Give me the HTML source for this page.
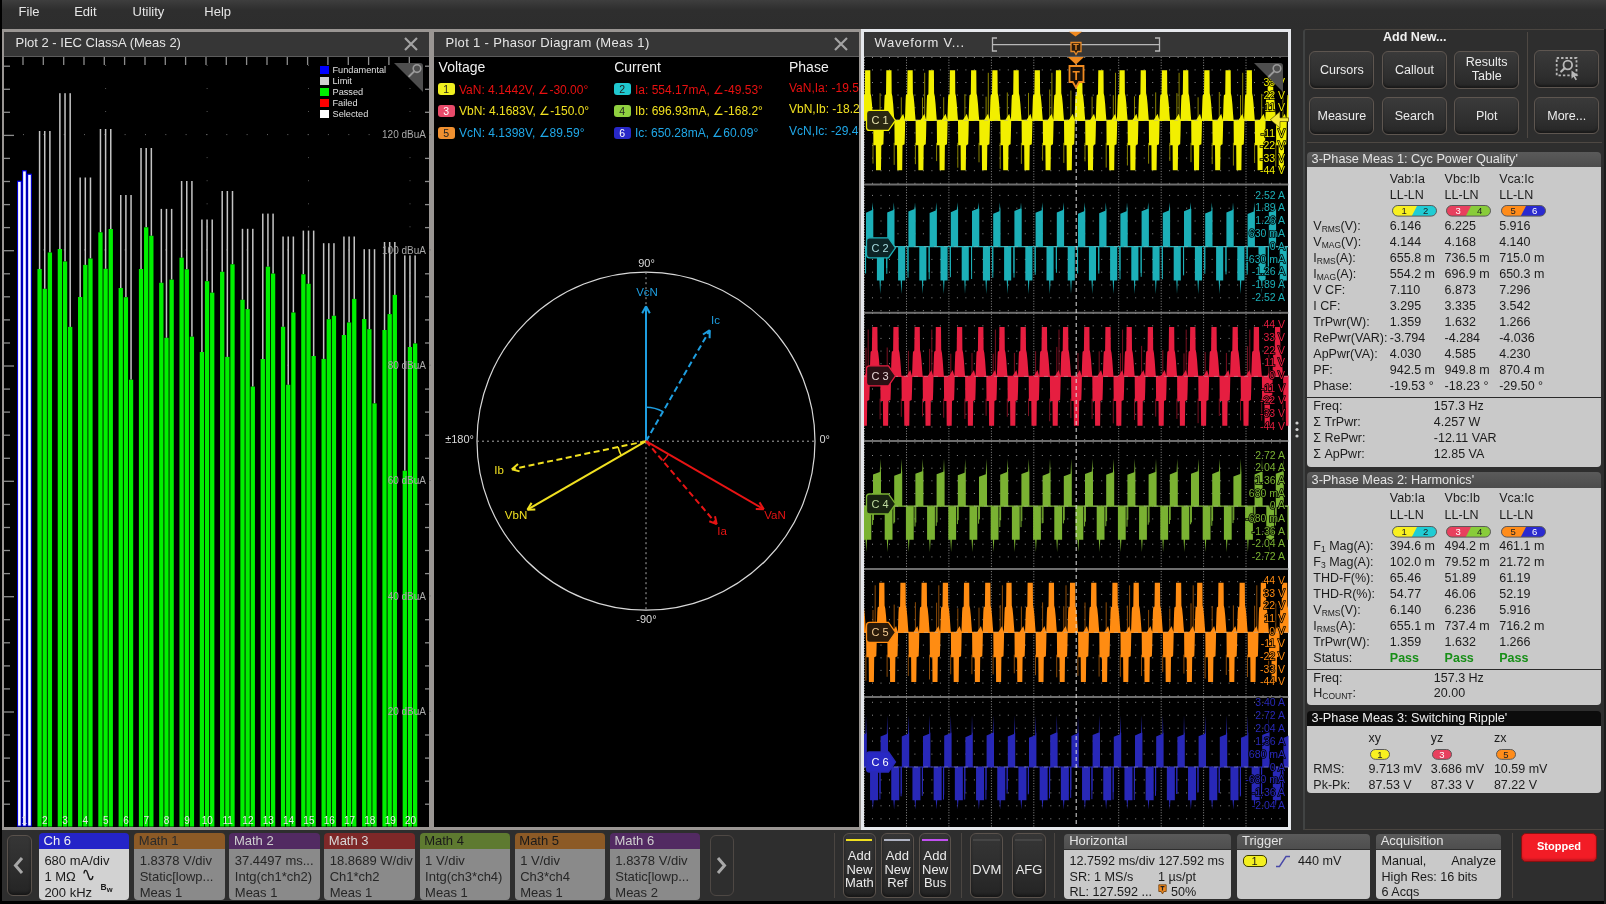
<!DOCTYPE html><html><head><meta charset="utf-8"><style>
html,body{margin:0;padding:0;}
body{width:1606px;height:904px;overflow:hidden;position:relative;background:#2e2e2e;font-family:"Liberation Sans", sans-serif;}
.t{position:absolute;white-space:nowrap;line-height:1.15;}
#w{position:absolute;left:0;top:0;width:1606px;height:904px;will-change:transform;}
.b{position:absolute;box-sizing:border-box;}
svg{position:absolute;overflow:visible;}
</style></head><body><div id="w">
<div class="b" style="left:0px;top:0px;width:1606px;height:29px;background:linear-gradient(#3e3e3e 0px,#2e2e2e 10px,#2d2d2d 29px);"></div><div class="b" style="left:0px;top:0px;width:2px;height:904px;background:#000;"></div><div class="b" style="left:0px;top:901px;width:1606px;height:3px;background:#000;"></div><div class="t" style="left:18.6px;top:4.5px;font-size:13px;color:#e6e6e6;font-weight:normal;">File</div><div class="t" style="left:74.2px;top:4.5px;font-size:13px;color:#e6e6e6;font-weight:normal;">Edit</div><div class="t" style="left:132.5px;top:4.5px;font-size:13px;color:#e6e6e6;font-weight:normal;">Utility</div><div class="t" style="left:204.3px;top:4.5px;font-size:13px;color:#e6e6e6;font-weight:normal;">Help</div><div class="b" style="left:2px;top:29px;width:430px;height:801px;background:#000;border:2px solid #9a9693;border-top-width:3px;border-bottom-width:3px;border-right-width:3px;"></div><div class="b" style="left:4px;top:32px;width:425px;height:24px;background:#363636;"></div><div class="b" style="left:4px;top:56px;width:425px;height:1px;background:#5c5c5c;"></div><div class="t" style="left:15.5px;top:35.7px;font-size:13px;color:#e6e6e6;font-weight:normal;">Plot 2 - IEC ClassA (Meas 2)</div><div class="b" style="left:431px;top:29px;width:430px;height:801px;background:#000;border:2px solid #9a9693;border-top-width:3px;border-bottom-width:3px;border-left-width:3px;"></div><div class="b" style="left:434px;top:32px;width:425px;height:24px;background:#363636;"></div><div class="b" style="left:434px;top:56px;width:425px;height:1px;background:#5c5c5c;"></div><div class="t" style="left:445.4px;top:35.8px;font-size:13px;color:#e6e6e6;font-weight:normal;letter-spacing:0.33px;">Plot 1 - Phasor Diagram (Meas 1)</div><div class="b" style="left:861px;top:29px;width:430px;height:801px;background:#000;border:3px solid #e6e8ec;"></div><div class="b" style="left:864px;top:32px;width:424px;height:24px;background:#363636;"></div><div class="b" style="left:864px;top:56px;width:424px;height:1px;background:#5c5c5c;"></div><div class="t" style="left:874.4px;top:35.8px;font-size:13px;color:#e6e6e6;font-weight:normal;letter-spacing:0.75px;">Waveform V...</div><svg style="left:403.7px;top:37.4px" width="14" height="14"><path d="M1 1L13 13M13 1L1 13" stroke="#a3a3a3" stroke-width="2.2"/></svg><svg style="left:833.5px;top:37.4px" width="14" height="14"><path d="M1 1L13 13M13 1L1 13" stroke="#a3a3a3" stroke-width="2.2"/></svg><svg style="left:0;top:0" width="1606" height="904"><line x1="4" y1="804.2" x2="10" y2="804.2" stroke="#8c8c8c" stroke-width="1.3"/><line x1="425" y1="804.2" x2="429" y2="804.2" stroke="#8c8c8c" stroke-width="1.3"/><line x1="4" y1="781.2" x2="10" y2="781.2" stroke="#8c8c8c" stroke-width="1.3"/><line x1="425" y1="781.2" x2="429" y2="781.2" stroke="#8c8c8c" stroke-width="1.3"/><line x1="4" y1="758.1" x2="10" y2="758.1" stroke="#8c8c8c" stroke-width="1.3"/><line x1="425" y1="758.1" x2="429" y2="758.1" stroke="#8c8c8c" stroke-width="1.3"/><line x1="4" y1="735.0" x2="10" y2="735.0" stroke="#8c8c8c" stroke-width="1.3"/><line x1="425" y1="735.0" x2="429" y2="735.0" stroke="#8c8c8c" stroke-width="1.3"/><line x1="4" y1="712.0" x2="14" y2="712.0" stroke="#8c8c8c" stroke-width="1.3"/><line x1="4" y1="688.9" x2="10" y2="688.9" stroke="#8c8c8c" stroke-width="1.3"/><line x1="425" y1="688.9" x2="429" y2="688.9" stroke="#8c8c8c" stroke-width="1.3"/><line x1="4" y1="665.9" x2="10" y2="665.9" stroke="#8c8c8c" stroke-width="1.3"/><line x1="425" y1="665.9" x2="429" y2="665.9" stroke="#8c8c8c" stroke-width="1.3"/><line x1="4" y1="642.8" x2="10" y2="642.8" stroke="#8c8c8c" stroke-width="1.3"/><line x1="425" y1="642.8" x2="429" y2="642.8" stroke="#8c8c8c" stroke-width="1.3"/><line x1="4" y1="619.7" x2="10" y2="619.7" stroke="#8c8c8c" stroke-width="1.3"/><line x1="425" y1="619.7" x2="429" y2="619.7" stroke="#8c8c8c" stroke-width="1.3"/><line x1="4" y1="596.7" x2="14" y2="596.7" stroke="#8c8c8c" stroke-width="1.3"/><line x1="4" y1="573.6" x2="10" y2="573.6" stroke="#8c8c8c" stroke-width="1.3"/><line x1="425" y1="573.6" x2="429" y2="573.6" stroke="#8c8c8c" stroke-width="1.3"/><line x1="4" y1="550.5" x2="10" y2="550.5" stroke="#8c8c8c" stroke-width="1.3"/><line x1="425" y1="550.5" x2="429" y2="550.5" stroke="#8c8c8c" stroke-width="1.3"/><line x1="4" y1="527.5" x2="10" y2="527.5" stroke="#8c8c8c" stroke-width="1.3"/><line x1="425" y1="527.5" x2="429" y2="527.5" stroke="#8c8c8c" stroke-width="1.3"/><line x1="4" y1="504.4" x2="10" y2="504.4" stroke="#8c8c8c" stroke-width="1.3"/><line x1="425" y1="504.4" x2="429" y2="504.4" stroke="#8c8c8c" stroke-width="1.3"/><line x1="4" y1="481.3" x2="14" y2="481.3" stroke="#8c8c8c" stroke-width="1.3"/><line x1="4" y1="458.3" x2="10" y2="458.3" stroke="#8c8c8c" stroke-width="1.3"/><line x1="425" y1="458.3" x2="429" y2="458.3" stroke="#8c8c8c" stroke-width="1.3"/><line x1="4" y1="435.2" x2="10" y2="435.2" stroke="#8c8c8c" stroke-width="1.3"/><line x1="425" y1="435.2" x2="429" y2="435.2" stroke="#8c8c8c" stroke-width="1.3"/><line x1="4" y1="412.1" x2="10" y2="412.1" stroke="#8c8c8c" stroke-width="1.3"/><line x1="425" y1="412.1" x2="429" y2="412.1" stroke="#8c8c8c" stroke-width="1.3"/><line x1="4" y1="389.1" x2="10" y2="389.1" stroke="#8c8c8c" stroke-width="1.3"/><line x1="425" y1="389.1" x2="429" y2="389.1" stroke="#8c8c8c" stroke-width="1.3"/><line x1="4" y1="366.0" x2="14" y2="366.0" stroke="#8c8c8c" stroke-width="1.3"/><line x1="4" y1="343.0" x2="10" y2="343.0" stroke="#8c8c8c" stroke-width="1.3"/><line x1="425" y1="343.0" x2="429" y2="343.0" stroke="#8c8c8c" stroke-width="1.3"/><line x1="4" y1="319.9" x2="10" y2="319.9" stroke="#8c8c8c" stroke-width="1.3"/><line x1="425" y1="319.9" x2="429" y2="319.9" stroke="#8c8c8c" stroke-width="1.3"/><line x1="4" y1="296.8" x2="10" y2="296.8" stroke="#8c8c8c" stroke-width="1.3"/><line x1="425" y1="296.8" x2="429" y2="296.8" stroke="#8c8c8c" stroke-width="1.3"/><line x1="4" y1="273.8" x2="10" y2="273.8" stroke="#8c8c8c" stroke-width="1.3"/><line x1="425" y1="273.8" x2="429" y2="273.8" stroke="#8c8c8c" stroke-width="1.3"/><line x1="4" y1="250.7" x2="14" y2="250.7" stroke="#8c8c8c" stroke-width="1.3"/><line x1="4" y1="227.6" x2="10" y2="227.6" stroke="#8c8c8c" stroke-width="1.3"/><line x1="425" y1="227.6" x2="429" y2="227.6" stroke="#8c8c8c" stroke-width="1.3"/><line x1="4" y1="204.6" x2="10" y2="204.6" stroke="#8c8c8c" stroke-width="1.3"/><line x1="425" y1="204.6" x2="429" y2="204.6" stroke="#8c8c8c" stroke-width="1.3"/><line x1="4" y1="181.5" x2="10" y2="181.5" stroke="#8c8c8c" stroke-width="1.3"/><line x1="425" y1="181.5" x2="429" y2="181.5" stroke="#8c8c8c" stroke-width="1.3"/><line x1="4" y1="158.4" x2="10" y2="158.4" stroke="#8c8c8c" stroke-width="1.3"/><line x1="425" y1="158.4" x2="429" y2="158.4" stroke="#8c8c8c" stroke-width="1.3"/><line x1="4" y1="135.4" x2="14" y2="135.4" stroke="#8c8c8c" stroke-width="1.3"/><line x1="4" y1="112.3" x2="10" y2="112.3" stroke="#8c8c8c" stroke-width="1.3"/><line x1="425" y1="112.3" x2="429" y2="112.3" stroke="#8c8c8c" stroke-width="1.3"/><line x1="4" y1="89.3" x2="10" y2="89.3" stroke="#8c8c8c" stroke-width="1.3"/><line x1="425" y1="89.3" x2="429" y2="89.3" stroke="#8c8c8c" stroke-width="1.3"/><line x1="4" y1="66.2" x2="10" y2="66.2" stroke="#8c8c8c" stroke-width="1.3"/><line x1="425" y1="66.2" x2="429" y2="66.2" stroke="#8c8c8c" stroke-width="1.3"/><line x1="23.0" y1="57" x2="23.0" y2="65" stroke="#8c8c8c" stroke-width="1.3"/><line x1="43.3" y1="57" x2="43.3" y2="65" stroke="#8c8c8c" stroke-width="1.3"/><line x1="63.7" y1="57" x2="63.7" y2="65" stroke="#8c8c8c" stroke-width="1.3"/><line x1="84.0" y1="57" x2="84.0" y2="65" stroke="#8c8c8c" stroke-width="1.3"/><line x1="104.3" y1="57" x2="104.3" y2="65" stroke="#8c8c8c" stroke-width="1.3"/><line x1="124.6" y1="57" x2="124.6" y2="65" stroke="#8c8c8c" stroke-width="1.3"/><line x1="145.0" y1="57" x2="145.0" y2="65" stroke="#8c8c8c" stroke-width="1.3"/><line x1="165.3" y1="57" x2="165.3" y2="65" stroke="#8c8c8c" stroke-width="1.3"/><line x1="185.6" y1="57" x2="185.6" y2="65" stroke="#8c8c8c" stroke-width="1.3"/><line x1="206.0" y1="57" x2="206.0" y2="65" stroke="#8c8c8c" stroke-width="1.3"/><line x1="226.3" y1="57" x2="226.3" y2="65" stroke="#8c8c8c" stroke-width="1.3"/><line x1="246.6" y1="57" x2="246.6" y2="65" stroke="#8c8c8c" stroke-width="1.3"/><line x1="267.0" y1="57" x2="267.0" y2="65" stroke="#8c8c8c" stroke-width="1.3"/><line x1="287.3" y1="57" x2="287.3" y2="65" stroke="#8c8c8c" stroke-width="1.3"/><line x1="307.6" y1="57" x2="307.6" y2="65" stroke="#8c8c8c" stroke-width="1.3"/><line x1="327.9" y1="57" x2="327.9" y2="65" stroke="#8c8c8c" stroke-width="1.3"/><line x1="348.3" y1="57" x2="348.3" y2="65" stroke="#8c8c8c" stroke-width="1.3"/><line x1="368.6" y1="57" x2="368.6" y2="65" stroke="#8c8c8c" stroke-width="1.3"/><line x1="388.9" y1="57" x2="388.9" y2="65" stroke="#8c8c8c" stroke-width="1.3"/><line x1="409.3" y1="57" x2="409.3" y2="65" stroke="#8c8c8c" stroke-width="1.3"/><rect x="23.0" y="710.7" width="1" height="1" fill="#666"/><rect x="43.3" y="710.7" width="1" height="1" fill="#666"/><rect x="63.7" y="710.7" width="1" height="1" fill="#666"/><rect x="84.0" y="710.7" width="1" height="1" fill="#666"/><rect x="104.3" y="710.7" width="1" height="1" fill="#666"/><rect x="124.6" y="710.7" width="1" height="1" fill="#666"/><rect x="145.0" y="710.7" width="1" height="1" fill="#666"/><rect x="165.3" y="710.7" width="1" height="1" fill="#666"/><rect x="185.6" y="710.7" width="1" height="1" fill="#666"/><rect x="206.0" y="710.7" width="1" height="1" fill="#666"/><rect x="226.3" y="710.7" width="1" height="1" fill="#666"/><rect x="246.6" y="710.7" width="1" height="1" fill="#666"/><rect x="267.0" y="710.7" width="1" height="1" fill="#666"/><rect x="287.3" y="710.7" width="1" height="1" fill="#666"/><rect x="307.6" y="710.7" width="1" height="1" fill="#666"/><rect x="327.9" y="710.7" width="1" height="1" fill="#666"/><rect x="348.3" y="710.7" width="1" height="1" fill="#666"/><rect x="368.6" y="710.7" width="1" height="1" fill="#666"/><rect x="388.9" y="710.7" width="1" height="1" fill="#666"/><rect x="409.3" y="710.7" width="1" height="1" fill="#666"/><rect x="429.6" y="710.7" width="1" height="1" fill="#666"/><rect x="23.0" y="595.4" width="1" height="1" fill="#666"/><rect x="43.3" y="595.4" width="1" height="1" fill="#666"/><rect x="63.7" y="595.4" width="1" height="1" fill="#666"/><rect x="84.0" y="595.4" width="1" height="1" fill="#666"/><rect x="104.3" y="595.4" width="1" height="1" fill="#666"/><rect x="124.6" y="595.4" width="1" height="1" fill="#666"/><rect x="145.0" y="595.4" width="1" height="1" fill="#666"/><rect x="165.3" y="595.4" width="1" height="1" fill="#666"/><rect x="185.6" y="595.4" width="1" height="1" fill="#666"/><rect x="206.0" y="595.4" width="1" height="1" fill="#666"/><rect x="226.3" y="595.4" width="1" height="1" fill="#666"/><rect x="246.6" y="595.4" width="1" height="1" fill="#666"/><rect x="267.0" y="595.4" width="1" height="1" fill="#666"/><rect x="287.3" y="595.4" width="1" height="1" fill="#666"/><rect x="307.6" y="595.4" width="1" height="1" fill="#666"/><rect x="327.9" y="595.4" width="1" height="1" fill="#666"/><rect x="348.3" y="595.4" width="1" height="1" fill="#666"/><rect x="368.6" y="595.4" width="1" height="1" fill="#666"/><rect x="388.9" y="595.4" width="1" height="1" fill="#666"/><rect x="409.3" y="595.4" width="1" height="1" fill="#666"/><rect x="429.6" y="595.4" width="1" height="1" fill="#666"/><rect x="23.0" y="480.0" width="1" height="1" fill="#666"/><rect x="43.3" y="480.0" width="1" height="1" fill="#666"/><rect x="63.7" y="480.0" width="1" height="1" fill="#666"/><rect x="84.0" y="480.0" width="1" height="1" fill="#666"/><rect x="104.3" y="480.0" width="1" height="1" fill="#666"/><rect x="124.6" y="480.0" width="1" height="1" fill="#666"/><rect x="145.0" y="480.0" width="1" height="1" fill="#666"/><rect x="165.3" y="480.0" width="1" height="1" fill="#666"/><rect x="185.6" y="480.0" width="1" height="1" fill="#666"/><rect x="206.0" y="480.0" width="1" height="1" fill="#666"/><rect x="226.3" y="480.0" width="1" height="1" fill="#666"/><rect x="246.6" y="480.0" width="1" height="1" fill="#666"/><rect x="267.0" y="480.0" width="1" height="1" fill="#666"/><rect x="287.3" y="480.0" width="1" height="1" fill="#666"/><rect x="307.6" y="480.0" width="1" height="1" fill="#666"/><rect x="327.9" y="480.0" width="1" height="1" fill="#666"/><rect x="348.3" y="480.0" width="1" height="1" fill="#666"/><rect x="368.6" y="480.0" width="1" height="1" fill="#666"/><rect x="388.9" y="480.0" width="1" height="1" fill="#666"/><rect x="409.3" y="480.0" width="1" height="1" fill="#666"/><rect x="429.6" y="480.0" width="1" height="1" fill="#666"/><rect x="23.0" y="364.7" width="1" height="1" fill="#666"/><rect x="43.3" y="364.7" width="1" height="1" fill="#666"/><rect x="63.7" y="364.7" width="1" height="1" fill="#666"/><rect x="84.0" y="364.7" width="1" height="1" fill="#666"/><rect x="104.3" y="364.7" width="1" height="1" fill="#666"/><rect x="124.6" y="364.7" width="1" height="1" fill="#666"/><rect x="145.0" y="364.7" width="1" height="1" fill="#666"/><rect x="165.3" y="364.7" width="1" height="1" fill="#666"/><rect x="185.6" y="364.7" width="1" height="1" fill="#666"/><rect x="206.0" y="364.7" width="1" height="1" fill="#666"/><rect x="226.3" y="364.7" width="1" height="1" fill="#666"/><rect x="246.6" y="364.7" width="1" height="1" fill="#666"/><rect x="267.0" y="364.7" width="1" height="1" fill="#666"/><rect x="287.3" y="364.7" width="1" height="1" fill="#666"/><rect x="307.6" y="364.7" width="1" height="1" fill="#666"/><rect x="327.9" y="364.7" width="1" height="1" fill="#666"/><rect x="348.3" y="364.7" width="1" height="1" fill="#666"/><rect x="368.6" y="364.7" width="1" height="1" fill="#666"/><rect x="388.9" y="364.7" width="1" height="1" fill="#666"/><rect x="409.3" y="364.7" width="1" height="1" fill="#666"/><rect x="429.6" y="364.7" width="1" height="1" fill="#666"/><rect x="23.0" y="249.4" width="1" height="1" fill="#666"/><rect x="43.3" y="249.4" width="1" height="1" fill="#666"/><rect x="63.7" y="249.4" width="1" height="1" fill="#666"/><rect x="84.0" y="249.4" width="1" height="1" fill="#666"/><rect x="104.3" y="249.4" width="1" height="1" fill="#666"/><rect x="124.6" y="249.4" width="1" height="1" fill="#666"/><rect x="145.0" y="249.4" width="1" height="1" fill="#666"/><rect x="165.3" y="249.4" width="1" height="1" fill="#666"/><rect x="185.6" y="249.4" width="1" height="1" fill="#666"/><rect x="206.0" y="249.4" width="1" height="1" fill="#666"/><rect x="226.3" y="249.4" width="1" height="1" fill="#666"/><rect x="246.6" y="249.4" width="1" height="1" fill="#666"/><rect x="267.0" y="249.4" width="1" height="1" fill="#666"/><rect x="287.3" y="249.4" width="1" height="1" fill="#666"/><rect x="307.6" y="249.4" width="1" height="1" fill="#666"/><rect x="327.9" y="249.4" width="1" height="1" fill="#666"/><rect x="348.3" y="249.4" width="1" height="1" fill="#666"/><rect x="368.6" y="249.4" width="1" height="1" fill="#666"/><rect x="388.9" y="249.4" width="1" height="1" fill="#666"/><rect x="409.3" y="249.4" width="1" height="1" fill="#666"/><rect x="429.6" y="249.4" width="1" height="1" fill="#666"/><rect x="23.0" y="134.1" width="1" height="1" fill="#666"/><rect x="43.3" y="134.1" width="1" height="1" fill="#666"/><rect x="63.7" y="134.1" width="1" height="1" fill="#666"/><rect x="84.0" y="134.1" width="1" height="1" fill="#666"/><rect x="104.3" y="134.1" width="1" height="1" fill="#666"/><rect x="124.6" y="134.1" width="1" height="1" fill="#666"/><rect x="145.0" y="134.1" width="1" height="1" fill="#666"/><rect x="165.3" y="134.1" width="1" height="1" fill="#666"/><rect x="185.6" y="134.1" width="1" height="1" fill="#666"/><rect x="206.0" y="134.1" width="1" height="1" fill="#666"/><rect x="226.3" y="134.1" width="1" height="1" fill="#666"/><rect x="246.6" y="134.1" width="1" height="1" fill="#666"/><rect x="267.0" y="134.1" width="1" height="1" fill="#666"/><rect x="287.3" y="134.1" width="1" height="1" fill="#666"/><rect x="307.6" y="134.1" width="1" height="1" fill="#666"/><rect x="327.9" y="134.1" width="1" height="1" fill="#666"/><rect x="348.3" y="134.1" width="1" height="1" fill="#666"/><rect x="368.6" y="134.1" width="1" height="1" fill="#666"/><rect x="388.9" y="134.1" width="1" height="1" fill="#666"/><rect x="409.3" y="134.1" width="1" height="1" fill="#666"/><rect x="429.6" y="134.1" width="1" height="1" fill="#666"/><rect x="105.1" y="826.0" width="1" height="1" fill="#555"/><rect x="105.1" y="802.9" width="1" height="1" fill="#555"/><rect x="105.1" y="779.9" width="1" height="1" fill="#555"/><rect x="105.1" y="756.8" width="1" height="1" fill="#555"/><rect x="105.1" y="733.7" width="1" height="1" fill="#555"/><rect x="105.1" y="710.7" width="1" height="1" fill="#555"/><rect x="105.1" y="687.6" width="1" height="1" fill="#555"/><rect x="105.1" y="664.6" width="1" height="1" fill="#555"/><rect x="105.1" y="641.5" width="1" height="1" fill="#555"/><rect x="105.1" y="618.4" width="1" height="1" fill="#555"/><rect x="105.1" y="595.4" width="1" height="1" fill="#555"/><rect x="105.1" y="572.3" width="1" height="1" fill="#555"/><rect x="105.1" y="549.2" width="1" height="1" fill="#555"/><rect x="105.1" y="526.2" width="1" height="1" fill="#555"/><rect x="105.1" y="503.1" width="1" height="1" fill="#555"/><rect x="105.1" y="480.0" width="1" height="1" fill="#555"/><rect x="105.1" y="457.0" width="1" height="1" fill="#555"/><rect x="105.1" y="433.9" width="1" height="1" fill="#555"/><rect x="105.1" y="410.8" width="1" height="1" fill="#555"/><rect x="105.1" y="387.8" width="1" height="1" fill="#555"/><rect x="105.1" y="364.7" width="1" height="1" fill="#555"/><rect x="105.1" y="341.7" width="1" height="1" fill="#555"/><rect x="105.1" y="318.6" width="1" height="1" fill="#555"/><rect x="105.1" y="295.5" width="1" height="1" fill="#555"/><rect x="105.1" y="272.5" width="1" height="1" fill="#555"/><rect x="105.1" y="249.4" width="1" height="1" fill="#555"/><rect x="105.1" y="226.3" width="1" height="1" fill="#555"/><rect x="105.1" y="203.3" width="1" height="1" fill="#555"/><rect x="105.1" y="180.2" width="1" height="1" fill="#555"/><rect x="105.1" y="157.1" width="1" height="1" fill="#555"/><rect x="105.1" y="134.1" width="1" height="1" fill="#555"/><rect x="105.1" y="111.0" width="1" height="1" fill="#555"/><rect x="105.1" y="88.0" width="1" height="1" fill="#555"/><rect x="105.1" y="64.9" width="1" height="1" fill="#555"/><rect x="206.6" y="826.0" width="1" height="1" fill="#555"/><rect x="206.6" y="802.9" width="1" height="1" fill="#555"/><rect x="206.6" y="779.9" width="1" height="1" fill="#555"/><rect x="206.6" y="756.8" width="1" height="1" fill="#555"/><rect x="206.6" y="733.7" width="1" height="1" fill="#555"/><rect x="206.6" y="710.7" width="1" height="1" fill="#555"/><rect x="206.6" y="687.6" width="1" height="1" fill="#555"/><rect x="206.6" y="664.6" width="1" height="1" fill="#555"/><rect x="206.6" y="641.5" width="1" height="1" fill="#555"/><rect x="206.6" y="618.4" width="1" height="1" fill="#555"/><rect x="206.6" y="595.4" width="1" height="1" fill="#555"/><rect x="206.6" y="572.3" width="1" height="1" fill="#555"/><rect x="206.6" y="549.2" width="1" height="1" fill="#555"/><rect x="206.6" y="526.2" width="1" height="1" fill="#555"/><rect x="206.6" y="503.1" width="1" height="1" fill="#555"/><rect x="206.6" y="480.0" width="1" height="1" fill="#555"/><rect x="206.6" y="457.0" width="1" height="1" fill="#555"/><rect x="206.6" y="433.9" width="1" height="1" fill="#555"/><rect x="206.6" y="410.8" width="1" height="1" fill="#555"/><rect x="206.6" y="387.8" width="1" height="1" fill="#555"/><rect x="206.6" y="364.7" width="1" height="1" fill="#555"/><rect x="206.6" y="341.7" width="1" height="1" fill="#555"/><rect x="206.6" y="318.6" width="1" height="1" fill="#555"/><rect x="206.6" y="295.5" width="1" height="1" fill="#555"/><rect x="206.6" y="272.5" width="1" height="1" fill="#555"/><rect x="206.6" y="249.4" width="1" height="1" fill="#555"/><rect x="206.6" y="226.3" width="1" height="1" fill="#555"/><rect x="206.6" y="203.3" width="1" height="1" fill="#555"/><rect x="206.6" y="180.2" width="1" height="1" fill="#555"/><rect x="206.6" y="157.1" width="1" height="1" fill="#555"/><rect x="206.6" y="134.1" width="1" height="1" fill="#555"/><rect x="206.6" y="111.0" width="1" height="1" fill="#555"/><rect x="206.6" y="88.0" width="1" height="1" fill="#555"/><rect x="206.6" y="64.9" width="1" height="1" fill="#555"/><rect x="308.0" y="826.0" width="1" height="1" fill="#555"/><rect x="308.0" y="802.9" width="1" height="1" fill="#555"/><rect x="308.0" y="779.9" width="1" height="1" fill="#555"/><rect x="308.0" y="756.8" width="1" height="1" fill="#555"/><rect x="308.0" y="733.7" width="1" height="1" fill="#555"/><rect x="308.0" y="710.7" width="1" height="1" fill="#555"/><rect x="308.0" y="687.6" width="1" height="1" fill="#555"/><rect x="308.0" y="664.6" width="1" height="1" fill="#555"/><rect x="308.0" y="641.5" width="1" height="1" fill="#555"/><rect x="308.0" y="618.4" width="1" height="1" fill="#555"/><rect x="308.0" y="595.4" width="1" height="1" fill="#555"/><rect x="308.0" y="572.3" width="1" height="1" fill="#555"/><rect x="308.0" y="549.2" width="1" height="1" fill="#555"/><rect x="308.0" y="526.2" width="1" height="1" fill="#555"/><rect x="308.0" y="503.1" width="1" height="1" fill="#555"/><rect x="308.0" y="480.0" width="1" height="1" fill="#555"/><rect x="308.0" y="457.0" width="1" height="1" fill="#555"/><rect x="308.0" y="433.9" width="1" height="1" fill="#555"/><rect x="308.0" y="410.8" width="1" height="1" fill="#555"/><rect x="308.0" y="387.8" width="1" height="1" fill="#555"/><rect x="308.0" y="364.7" width="1" height="1" fill="#555"/><rect x="308.0" y="341.7" width="1" height="1" fill="#555"/><rect x="308.0" y="318.6" width="1" height="1" fill="#555"/><rect x="308.0" y="295.5" width="1" height="1" fill="#555"/><rect x="308.0" y="272.5" width="1" height="1" fill="#555"/><rect x="308.0" y="249.4" width="1" height="1" fill="#555"/><rect x="308.0" y="226.3" width="1" height="1" fill="#555"/><rect x="308.0" y="203.3" width="1" height="1" fill="#555"/><rect x="308.0" y="180.2" width="1" height="1" fill="#555"/><rect x="308.0" y="157.1" width="1" height="1" fill="#555"/><rect x="308.0" y="134.1" width="1" height="1" fill="#555"/><rect x="308.0" y="111.0" width="1" height="1" fill="#555"/><rect x="308.0" y="88.0" width="1" height="1" fill="#555"/><rect x="308.0" y="64.9" width="1" height="1" fill="#555"/><rect x="409.5" y="826.0" width="1" height="1" fill="#555"/><rect x="409.5" y="802.9" width="1" height="1" fill="#555"/><rect x="409.5" y="779.9" width="1" height="1" fill="#555"/><rect x="409.5" y="756.8" width="1" height="1" fill="#555"/><rect x="409.5" y="733.7" width="1" height="1" fill="#555"/><rect x="409.5" y="710.7" width="1" height="1" fill="#555"/><rect x="409.5" y="687.6" width="1" height="1" fill="#555"/><rect x="409.5" y="664.6" width="1" height="1" fill="#555"/><rect x="409.5" y="641.5" width="1" height="1" fill="#555"/><rect x="409.5" y="618.4" width="1" height="1" fill="#555"/><rect x="409.5" y="595.4" width="1" height="1" fill="#555"/><rect x="409.5" y="572.3" width="1" height="1" fill="#555"/><rect x="409.5" y="549.2" width="1" height="1" fill="#555"/><rect x="409.5" y="526.2" width="1" height="1" fill="#555"/><rect x="409.5" y="503.1" width="1" height="1" fill="#555"/><rect x="409.5" y="480.0" width="1" height="1" fill="#555"/><rect x="409.5" y="457.0" width="1" height="1" fill="#555"/><rect x="409.5" y="433.9" width="1" height="1" fill="#555"/><rect x="409.5" y="410.8" width="1" height="1" fill="#555"/><rect x="409.5" y="387.8" width="1" height="1" fill="#555"/><rect x="409.5" y="364.7" width="1" height="1" fill="#555"/><rect x="409.5" y="341.7" width="1" height="1" fill="#555"/><rect x="409.5" y="318.6" width="1" height="1" fill="#555"/><rect x="409.5" y="295.5" width="1" height="1" fill="#555"/><rect x="409.5" y="272.5" width="1" height="1" fill="#555"/><rect x="409.5" y="249.4" width="1" height="1" fill="#555"/><rect x="409.5" y="226.3" width="1" height="1" fill="#555"/><rect x="409.5" y="203.3" width="1" height="1" fill="#555"/><rect x="409.5" y="180.2" width="1" height="1" fill="#555"/><rect x="409.5" y="157.1" width="1" height="1" fill="#555"/><rect x="409.5" y="134.1" width="1" height="1" fill="#555"/><rect x="409.5" y="111.0" width="1" height="1" fill="#555"/><rect x="409.5" y="88.0" width="1" height="1" fill="#555"/><rect x="409.5" y="64.9" width="1" height="1" fill="#555"/><rect x="17.10" y="180.7" width="4.6" height="645.9" fill="#0000f0"/><rect x="18.10" y="181.9" width="2.6" height="643.7" fill="#ffffff"/><rect x="22.15" y="170.2" width="4.6" height="656.4" fill="#0000f0"/><rect x="23.15" y="171.4" width="2.6" height="654.2" fill="#ffffff"/><rect x="27.20" y="173.7" width="4.6" height="652.9" fill="#0000f0"/><rect x="28.20" y="174.9" width="2.6" height="650.7" fill="#ffffff"/><rect x="38.84" y="131.0" width="1.5" height="138.0" fill="#c4c4c4"/><rect x="37.44" y="269.0" width="4.3" height="557.6" fill="#00f000"/><rect x="43.99" y="131.0" width="1.5" height="157.8" fill="#c4c4c4"/><rect x="42.59" y="288.8" width="4.3" height="537.8" fill="#00f000"/><rect x="49.14" y="131.0" width="1.5" height="121.5" fill="#c4c4c4"/><rect x="47.74" y="252.5" width="4.3" height="574.1" fill="#00f000"/><rect x="59.13" y="93.2" width="1.5" height="155.8" fill="#c4c4c4"/><rect x="57.73" y="249.0" width="4.3" height="577.6" fill="#00f000"/><rect x="64.28" y="93.2" width="1.5" height="168.3" fill="#c4c4c4"/><rect x="62.88" y="261.5" width="4.3" height="565.1" fill="#00f000"/><rect x="69.43" y="93.2" width="1.5" height="233.7" fill="#c4c4c4"/><rect x="68.03" y="326.9" width="4.3" height="499.7" fill="#00f000"/><rect x="79.42" y="177.5" width="1.5" height="119.5" fill="#c4c4c4"/><rect x="78.02" y="297.0" width="4.3" height="529.6" fill="#00f000"/><rect x="84.57" y="177.5" width="1.5" height="87.4" fill="#c4c4c4"/><rect x="83.17" y="264.9" width="4.3" height="561.7" fill="#00f000"/><rect x="89.72" y="177.5" width="1.5" height="81.0" fill="#c4c4c4"/><rect x="88.32" y="258.5" width="4.3" height="568.1" fill="#00f000"/><rect x="99.71" y="129.0" width="1.5" height="103.3" fill="#c4c4c4"/><rect x="98.31" y="232.3" width="4.3" height="594.3" fill="#00f000"/><rect x="104.86" y="129.0" width="1.5" height="139.8" fill="#c4c4c4"/><rect x="103.46" y="268.8" width="4.3" height="557.8" fill="#00f000"/><rect x="110.01" y="129.0" width="1.5" height="100.0" fill="#c4c4c4"/><rect x="108.61" y="229.0" width="4.3" height="597.6" fill="#00f000"/><rect x="120.00" y="195.0" width="1.5" height="93.0" fill="#c4c4c4"/><rect x="118.60" y="288.0" width="4.3" height="538.6" fill="#00f000"/><rect x="125.15" y="195.0" width="1.5" height="102.2" fill="#c4c4c4"/><rect x="123.75" y="297.2" width="4.3" height="529.4" fill="#00f000"/><rect x="130.30" y="195.0" width="1.5" height="184.7" fill="#c4c4c4"/><rect x="128.90" y="379.7" width="4.3" height="446.9" fill="#00f000"/><rect x="140.29" y="148.0" width="1.5" height="121.0" fill="#c4c4c4"/><rect x="138.89" y="269.0" width="4.3" height="557.6" fill="#00f000"/><rect x="145.44" y="148.0" width="1.5" height="79.3" fill="#c4c4c4"/><rect x="144.04" y="227.3" width="4.3" height="599.3" fill="#00f000"/><rect x="150.59" y="148.0" width="1.5" height="87.8" fill="#c4c4c4"/><rect x="149.19" y="235.8" width="4.3" height="590.8" fill="#00f000"/><rect x="160.58" y="208.9" width="1.5" height="73.9" fill="#c4c4c4"/><rect x="159.18" y="282.8" width="4.3" height="543.8" fill="#00f000"/><rect x="165.73" y="208.9" width="1.5" height="128.9" fill="#c4c4c4"/><rect x="164.33" y="337.8" width="4.3" height="488.8" fill="#00f000"/><rect x="170.88" y="208.9" width="1.5" height="70.7" fill="#c4c4c4"/><rect x="169.48" y="279.6" width="4.3" height="547.0" fill="#00f000"/><rect x="180.87" y="181.0" width="1.5" height="76.7" fill="#c4c4c4"/><rect x="179.47" y="257.7" width="4.3" height="568.9" fill="#00f000"/><rect x="186.02" y="181.0" width="1.5" height="88.3" fill="#c4c4c4"/><rect x="184.62" y="269.3" width="4.3" height="557.3" fill="#00f000"/><rect x="191.17" y="181.0" width="1.5" height="155.7" fill="#c4c4c4"/><rect x="189.77" y="336.7" width="4.3" height="489.9" fill="#00f000"/><rect x="201.16" y="219.5" width="1.5" height="132.5" fill="#c4c4c4"/><rect x="199.76" y="352.0" width="4.3" height="474.6" fill="#00f000"/><rect x="206.31" y="219.5" width="1.5" height="61.7" fill="#c4c4c4"/><rect x="204.91" y="281.2" width="4.3" height="545.4" fill="#00f000"/><rect x="211.46" y="219.5" width="1.5" height="73.2" fill="#c4c4c4"/><rect x="210.06" y="292.7" width="4.3" height="533.9" fill="#00f000"/><rect x="221.45" y="191.0" width="1.5" height="80.8" fill="#c4c4c4"/><rect x="220.05" y="271.8" width="4.3" height="554.8" fill="#00f000"/><rect x="226.60" y="191.0" width="1.5" height="165.9" fill="#c4c4c4"/><rect x="225.20" y="356.9" width="4.3" height="469.7" fill="#00f000"/><rect x="231.75" y="191.0" width="1.5" height="73.3" fill="#c4c4c4"/><rect x="230.35" y="264.3" width="4.3" height="562.3" fill="#00f000"/><rect x="241.74" y="228.8" width="1.5" height="71.0" fill="#c4c4c4"/><rect x="240.34" y="299.8" width="4.3" height="526.8" fill="#00f000"/><rect x="246.89" y="228.8" width="1.5" height="80.3" fill="#c4c4c4"/><rect x="245.49" y="309.1" width="4.3" height="517.5" fill="#00f000"/><rect x="252.04" y="228.8" width="1.5" height="157.8" fill="#c4c4c4"/><rect x="250.64" y="386.6" width="4.3" height="440.0" fill="#00f000"/><rect x="262.03" y="213.6" width="1.5" height="145.4" fill="#c4c4c4"/><rect x="260.63" y="359.0" width="4.3" height="467.6" fill="#00f000"/><rect x="267.18" y="213.6" width="1.5" height="53.1" fill="#c4c4c4"/><rect x="265.78" y="266.7" width="4.3" height="559.9" fill="#00f000"/><rect x="272.33" y="213.6" width="1.5" height="60.0" fill="#c4c4c4"/><rect x="270.93" y="273.6" width="4.3" height="553.0" fill="#00f000"/><rect x="282.32" y="236.5" width="1.5" height="90.3" fill="#c4c4c4"/><rect x="280.92" y="326.8" width="4.3" height="499.8" fill="#00f000"/><rect x="287.47" y="236.5" width="1.5" height="148.3" fill="#c4c4c4"/><rect x="286.07" y="384.8" width="4.3" height="441.8" fill="#00f000"/><rect x="292.62" y="236.5" width="1.5" height="76.0" fill="#c4c4c4"/><rect x="291.22" y="312.5" width="4.3" height="514.1" fill="#00f000"/><rect x="302.61" y="230.6" width="1.5" height="43.7" fill="#c4c4c4"/><rect x="301.21" y="274.3" width="4.3" height="552.3" fill="#00f000"/><rect x="307.76" y="230.6" width="1.5" height="53.2" fill="#c4c4c4"/><rect x="306.36" y="283.8" width="4.3" height="542.8" fill="#00f000"/><rect x="312.91" y="230.6" width="1.5" height="125.4" fill="#c4c4c4"/><rect x="311.51" y="356.0" width="4.3" height="470.6" fill="#00f000"/><rect x="322.90" y="243.2" width="1.5" height="115.7" fill="#c4c4c4"/><rect x="321.50" y="358.9" width="4.3" height="467.7" fill="#00f000"/><rect x="328.05" y="243.2" width="1.5" height="76.0" fill="#c4c4c4"/><rect x="326.65" y="319.2" width="4.3" height="507.4" fill="#00f000"/><rect x="333.20" y="243.2" width="1.5" height="72.6" fill="#c4c4c4"/><rect x="331.80" y="315.8" width="4.3" height="510.8" fill="#00f000"/><rect x="343.19" y="236.5" width="1.5" height="98.5" fill="#c4c4c4"/><rect x="341.79" y="335.0" width="4.3" height="491.6" fill="#00f000"/><rect x="348.34" y="236.5" width="1.5" height="86.0" fill="#c4c4c4"/><rect x="346.94" y="322.5" width="4.3" height="504.1" fill="#00f000"/><rect x="353.49" y="236.5" width="1.5" height="62.4" fill="#c4c4c4"/><rect x="352.09" y="298.9" width="4.3" height="527.7" fill="#00f000"/><rect x="363.48" y="249.2" width="1.5" height="69.8" fill="#c4c4c4"/><rect x="362.08" y="319.0" width="4.3" height="507.6" fill="#00f000"/><rect x="368.63" y="249.2" width="1.5" height="80.0" fill="#c4c4c4"/><rect x="367.23" y="329.2" width="4.3" height="497.4" fill="#00f000"/><rect x="373.78" y="249.2" width="1.5" height="154.2" fill="#c4c4c4"/><rect x="372.38" y="403.4" width="4.3" height="423.2" fill="#00f000"/><rect x="383.77" y="242.0" width="1.5" height="88.0" fill="#c4c4c4"/><rect x="382.37" y="330.0" width="4.3" height="496.6" fill="#00f000"/><rect x="388.92" y="242.0" width="1.5" height="72.1" fill="#c4c4c4"/><rect x="387.52" y="314.1" width="4.3" height="512.5" fill="#00f000"/><rect x="394.07" y="242.0" width="1.5" height="52.9" fill="#c4c4c4"/><rect x="392.67" y="294.9" width="4.3" height="531.7" fill="#00f000"/><rect x="404.06" y="255.4" width="1.5" height="215.3" fill="#c4c4c4"/><rect x="402.66" y="470.7" width="4.3" height="355.9" fill="#00f000"/><rect x="409.21" y="255.4" width="1.5" height="91.6" fill="#c4c4c4"/><rect x="407.81" y="347.0" width="4.3" height="479.6" fill="#00f000"/><rect x="414.36" y="255.4" width="1.5" height="88.1" fill="#c4c4c4"/><rect x="412.96" y="343.5" width="4.3" height="483.1" fill="#00f000"/><text x="24.4" y="824" font-size="10" fill="#e8e8e8" text-anchor="middle" font-family="Liberation Sans">1</text><text x="44.7" y="824" font-size="10" fill="#e8e8e8" text-anchor="middle" font-family="Liberation Sans">2</text><text x="65.0" y="824" font-size="10" fill="#e8e8e8" text-anchor="middle" font-family="Liberation Sans">3</text><text x="85.4" y="824" font-size="10" fill="#e8e8e8" text-anchor="middle" font-family="Liberation Sans">4</text><text x="105.7" y="824" font-size="10" fill="#e8e8e8" text-anchor="middle" font-family="Liberation Sans">5</text><text x="126.0" y="824" font-size="10" fill="#e8e8e8" text-anchor="middle" font-family="Liberation Sans">6</text><text x="146.3" y="824" font-size="10" fill="#e8e8e8" text-anchor="middle" font-family="Liberation Sans">7</text><text x="166.6" y="824" font-size="10" fill="#e8e8e8" text-anchor="middle" font-family="Liberation Sans">8</text><text x="187.0" y="824" font-size="10" fill="#e8e8e8" text-anchor="middle" font-family="Liberation Sans">9</text><text x="207.3" y="824" font-size="10" fill="#e8e8e8" text-anchor="middle" font-family="Liberation Sans">10</text><text x="227.6" y="824" font-size="10" fill="#e8e8e8" text-anchor="middle" font-family="Liberation Sans">11</text><text x="247.9" y="824" font-size="10" fill="#e8e8e8" text-anchor="middle" font-family="Liberation Sans">12</text><text x="268.2" y="824" font-size="10" fill="#e8e8e8" text-anchor="middle" font-family="Liberation Sans">13</text><text x="288.6" y="824" font-size="10" fill="#e8e8e8" text-anchor="middle" font-family="Liberation Sans">14</text><text x="308.9" y="824" font-size="10" fill="#e8e8e8" text-anchor="middle" font-family="Liberation Sans">15</text><text x="329.2" y="824" font-size="10" fill="#e8e8e8" text-anchor="middle" font-family="Liberation Sans">16</text><text x="349.5" y="824" font-size="10" fill="#e8e8e8" text-anchor="middle" font-family="Liberation Sans">17</text><text x="369.8" y="824" font-size="10" fill="#e8e8e8" text-anchor="middle" font-family="Liberation Sans">18</text><text x="390.2" y="824" font-size="10" fill="#e8e8e8" text-anchor="middle" font-family="Liberation Sans">19</text><text x="410.5" y="824" font-size="10" fill="#e8e8e8" text-anchor="middle" font-family="Liberation Sans">20</text><text x="426" y="138.4" font-size="10" fill="#a8a8a8" text-anchor="end" font-family="Liberation Sans">120 dBuA</text><text x="426" y="253.7" font-size="10" fill="#a8a8a8" text-anchor="end" font-family="Liberation Sans">100 dBuA</text><text x="426" y="369.0" font-size="10" fill="#a8a8a8" text-anchor="end" font-family="Liberation Sans">80 dBuA</text><text x="426" y="484.3" font-size="10" fill="#a8a8a8" text-anchor="end" font-family="Liberation Sans">60 dBuA</text><text x="426" y="599.7" font-size="10" fill="#a8a8a8" text-anchor="end" font-family="Liberation Sans">40 dBuA</text><text x="426" y="715.0" font-size="10" fill="#a8a8a8" text-anchor="end" font-family="Liberation Sans">20 dBuA</text></svg><div class="b" style="left:320px;top:65.7px;width:8.5px;height:8.5px;background:#0000ff;"></div><div class="t" style="left:332.5px;top:65.3px;font-size:9.2px;color:#e0e0e0;font-weight:normal;">Fundamental</div><div class="b" style="left:320px;top:76.7px;width:8.5px;height:8.5px;background:#d0d0d0;"></div><div class="t" style="left:332.5px;top:76.3px;font-size:9.2px;color:#e0e0e0;font-weight:normal;">Limit</div><div class="b" style="left:320px;top:87.7px;width:8.5px;height:8.5px;background:#00ee00;"></div><div class="t" style="left:332.5px;top:87.3px;font-size:9.2px;color:#e0e0e0;font-weight:normal;">Passed</div><div class="b" style="left:320px;top:98.7px;width:8.5px;height:8.5px;background:#ff0000;"></div><div class="t" style="left:332.5px;top:98.3px;font-size:9.2px;color:#e0e0e0;font-weight:normal;">Failed</div><div class="b" style="left:320px;top:109.7px;width:8.5px;height:8.5px;background:#ffffff;"></div><div class="t" style="left:332.5px;top:109.3px;font-size:9.2px;color:#e0e0e0;font-weight:normal;">Selected</div><svg style="left:394px;top:63px" width="30" height="30"><path d="M0 0 L26 0 Q29 0 29 3 L29 29 Z" fill="#4e4e4e"/><circle cx="23" cy="5.6" r="3.8" fill="none" stroke="#9a9a9a" stroke-width="1.6"/><line x1="20.2" y1="8.4" x2="15.2" y2="13.2" stroke="#9a9a9a" stroke-width="2" stroke-linecap="round"/></svg><div class="t" style="left:438.6px;top:59.3px;font-size:14px;color:#f0f0f0;font-weight:normal;">Voltage</div><div class="t" style="left:614.2px;top:59.3px;font-size:14px;color:#f0f0f0;font-weight:normal;">Current</div><div class="t" style="left:789.0px;top:59.3px;font-size:14px;color:#f0f0f0;font-weight:normal;">Phase</div><div class="b" style="left:438px;top:83.3px;width:16.5px;height:12px;background:#f0f020;border-radius:3px;font-size:10.5px;line-height:12px;text-align:center;color:#222;">1</div><div class="t" style="left:459.0px;top:83.7px;font-size:12px;color:#e81010;font-weight:normal;">VaN: 4.1442V, ∠-30.00°</div><div class="b" style="left:614px;top:83.3px;width:16.5px;height:12px;background:#20c8d0;border-radius:3px;font-size:10.5px;line-height:12px;text-align:center;color:#222;">2</div><div class="t" style="left:635.0px;top:83.7px;font-size:12px;color:#e81010;font-weight:normal;">Ia: 554.17mA, ∠-49.53°</div><div class="b" style="left:789px;top:79.3px;width:70px;height:17px;overflow:hidden;"><div class="t" style="left:0;top:2.3px;font-size:12px;color:#e81010">VaN,Ia: -19.53°</div></div><div class="b" style="left:438px;top:104.8px;width:16.5px;height:12px;background:#e84a6a;border-radius:3px;font-size:10.5px;line-height:12px;text-align:center;color:#fff;">3</div><div class="t" style="left:459.0px;top:105.2px;font-size:12px;color:#f0e020;font-weight:normal;">VbN: 4.1683V, ∠-150.0°</div><div class="b" style="left:614px;top:104.8px;width:16.5px;height:12px;background:#90d040;border-radius:3px;font-size:10.5px;line-height:12px;text-align:center;color:#222;">4</div><div class="t" style="left:635.0px;top:105.2px;font-size:12px;color:#f0e020;font-weight:normal;">Ib: 696.93mA, ∠-168.2°</div><div class="b" style="left:789px;top:100.8px;width:70px;height:17px;overflow:hidden;"><div class="t" style="left:0;top:2.3px;font-size:12px;color:#f0e020">VbN,Ib: -18.23°</div></div><div class="b" style="left:438px;top:126.5px;width:16.5px;height:12px;background:#f09030;border-radius:3px;font-size:10.5px;line-height:12px;text-align:center;color:#222;">5</div><div class="t" style="left:459.0px;top:126.9px;font-size:12px;color:#20a8e8;font-weight:normal;">VcN: 4.1398V, ∠89.59°</div><div class="b" style="left:614px;top:126.5px;width:16.5px;height:12px;background:#2828c8;border-radius:3px;font-size:10.5px;line-height:12px;text-align:center;color:#fff;">6</div><div class="t" style="left:635.0px;top:126.9px;font-size:12px;color:#20a8e8;font-weight:normal;">Ic: 650.28mA, ∠60.09°</div><div class="b" style="left:789px;top:122.5px;width:70px;height:17px;overflow:hidden;"><div class="t" style="left:0;top:2.3px;font-size:12px;color:#20a8e8">VcN,Ic: -29.49°</div></div><svg style="left:0;top:0" width="1606" height="904"><circle cx="646" cy="441.2" r="169" fill="none" stroke="#d8d8d8" stroke-width="1.2"/><line x1="477" y1="441.2" x2="815" y2="441.2" stroke="#a8a8a8" stroke-width="1" stroke-dasharray="2,3"/><line x1="646" y1="272.2" x2="646" y2="610.2" stroke="#a8a8a8" stroke-width="1" stroke-dasharray="2,3"/><line x1="646" y1="441.2" x2="646.0" y2="306.2" stroke="#1e9ee0" stroke-width="2"/><line x1="646.0" y1="306.2" x2="649.8" y2="313.3" stroke="#1e9ee0" stroke-width="2"/><line x1="646.0" y1="306.2" x2="642.2" y2="313.3" stroke="#1e9ee0" stroke-width="2"/><line x1="646" y1="441.2" x2="709.8" y2="330.2" stroke="#1e9ee0" stroke-width="2" stroke-dasharray="6,3.5"/><line x1="709.8" y1="330.2" x2="709.6" y2="338.2" stroke="#1e9ee0" stroke-width="2"/><line x1="709.8" y1="330.2" x2="703.0" y2="334.5" stroke="#1e9ee0" stroke-width="2"/><line x1="646" y1="441.2" x2="527.4" y2="509.7" stroke="#f0e020" stroke-width="2"/><line x1="527.4" y1="509.7" x2="531.6" y2="502.9" stroke="#f0e020" stroke-width="2"/><line x1="527.4" y1="509.7" x2="535.3" y2="509.4" stroke="#f0e020" stroke-width="2"/><line x1="646" y1="441.2" x2="511.9" y2="469.2" stroke="#f0e020" stroke-width="2" stroke-dasharray="6,3.5"/><line x1="511.9" y1="469.2" x2="518.0" y2="464.1" stroke="#f0e020" stroke-width="2"/><line x1="511.9" y1="469.2" x2="519.6" y2="471.4" stroke="#f0e020" stroke-width="2"/><line x1="646" y1="441.2" x2="763.8" y2="509.2" stroke="#e81414" stroke-width="2"/><line x1="763.8" y1="509.2" x2="755.8" y2="508.9" stroke="#e81414" stroke-width="2"/><line x1="763.8" y1="509.2" x2="759.5" y2="502.4" stroke="#e81414" stroke-width="2"/><line x1="646" y1="441.2" x2="716.7" y2="524.1" stroke="#e81414" stroke-width="2" stroke-dasharray="6,3.5"/><line x1="716.7" y1="524.1" x2="709.3" y2="521.2" stroke="#e81414" stroke-width="2"/><line x1="716.7" y1="524.1" x2="715.0" y2="516.3" stroke="#e81414" stroke-width="2"/><path d="M663.0 411.7 A34 34 0 0 0 646.0 407.2" fill="none" stroke="#1e9ee0" stroke-width="1.5"/><path d="M618.1 447.0 A28.5 28.5 0 0 0 621.3 455.4" fill="none" stroke="#f0e020" stroke-width="1.5"/><path d="M662.9 461.0 A26 26 0 0 0 668.5 454.2" fill="none" stroke="#e81414" stroke-width="1.5"/><text x="646.5" y="266.5" font-size="11" fill="#d8d8d8" text-anchor="middle" font-family="Liberation Sans">90°</text><text x="646.5" y="623" font-size="11" fill="#d8d8d8" text-anchor="middle" font-family="Liberation Sans">-90°</text><text x="819.5" y="442.5" font-size="11" fill="#d8d8d8" text-anchor="start" font-family="Liberation Sans">0°</text><text x="474" y="442.5" font-size="11" fill="#d8d8d8" text-anchor="end" font-family="Liberation Sans">±180°</text><text x="647" y="296" font-size="11.5" fill="#1e9ee0" text-anchor="middle" font-family="Liberation Sans">VcN</text><text x="715.5" y="324" font-size="11.5" fill="#1e9ee0" text-anchor="middle" font-family="Liberation Sans">Ic</text><text x="499" y="474" font-size="11.5" fill="#f0e020" text-anchor="middle" font-family="Liberation Sans">Ib</text><text x="516" y="518.5" font-size="11.5" fill="#f0e020" text-anchor="middle" font-family="Liberation Sans">VbN</text><text x="775" y="518.5" font-size="11.5" fill="#e81414" text-anchor="middle" font-family="Liberation Sans">VaN</text><text x="722" y="535" font-size="11.5" fill="#e81414" text-anchor="middle" font-family="Liberation Sans">Ia</text></svg><svg style="left:0;top:0" width="1606" height="904"><defs><clipPath id="wc"><rect x="864" y="57" width="424.5" height="770"/></clipPath></defs><g clip-path="url(#wc)"><rect x="864" y="183.5" width="424.5" height="2" fill="#6e6e6e"/><rect x="864" y="311.8" width="424.5" height="2" fill="#6e6e6e"/><rect x="864" y="440" width="424.5" height="2" fill="#6e6e6e"/><rect x="864" y="568" width="424.5" height="2" fill="#6e6e6e"/><rect x="864" y="696" width="424.5" height="2" fill="#6e6e6e"/><rect x="872.0" y="57.0" width="1" height="1" fill="#8a8a8a"/><rect x="880.5" y="57.0" width="1" height="1" fill="#8a8a8a"/><rect x="889.0" y="57.0" width="1" height="1" fill="#8a8a8a"/><rect x="897.5" y="57.0" width="1" height="1" fill="#8a8a8a"/><rect x="914.4" y="57.0" width="1" height="1" fill="#8a8a8a"/><rect x="922.9" y="57.0" width="1" height="1" fill="#8a8a8a"/><rect x="931.4" y="57.0" width="1" height="1" fill="#8a8a8a"/><rect x="939.9" y="57.0" width="1" height="1" fill="#8a8a8a"/><rect x="956.9" y="57.0" width="1" height="1" fill="#8a8a8a"/><rect x="965.4" y="57.0" width="1" height="1" fill="#8a8a8a"/><rect x="973.9" y="57.0" width="1" height="1" fill="#8a8a8a"/><rect x="982.4" y="57.0" width="1" height="1" fill="#8a8a8a"/><rect x="999.3" y="57.0" width="1" height="1" fill="#8a8a8a"/><rect x="1007.8" y="57.0" width="1" height="1" fill="#8a8a8a"/><rect x="1016.3" y="57.0" width="1" height="1" fill="#8a8a8a"/><rect x="1024.8" y="57.0" width="1" height="1" fill="#8a8a8a"/><rect x="1041.8" y="57.0" width="1" height="1" fill="#8a8a8a"/><rect x="1050.3" y="57.0" width="1" height="1" fill="#8a8a8a"/><rect x="1058.8" y="57.0" width="1" height="1" fill="#8a8a8a"/><rect x="1067.3" y="57.0" width="1" height="1" fill="#8a8a8a"/><rect x="1084.2" y="57.0" width="1" height="1" fill="#8a8a8a"/><rect x="1092.7" y="57.0" width="1" height="1" fill="#8a8a8a"/><rect x="1101.2" y="57.0" width="1" height="1" fill="#8a8a8a"/><rect x="1109.7" y="57.0" width="1" height="1" fill="#8a8a8a"/><rect x="1126.7" y="57.0" width="1" height="1" fill="#8a8a8a"/><rect x="1135.2" y="57.0" width="1" height="1" fill="#8a8a8a"/><rect x="1143.7" y="57.0" width="1" height="1" fill="#8a8a8a"/><rect x="1152.2" y="57.0" width="1" height="1" fill="#8a8a8a"/><rect x="1169.1" y="57.0" width="1" height="1" fill="#8a8a8a"/><rect x="1177.6" y="57.0" width="1" height="1" fill="#8a8a8a"/><rect x="1186.1" y="57.0" width="1" height="1" fill="#8a8a8a"/><rect x="1194.6" y="57.0" width="1" height="1" fill="#8a8a8a"/><rect x="1211.6" y="57.0" width="1" height="1" fill="#8a8a8a"/><rect x="1220.1" y="57.0" width="1" height="1" fill="#8a8a8a"/><rect x="1228.6" y="57.0" width="1" height="1" fill="#8a8a8a"/><rect x="1237.1" y="57.0" width="1" height="1" fill="#8a8a8a"/><rect x="1254.0" y="57.0" width="1" height="1" fill="#8a8a8a"/><rect x="1262.5" y="57.0" width="1" height="1" fill="#8a8a8a"/><rect x="1271.0" y="57.0" width="1" height="1" fill="#8a8a8a"/><rect x="1279.5" y="57.0" width="1" height="1" fill="#8a8a8a"/><rect x="872.0" y="69.4" width="1" height="1" fill="#8a8a8a"/><rect x="880.5" y="69.4" width="1" height="1" fill="#8a8a8a"/><rect x="889.0" y="69.4" width="1" height="1" fill="#8a8a8a"/><rect x="897.5" y="69.4" width="1" height="1" fill="#8a8a8a"/><rect x="914.4" y="69.4" width="1" height="1" fill="#8a8a8a"/><rect x="922.9" y="69.4" width="1" height="1" fill="#8a8a8a"/><rect x="931.4" y="69.4" width="1" height="1" fill="#8a8a8a"/><rect x="939.9" y="69.4" width="1" height="1" fill="#8a8a8a"/><rect x="956.9" y="69.4" width="1" height="1" fill="#8a8a8a"/><rect x="965.4" y="69.4" width="1" height="1" fill="#8a8a8a"/><rect x="973.9" y="69.4" width="1" height="1" fill="#8a8a8a"/><rect x="982.4" y="69.4" width="1" height="1" fill="#8a8a8a"/><rect x="999.3" y="69.4" width="1" height="1" fill="#8a8a8a"/><rect x="1007.8" y="69.4" width="1" height="1" fill="#8a8a8a"/><rect x="1016.3" y="69.4" width="1" height="1" fill="#8a8a8a"/><rect x="1024.8" y="69.4" width="1" height="1" fill="#8a8a8a"/><rect x="1041.8" y="69.4" width="1" height="1" fill="#8a8a8a"/><rect x="1050.3" y="69.4" width="1" height="1" fill="#8a8a8a"/><rect x="1058.8" y="69.4" width="1" height="1" fill="#8a8a8a"/><rect x="1067.3" y="69.4" width="1" height="1" fill="#8a8a8a"/><rect x="1084.2" y="69.4" width="1" height="1" fill="#8a8a8a"/><rect x="1092.7" y="69.4" width="1" height="1" fill="#8a8a8a"/><rect x="1101.2" y="69.4" width="1" height="1" fill="#8a8a8a"/><rect x="1109.7" y="69.4" width="1" height="1" fill="#8a8a8a"/><rect x="1126.7" y="69.4" width="1" height="1" fill="#8a8a8a"/><rect x="1135.2" y="69.4" width="1" height="1" fill="#8a8a8a"/><rect x="1143.7" y="69.4" width="1" height="1" fill="#8a8a8a"/><rect x="1152.2" y="69.4" width="1" height="1" fill="#8a8a8a"/><rect x="1169.1" y="69.4" width="1" height="1" fill="#8a8a8a"/><rect x="1177.6" y="69.4" width="1" height="1" fill="#8a8a8a"/><rect x="1186.1" y="69.4" width="1" height="1" fill="#8a8a8a"/><rect x="1194.6" y="69.4" width="1" height="1" fill="#8a8a8a"/><rect x="1211.6" y="69.4" width="1" height="1" fill="#8a8a8a"/><rect x="1220.1" y="69.4" width="1" height="1" fill="#8a8a8a"/><rect x="1228.6" y="69.4" width="1" height="1" fill="#8a8a8a"/><rect x="1237.1" y="69.4" width="1" height="1" fill="#8a8a8a"/><rect x="1254.0" y="69.4" width="1" height="1" fill="#8a8a8a"/><rect x="1262.5" y="69.4" width="1" height="1" fill="#8a8a8a"/><rect x="1271.0" y="69.4" width="1" height="1" fill="#8a8a8a"/><rect x="1279.5" y="69.4" width="1" height="1" fill="#8a8a8a"/><rect x="872.0" y="82.0" width="1" height="1" fill="#8a8a8a"/><rect x="880.5" y="82.0" width="1" height="1" fill="#8a8a8a"/><rect x="889.0" y="82.0" width="1" height="1" fill="#8a8a8a"/><rect x="897.5" y="82.0" width="1" height="1" fill="#8a8a8a"/><rect x="914.4" y="82.0" width="1" height="1" fill="#8a8a8a"/><rect x="922.9" y="82.0" width="1" height="1" fill="#8a8a8a"/><rect x="931.4" y="82.0" width="1" height="1" fill="#8a8a8a"/><rect x="939.9" y="82.0" width="1" height="1" fill="#8a8a8a"/><rect x="956.9" y="82.0" width="1" height="1" fill="#8a8a8a"/><rect x="965.4" y="82.0" width="1" height="1" fill="#8a8a8a"/><rect x="973.9" y="82.0" width="1" height="1" fill="#8a8a8a"/><rect x="982.4" y="82.0" width="1" height="1" fill="#8a8a8a"/><rect x="999.3" y="82.0" width="1" height="1" fill="#8a8a8a"/><rect x="1007.8" y="82.0" width="1" height="1" fill="#8a8a8a"/><rect x="1016.3" y="82.0" width="1" height="1" fill="#8a8a8a"/><rect x="1024.8" y="82.0" width="1" height="1" fill="#8a8a8a"/><rect x="1041.8" y="82.0" width="1" height="1" fill="#8a8a8a"/><rect x="1050.3" y="82.0" width="1" height="1" fill="#8a8a8a"/><rect x="1058.8" y="82.0" width="1" height="1" fill="#8a8a8a"/><rect x="1067.3" y="82.0" width="1" height="1" fill="#8a8a8a"/><rect x="1084.2" y="82.0" width="1" height="1" fill="#8a8a8a"/><rect x="1092.7" y="82.0" width="1" height="1" fill="#8a8a8a"/><rect x="1101.2" y="82.0" width="1" height="1" fill="#8a8a8a"/><rect x="1109.7" y="82.0" width="1" height="1" fill="#8a8a8a"/><rect x="1126.7" y="82.0" width="1" height="1" fill="#8a8a8a"/><rect x="1135.2" y="82.0" width="1" height="1" fill="#8a8a8a"/><rect x="1143.7" y="82.0" width="1" height="1" fill="#8a8a8a"/><rect x="1152.2" y="82.0" width="1" height="1" fill="#8a8a8a"/><rect x="1169.1" y="82.0" width="1" height="1" fill="#8a8a8a"/><rect x="1177.6" y="82.0" width="1" height="1" fill="#8a8a8a"/><rect x="1186.1" y="82.0" width="1" height="1" fill="#8a8a8a"/><rect x="1194.6" y="82.0" width="1" height="1" fill="#8a8a8a"/><rect x="1211.6" y="82.0" width="1" height="1" fill="#8a8a8a"/><rect x="1220.1" y="82.0" width="1" height="1" fill="#8a8a8a"/><rect x="1228.6" y="82.0" width="1" height="1" fill="#8a8a8a"/><rect x="1237.1" y="82.0" width="1" height="1" fill="#8a8a8a"/><rect x="1254.0" y="82.0" width="1" height="1" fill="#8a8a8a"/><rect x="1262.5" y="82.0" width="1" height="1" fill="#8a8a8a"/><rect x="1271.0" y="82.0" width="1" height="1" fill="#8a8a8a"/><rect x="1279.5" y="82.0" width="1" height="1" fill="#8a8a8a"/><rect x="872.0" y="94.6" width="1" height="1" fill="#8a8a8a"/><rect x="880.5" y="94.6" width="1" height="1" fill="#8a8a8a"/><rect x="889.0" y="94.6" width="1" height="1" fill="#8a8a8a"/><rect x="897.5" y="94.6" width="1" height="1" fill="#8a8a8a"/><rect x="914.4" y="94.6" width="1" height="1" fill="#8a8a8a"/><rect x="922.9" y="94.6" width="1" height="1" fill="#8a8a8a"/><rect x="931.4" y="94.6" width="1" height="1" fill="#8a8a8a"/><rect x="939.9" y="94.6" width="1" height="1" fill="#8a8a8a"/><rect x="956.9" y="94.6" width="1" height="1" fill="#8a8a8a"/><rect x="965.4" y="94.6" width="1" height="1" fill="#8a8a8a"/><rect x="973.9" y="94.6" width="1" height="1" fill="#8a8a8a"/><rect x="982.4" y="94.6" width="1" height="1" fill="#8a8a8a"/><rect x="999.3" y="94.6" width="1" height="1" fill="#8a8a8a"/><rect x="1007.8" y="94.6" width="1" height="1" fill="#8a8a8a"/><rect x="1016.3" y="94.6" width="1" height="1" fill="#8a8a8a"/><rect x="1024.8" y="94.6" width="1" height="1" fill="#8a8a8a"/><rect x="1041.8" y="94.6" width="1" height="1" fill="#8a8a8a"/><rect x="1050.3" y="94.6" width="1" height="1" fill="#8a8a8a"/><rect x="1058.8" y="94.6" width="1" height="1" fill="#8a8a8a"/><rect x="1067.3" y="94.6" width="1" height="1" fill="#8a8a8a"/><rect x="1084.2" y="94.6" width="1" height="1" fill="#8a8a8a"/><rect x="1092.7" y="94.6" width="1" height="1" fill="#8a8a8a"/><rect x="1101.2" y="94.6" width="1" height="1" fill="#8a8a8a"/><rect x="1109.7" y="94.6" width="1" height="1" fill="#8a8a8a"/><rect x="1126.7" y="94.6" width="1" height="1" fill="#8a8a8a"/><rect x="1135.2" y="94.6" width="1" height="1" fill="#8a8a8a"/><rect x="1143.7" y="94.6" width="1" height="1" fill="#8a8a8a"/><rect x="1152.2" y="94.6" width="1" height="1" fill="#8a8a8a"/><rect x="1169.1" y="94.6" width="1" height="1" fill="#8a8a8a"/><rect x="1177.6" y="94.6" width="1" height="1" fill="#8a8a8a"/><rect x="1186.1" y="94.6" width="1" height="1" fill="#8a8a8a"/><rect x="1194.6" y="94.6" width="1" height="1" fill="#8a8a8a"/><rect x="1211.6" y="94.6" width="1" height="1" fill="#8a8a8a"/><rect x="1220.1" y="94.6" width="1" height="1" fill="#8a8a8a"/><rect x="1228.6" y="94.6" width="1" height="1" fill="#8a8a8a"/><rect x="1237.1" y="94.6" width="1" height="1" fill="#8a8a8a"/><rect x="1254.0" y="94.6" width="1" height="1" fill="#8a8a8a"/><rect x="1262.5" y="94.6" width="1" height="1" fill="#8a8a8a"/><rect x="1271.0" y="94.6" width="1" height="1" fill="#8a8a8a"/><rect x="1279.5" y="94.6" width="1" height="1" fill="#8a8a8a"/><rect x="872.0" y="107.2" width="1" height="1" fill="#8a8a8a"/><rect x="880.5" y="107.2" width="1" height="1" fill="#8a8a8a"/><rect x="889.0" y="107.2" width="1" height="1" fill="#8a8a8a"/><rect x="897.5" y="107.2" width="1" height="1" fill="#8a8a8a"/><rect x="914.4" y="107.2" width="1" height="1" fill="#8a8a8a"/><rect x="922.9" y="107.2" width="1" height="1" fill="#8a8a8a"/><rect x="931.4" y="107.2" width="1" height="1" fill="#8a8a8a"/><rect x="939.9" y="107.2" width="1" height="1" fill="#8a8a8a"/><rect x="956.9" y="107.2" width="1" height="1" fill="#8a8a8a"/><rect x="965.4" y="107.2" width="1" height="1" fill="#8a8a8a"/><rect x="973.9" y="107.2" width="1" height="1" fill="#8a8a8a"/><rect x="982.4" y="107.2" width="1" height="1" fill="#8a8a8a"/><rect x="999.3" y="107.2" width="1" height="1" fill="#8a8a8a"/><rect x="1007.8" y="107.2" width="1" height="1" fill="#8a8a8a"/><rect x="1016.3" y="107.2" width="1" height="1" fill="#8a8a8a"/><rect x="1024.8" y="107.2" width="1" height="1" fill="#8a8a8a"/><rect x="1041.8" y="107.2" width="1" height="1" fill="#8a8a8a"/><rect x="1050.3" y="107.2" width="1" height="1" fill="#8a8a8a"/><rect x="1058.8" y="107.2" width="1" height="1" fill="#8a8a8a"/><rect x="1067.3" y="107.2" width="1" height="1" fill="#8a8a8a"/><rect x="1084.2" y="107.2" width="1" height="1" fill="#8a8a8a"/><rect x="1092.7" y="107.2" width="1" height="1" fill="#8a8a8a"/><rect x="1101.2" y="107.2" width="1" height="1" fill="#8a8a8a"/><rect x="1109.7" y="107.2" width="1" height="1" fill="#8a8a8a"/><rect x="1126.7" y="107.2" width="1" height="1" fill="#8a8a8a"/><rect x="1135.2" y="107.2" width="1" height="1" fill="#8a8a8a"/><rect x="1143.7" y="107.2" width="1" height="1" fill="#8a8a8a"/><rect x="1152.2" y="107.2" width="1" height="1" fill="#8a8a8a"/><rect x="1169.1" y="107.2" width="1" height="1" fill="#8a8a8a"/><rect x="1177.6" y="107.2" width="1" height="1" fill="#8a8a8a"/><rect x="1186.1" y="107.2" width="1" height="1" fill="#8a8a8a"/><rect x="1194.6" y="107.2" width="1" height="1" fill="#8a8a8a"/><rect x="1211.6" y="107.2" width="1" height="1" fill="#8a8a8a"/><rect x="1220.1" y="107.2" width="1" height="1" fill="#8a8a8a"/><rect x="1228.6" y="107.2" width="1" height="1" fill="#8a8a8a"/><rect x="1237.1" y="107.2" width="1" height="1" fill="#8a8a8a"/><rect x="1254.0" y="107.2" width="1" height="1" fill="#8a8a8a"/><rect x="1262.5" y="107.2" width="1" height="1" fill="#8a8a8a"/><rect x="1271.0" y="107.2" width="1" height="1" fill="#8a8a8a"/><rect x="1279.5" y="107.2" width="1" height="1" fill="#8a8a8a"/><rect x="872.0" y="119.8" width="1" height="1" fill="#8a8a8a"/><rect x="880.5" y="119.8" width="1" height="1" fill="#8a8a8a"/><rect x="889.0" y="119.8" width="1" height="1" fill="#8a8a8a"/><rect x="897.5" y="119.8" width="1" height="1" fill="#8a8a8a"/><rect x="914.4" y="119.8" width="1" height="1" fill="#8a8a8a"/><rect x="922.9" y="119.8" width="1" height="1" fill="#8a8a8a"/><rect x="931.4" y="119.8" width="1" height="1" fill="#8a8a8a"/><rect x="939.9" y="119.8" width="1" height="1" fill="#8a8a8a"/><rect x="956.9" y="119.8" width="1" height="1" fill="#8a8a8a"/><rect x="965.4" y="119.8" width="1" height="1" fill="#8a8a8a"/><rect x="973.9" y="119.8" width="1" height="1" fill="#8a8a8a"/><rect x="982.4" y="119.8" width="1" height="1" fill="#8a8a8a"/><rect x="999.3" y="119.8" width="1" height="1" fill="#8a8a8a"/><rect x="1007.8" y="119.8" width="1" height="1" fill="#8a8a8a"/><rect x="1016.3" y="119.8" width="1" height="1" fill="#8a8a8a"/><rect x="1024.8" y="119.8" width="1" height="1" fill="#8a8a8a"/><rect x="1041.8" y="119.8" width="1" height="1" fill="#8a8a8a"/><rect x="1050.3" y="119.8" width="1" height="1" fill="#8a8a8a"/><rect x="1058.8" y="119.8" width="1" height="1" fill="#8a8a8a"/><rect x="1067.3" y="119.8" width="1" height="1" fill="#8a8a8a"/><rect x="1084.2" y="119.8" width="1" height="1" fill="#8a8a8a"/><rect x="1092.7" y="119.8" width="1" height="1" fill="#8a8a8a"/><rect x="1101.2" y="119.8" width="1" height="1" fill="#8a8a8a"/><rect x="1109.7" y="119.8" width="1" height="1" fill="#8a8a8a"/><rect x="1126.7" y="119.8" width="1" height="1" fill="#8a8a8a"/><rect x="1135.2" y="119.8" width="1" height="1" fill="#8a8a8a"/><rect x="1143.7" y="119.8" width="1" height="1" fill="#8a8a8a"/><rect x="1152.2" y="119.8" width="1" height="1" fill="#8a8a8a"/><rect x="1169.1" y="119.8" width="1" height="1" fill="#8a8a8a"/><rect x="1177.6" y="119.8" width="1" height="1" fill="#8a8a8a"/><rect x="1186.1" y="119.8" width="1" height="1" fill="#8a8a8a"/><rect x="1194.6" y="119.8" width="1" height="1" fill="#8a8a8a"/><rect x="1211.6" y="119.8" width="1" height="1" fill="#8a8a8a"/><rect x="1220.1" y="119.8" width="1" height="1" fill="#8a8a8a"/><rect x="1228.6" y="119.8" width="1" height="1" fill="#8a8a8a"/><rect x="1237.1" y="119.8" width="1" height="1" fill="#8a8a8a"/><rect x="1254.0" y="119.8" width="1" height="1" fill="#8a8a8a"/><rect x="1262.5" y="119.8" width="1" height="1" fill="#8a8a8a"/><rect x="1271.0" y="119.8" width="1" height="1" fill="#8a8a8a"/><rect x="1279.5" y="119.8" width="1" height="1" fill="#8a8a8a"/><rect x="872.0" y="132.4" width="1" height="1" fill="#8a8a8a"/><rect x="880.5" y="132.4" width="1" height="1" fill="#8a8a8a"/><rect x="889.0" y="132.4" width="1" height="1" fill="#8a8a8a"/><rect x="897.5" y="132.4" width="1" height="1" fill="#8a8a8a"/><rect x="914.4" y="132.4" width="1" height="1" fill="#8a8a8a"/><rect x="922.9" y="132.4" width="1" height="1" fill="#8a8a8a"/><rect x="931.4" y="132.4" width="1" height="1" fill="#8a8a8a"/><rect x="939.9" y="132.4" width="1" height="1" fill="#8a8a8a"/><rect x="956.9" y="132.4" width="1" height="1" fill="#8a8a8a"/><rect x="965.4" y="132.4" width="1" height="1" fill="#8a8a8a"/><rect x="973.9" y="132.4" width="1" height="1" fill="#8a8a8a"/><rect x="982.4" y="132.4" width="1" height="1" fill="#8a8a8a"/><rect x="999.3" y="132.4" width="1" height="1" fill="#8a8a8a"/><rect x="1007.8" y="132.4" width="1" height="1" fill="#8a8a8a"/><rect x="1016.3" y="132.4" width="1" height="1" fill="#8a8a8a"/><rect x="1024.8" y="132.4" width="1" height="1" fill="#8a8a8a"/><rect x="1041.8" y="132.4" width="1" height="1" fill="#8a8a8a"/><rect x="1050.3" y="132.4" width="1" height="1" fill="#8a8a8a"/><rect x="1058.8" y="132.4" width="1" height="1" fill="#8a8a8a"/><rect x="1067.3" y="132.4" width="1" height="1" fill="#8a8a8a"/><rect x="1084.2" y="132.4" width="1" height="1" fill="#8a8a8a"/><rect x="1092.7" y="132.4" width="1" height="1" fill="#8a8a8a"/><rect x="1101.2" y="132.4" width="1" height="1" fill="#8a8a8a"/><rect x="1109.7" y="132.4" width="1" height="1" fill="#8a8a8a"/><rect x="1126.7" y="132.4" width="1" height="1" fill="#8a8a8a"/><rect x="1135.2" y="132.4" width="1" height="1" fill="#8a8a8a"/><rect x="1143.7" y="132.4" width="1" height="1" fill="#8a8a8a"/><rect x="1152.2" y="132.4" width="1" height="1" fill="#8a8a8a"/><rect x="1169.1" y="132.4" width="1" height="1" fill="#8a8a8a"/><rect x="1177.6" y="132.4" width="1" height="1" fill="#8a8a8a"/><rect x="1186.1" y="132.4" width="1" height="1" fill="#8a8a8a"/><rect x="1194.6" y="132.4" width="1" height="1" fill="#8a8a8a"/><rect x="1211.6" y="132.4" width="1" height="1" fill="#8a8a8a"/><rect x="1220.1" y="132.4" width="1" height="1" fill="#8a8a8a"/><rect x="1228.6" y="132.4" width="1" height="1" fill="#8a8a8a"/><rect x="1237.1" y="132.4" width="1" height="1" fill="#8a8a8a"/><rect x="1254.0" y="132.4" width="1" height="1" fill="#8a8a8a"/><rect x="1262.5" y="132.4" width="1" height="1" fill="#8a8a8a"/><rect x="1271.0" y="132.4" width="1" height="1" fill="#8a8a8a"/><rect x="1279.5" y="132.4" width="1" height="1" fill="#8a8a8a"/><rect x="872.0" y="145.0" width="1" height="1" fill="#8a8a8a"/><rect x="880.5" y="145.0" width="1" height="1" fill="#8a8a8a"/><rect x="889.0" y="145.0" width="1" height="1" fill="#8a8a8a"/><rect x="897.5" y="145.0" width="1" height="1" fill="#8a8a8a"/><rect x="914.4" y="145.0" width="1" height="1" fill="#8a8a8a"/><rect x="922.9" y="145.0" width="1" height="1" fill="#8a8a8a"/><rect x="931.4" y="145.0" width="1" height="1" fill="#8a8a8a"/><rect x="939.9" y="145.0" width="1" height="1" fill="#8a8a8a"/><rect x="956.9" y="145.0" width="1" height="1" fill="#8a8a8a"/><rect x="965.4" y="145.0" width="1" height="1" fill="#8a8a8a"/><rect x="973.9" y="145.0" width="1" height="1" fill="#8a8a8a"/><rect x="982.4" y="145.0" width="1" height="1" fill="#8a8a8a"/><rect x="999.3" y="145.0" width="1" height="1" fill="#8a8a8a"/><rect x="1007.8" y="145.0" width="1" height="1" fill="#8a8a8a"/><rect x="1016.3" y="145.0" width="1" height="1" fill="#8a8a8a"/><rect x="1024.8" y="145.0" width="1" height="1" fill="#8a8a8a"/><rect x="1041.8" y="145.0" width="1" height="1" fill="#8a8a8a"/><rect x="1050.3" y="145.0" width="1" height="1" fill="#8a8a8a"/><rect x="1058.8" y="145.0" width="1" height="1" fill="#8a8a8a"/><rect x="1067.3" y="145.0" width="1" height="1" fill="#8a8a8a"/><rect x="1084.2" y="145.0" width="1" height="1" fill="#8a8a8a"/><rect x="1092.7" y="145.0" width="1" height="1" fill="#8a8a8a"/><rect x="1101.2" y="145.0" width="1" height="1" fill="#8a8a8a"/><rect x="1109.7" y="145.0" width="1" height="1" fill="#8a8a8a"/><rect x="1126.7" y="145.0" width="1" height="1" fill="#8a8a8a"/><rect x="1135.2" y="145.0" width="1" height="1" fill="#8a8a8a"/><rect x="1143.7" y="145.0" width="1" height="1" fill="#8a8a8a"/><rect x="1152.2" y="145.0" width="1" height="1" fill="#8a8a8a"/><rect x="1169.1" y="145.0" width="1" height="1" fill="#8a8a8a"/><rect x="1177.6" y="145.0" width="1" height="1" fill="#8a8a8a"/><rect x="1186.1" y="145.0" width="1" height="1" fill="#8a8a8a"/><rect x="1194.6" y="145.0" width="1" height="1" fill="#8a8a8a"/><rect x="1211.6" y="145.0" width="1" height="1" fill="#8a8a8a"/><rect x="1220.1" y="145.0" width="1" height="1" fill="#8a8a8a"/><rect x="1228.6" y="145.0" width="1" height="1" fill="#8a8a8a"/><rect x="1237.1" y="145.0" width="1" height="1" fill="#8a8a8a"/><rect x="1254.0" y="145.0" width="1" height="1" fill="#8a8a8a"/><rect x="1262.5" y="145.0" width="1" height="1" fill="#8a8a8a"/><rect x="1271.0" y="145.0" width="1" height="1" fill="#8a8a8a"/><rect x="1279.5" y="145.0" width="1" height="1" fill="#8a8a8a"/><rect x="872.0" y="157.6" width="1" height="1" fill="#8a8a8a"/><rect x="880.5" y="157.6" width="1" height="1" fill="#8a8a8a"/><rect x="889.0" y="157.6" width="1" height="1" fill="#8a8a8a"/><rect x="897.5" y="157.6" width="1" height="1" fill="#8a8a8a"/><rect x="914.4" y="157.6" width="1" height="1" fill="#8a8a8a"/><rect x="922.9" y="157.6" width="1" height="1" fill="#8a8a8a"/><rect x="931.4" y="157.6" width="1" height="1" fill="#8a8a8a"/><rect x="939.9" y="157.6" width="1" height="1" fill="#8a8a8a"/><rect x="956.9" y="157.6" width="1" height="1" fill="#8a8a8a"/><rect x="965.4" y="157.6" width="1" height="1" fill="#8a8a8a"/><rect x="973.9" y="157.6" width="1" height="1" fill="#8a8a8a"/><rect x="982.4" y="157.6" width="1" height="1" fill="#8a8a8a"/><rect x="999.3" y="157.6" width="1" height="1" fill="#8a8a8a"/><rect x="1007.8" y="157.6" width="1" height="1" fill="#8a8a8a"/><rect x="1016.3" y="157.6" width="1" height="1" fill="#8a8a8a"/><rect x="1024.8" y="157.6" width="1" height="1" fill="#8a8a8a"/><rect x="1041.8" y="157.6" width="1" height="1" fill="#8a8a8a"/><rect x="1050.3" y="157.6" width="1" height="1" fill="#8a8a8a"/><rect x="1058.8" y="157.6" width="1" height="1" fill="#8a8a8a"/><rect x="1067.3" y="157.6" width="1" height="1" fill="#8a8a8a"/><rect x="1084.2" y="157.6" width="1" height="1" fill="#8a8a8a"/><rect x="1092.7" y="157.6" width="1" height="1" fill="#8a8a8a"/><rect x="1101.2" y="157.6" width="1" height="1" fill="#8a8a8a"/><rect x="1109.7" y="157.6" width="1" height="1" fill="#8a8a8a"/><rect x="1126.7" y="157.6" width="1" height="1" fill="#8a8a8a"/><rect x="1135.2" y="157.6" width="1" height="1" fill="#8a8a8a"/><rect x="1143.7" y="157.6" width="1" height="1" fill="#8a8a8a"/><rect x="1152.2" y="157.6" width="1" height="1" fill="#8a8a8a"/><rect x="1169.1" y="157.6" width="1" height="1" fill="#8a8a8a"/><rect x="1177.6" y="157.6" width="1" height="1" fill="#8a8a8a"/><rect x="1186.1" y="157.6" width="1" height="1" fill="#8a8a8a"/><rect x="1194.6" y="157.6" width="1" height="1" fill="#8a8a8a"/><rect x="1211.6" y="157.6" width="1" height="1" fill="#8a8a8a"/><rect x="1220.1" y="157.6" width="1" height="1" fill="#8a8a8a"/><rect x="1228.6" y="157.6" width="1" height="1" fill="#8a8a8a"/><rect x="1237.1" y="157.6" width="1" height="1" fill="#8a8a8a"/><rect x="1254.0" y="157.6" width="1" height="1" fill="#8a8a8a"/><rect x="1262.5" y="157.6" width="1" height="1" fill="#8a8a8a"/><rect x="1271.0" y="157.6" width="1" height="1" fill="#8a8a8a"/><rect x="1279.5" y="157.6" width="1" height="1" fill="#8a8a8a"/><rect x="872.0" y="170.2" width="1" height="1" fill="#8a8a8a"/><rect x="880.5" y="170.2" width="1" height="1" fill="#8a8a8a"/><rect x="889.0" y="170.2" width="1" height="1" fill="#8a8a8a"/><rect x="897.5" y="170.2" width="1" height="1" fill="#8a8a8a"/><rect x="914.4" y="170.2" width="1" height="1" fill="#8a8a8a"/><rect x="922.9" y="170.2" width="1" height="1" fill="#8a8a8a"/><rect x="931.4" y="170.2" width="1" height="1" fill="#8a8a8a"/><rect x="939.9" y="170.2" width="1" height="1" fill="#8a8a8a"/><rect x="956.9" y="170.2" width="1" height="1" fill="#8a8a8a"/><rect x="965.4" y="170.2" width="1" height="1" fill="#8a8a8a"/><rect x="973.9" y="170.2" width="1" height="1" fill="#8a8a8a"/><rect x="982.4" y="170.2" width="1" height="1" fill="#8a8a8a"/><rect x="999.3" y="170.2" width="1" height="1" fill="#8a8a8a"/><rect x="1007.8" y="170.2" width="1" height="1" fill="#8a8a8a"/><rect x="1016.3" y="170.2" width="1" height="1" fill="#8a8a8a"/><rect x="1024.8" y="170.2" width="1" height="1" fill="#8a8a8a"/><rect x="1041.8" y="170.2" width="1" height="1" fill="#8a8a8a"/><rect x="1050.3" y="170.2" width="1" height="1" fill="#8a8a8a"/><rect x="1058.8" y="170.2" width="1" height="1" fill="#8a8a8a"/><rect x="1067.3" y="170.2" width="1" height="1" fill="#8a8a8a"/><rect x="1084.2" y="170.2" width="1" height="1" fill="#8a8a8a"/><rect x="1092.7" y="170.2" width="1" height="1" fill="#8a8a8a"/><rect x="1101.2" y="170.2" width="1" height="1" fill="#8a8a8a"/><rect x="1109.7" y="170.2" width="1" height="1" fill="#8a8a8a"/><rect x="1126.7" y="170.2" width="1" height="1" fill="#8a8a8a"/><rect x="1135.2" y="170.2" width="1" height="1" fill="#8a8a8a"/><rect x="1143.7" y="170.2" width="1" height="1" fill="#8a8a8a"/><rect x="1152.2" y="170.2" width="1" height="1" fill="#8a8a8a"/><rect x="1169.1" y="170.2" width="1" height="1" fill="#8a8a8a"/><rect x="1177.6" y="170.2" width="1" height="1" fill="#8a8a8a"/><rect x="1186.1" y="170.2" width="1" height="1" fill="#8a8a8a"/><rect x="1194.6" y="170.2" width="1" height="1" fill="#8a8a8a"/><rect x="1211.6" y="170.2" width="1" height="1" fill="#8a8a8a"/><rect x="1220.1" y="170.2" width="1" height="1" fill="#8a8a8a"/><rect x="1228.6" y="170.2" width="1" height="1" fill="#8a8a8a"/><rect x="1237.1" y="170.2" width="1" height="1" fill="#8a8a8a"/><rect x="1254.0" y="170.2" width="1" height="1" fill="#8a8a8a"/><rect x="1262.5" y="170.2" width="1" height="1" fill="#8a8a8a"/><rect x="1271.0" y="170.2" width="1" height="1" fill="#8a8a8a"/><rect x="1279.5" y="170.2" width="1" height="1" fill="#8a8a8a"/><rect x="872.0" y="182.8" width="1" height="1" fill="#8a8a8a"/><rect x="880.5" y="182.8" width="1" height="1" fill="#8a8a8a"/><rect x="889.0" y="182.8" width="1" height="1" fill="#8a8a8a"/><rect x="897.5" y="182.8" width="1" height="1" fill="#8a8a8a"/><rect x="914.4" y="182.8" width="1" height="1" fill="#8a8a8a"/><rect x="922.9" y="182.8" width="1" height="1" fill="#8a8a8a"/><rect x="931.4" y="182.8" width="1" height="1" fill="#8a8a8a"/><rect x="939.9" y="182.8" width="1" height="1" fill="#8a8a8a"/><rect x="956.9" y="182.8" width="1" height="1" fill="#8a8a8a"/><rect x="965.4" y="182.8" width="1" height="1" fill="#8a8a8a"/><rect x="973.9" y="182.8" width="1" height="1" fill="#8a8a8a"/><rect x="982.4" y="182.8" width="1" height="1" fill="#8a8a8a"/><rect x="999.3" y="182.8" width="1" height="1" fill="#8a8a8a"/><rect x="1007.8" y="182.8" width="1" height="1" fill="#8a8a8a"/><rect x="1016.3" y="182.8" width="1" height="1" fill="#8a8a8a"/><rect x="1024.8" y="182.8" width="1" height="1" fill="#8a8a8a"/><rect x="1041.8" y="182.8" width="1" height="1" fill="#8a8a8a"/><rect x="1050.3" y="182.8" width="1" height="1" fill="#8a8a8a"/><rect x="1058.8" y="182.8" width="1" height="1" fill="#8a8a8a"/><rect x="1067.3" y="182.8" width="1" height="1" fill="#8a8a8a"/><rect x="1084.2" y="182.8" width="1" height="1" fill="#8a8a8a"/><rect x="1092.7" y="182.8" width="1" height="1" fill="#8a8a8a"/><rect x="1101.2" y="182.8" width="1" height="1" fill="#8a8a8a"/><rect x="1109.7" y="182.8" width="1" height="1" fill="#8a8a8a"/><rect x="1126.7" y="182.8" width="1" height="1" fill="#8a8a8a"/><rect x="1135.2" y="182.8" width="1" height="1" fill="#8a8a8a"/><rect x="1143.7" y="182.8" width="1" height="1" fill="#8a8a8a"/><rect x="1152.2" y="182.8" width="1" height="1" fill="#8a8a8a"/><rect x="1169.1" y="182.8" width="1" height="1" fill="#8a8a8a"/><rect x="1177.6" y="182.8" width="1" height="1" fill="#8a8a8a"/><rect x="1186.1" y="182.8" width="1" height="1" fill="#8a8a8a"/><rect x="1194.6" y="182.8" width="1" height="1" fill="#8a8a8a"/><rect x="1211.6" y="182.8" width="1" height="1" fill="#8a8a8a"/><rect x="1220.1" y="182.8" width="1" height="1" fill="#8a8a8a"/><rect x="1228.6" y="182.8" width="1" height="1" fill="#8a8a8a"/><rect x="1237.1" y="182.8" width="1" height="1" fill="#8a8a8a"/><rect x="1254.0" y="182.8" width="1" height="1" fill="#8a8a8a"/><rect x="1262.5" y="182.8" width="1" height="1" fill="#8a8a8a"/><rect x="1271.0" y="182.8" width="1" height="1" fill="#8a8a8a"/><rect x="1279.5" y="182.8" width="1" height="1" fill="#8a8a8a"/><rect x="872.0" y="194.9" width="1" height="1" fill="#8a8a8a"/><rect x="880.5" y="194.9" width="1" height="1" fill="#8a8a8a"/><rect x="889.0" y="194.9" width="1" height="1" fill="#8a8a8a"/><rect x="897.5" y="194.9" width="1" height="1" fill="#8a8a8a"/><rect x="914.4" y="194.9" width="1" height="1" fill="#8a8a8a"/><rect x="922.9" y="194.9" width="1" height="1" fill="#8a8a8a"/><rect x="931.4" y="194.9" width="1" height="1" fill="#8a8a8a"/><rect x="939.9" y="194.9" width="1" height="1" fill="#8a8a8a"/><rect x="956.9" y="194.9" width="1" height="1" fill="#8a8a8a"/><rect x="965.4" y="194.9" width="1" height="1" fill="#8a8a8a"/><rect x="973.9" y="194.9" width="1" height="1" fill="#8a8a8a"/><rect x="982.4" y="194.9" width="1" height="1" fill="#8a8a8a"/><rect x="999.3" y="194.9" width="1" height="1" fill="#8a8a8a"/><rect x="1007.8" y="194.9" width="1" height="1" fill="#8a8a8a"/><rect x="1016.3" y="194.9" width="1" height="1" fill="#8a8a8a"/><rect x="1024.8" y="194.9" width="1" height="1" fill="#8a8a8a"/><rect x="1041.8" y="194.9" width="1" height="1" fill="#8a8a8a"/><rect x="1050.3" y="194.9" width="1" height="1" fill="#8a8a8a"/><rect x="1058.8" y="194.9" width="1" height="1" fill="#8a8a8a"/><rect x="1067.3" y="194.9" width="1" height="1" fill="#8a8a8a"/><rect x="1084.2" y="194.9" width="1" height="1" fill="#8a8a8a"/><rect x="1092.7" y="194.9" width="1" height="1" fill="#8a8a8a"/><rect x="1101.2" y="194.9" width="1" height="1" fill="#8a8a8a"/><rect x="1109.7" y="194.9" width="1" height="1" fill="#8a8a8a"/><rect x="1126.7" y="194.9" width="1" height="1" fill="#8a8a8a"/><rect x="1135.2" y="194.9" width="1" height="1" fill="#8a8a8a"/><rect x="1143.7" y="194.9" width="1" height="1" fill="#8a8a8a"/><rect x="1152.2" y="194.9" width="1" height="1" fill="#8a8a8a"/><rect x="1169.1" y="194.9" width="1" height="1" fill="#8a8a8a"/><rect x="1177.6" y="194.9" width="1" height="1" fill="#8a8a8a"/><rect x="1186.1" y="194.9" width="1" height="1" fill="#8a8a8a"/><rect x="1194.6" y="194.9" width="1" height="1" fill="#8a8a8a"/><rect x="1211.6" y="194.9" width="1" height="1" fill="#8a8a8a"/><rect x="1220.1" y="194.9" width="1" height="1" fill="#8a8a8a"/><rect x="1228.6" y="194.9" width="1" height="1" fill="#8a8a8a"/><rect x="1237.1" y="194.9" width="1" height="1" fill="#8a8a8a"/><rect x="1254.0" y="194.9" width="1" height="1" fill="#8a8a8a"/><rect x="1262.5" y="194.9" width="1" height="1" fill="#8a8a8a"/><rect x="1271.0" y="194.9" width="1" height="1" fill="#8a8a8a"/><rect x="1279.5" y="194.9" width="1" height="1" fill="#8a8a8a"/><rect x="872.0" y="207.7" width="1" height="1" fill="#8a8a8a"/><rect x="880.5" y="207.7" width="1" height="1" fill="#8a8a8a"/><rect x="889.0" y="207.7" width="1" height="1" fill="#8a8a8a"/><rect x="897.5" y="207.7" width="1" height="1" fill="#8a8a8a"/><rect x="914.4" y="207.7" width="1" height="1" fill="#8a8a8a"/><rect x="922.9" y="207.7" width="1" height="1" fill="#8a8a8a"/><rect x="931.4" y="207.7" width="1" height="1" fill="#8a8a8a"/><rect x="939.9" y="207.7" width="1" height="1" fill="#8a8a8a"/><rect x="956.9" y="207.7" width="1" height="1" fill="#8a8a8a"/><rect x="965.4" y="207.7" width="1" height="1" fill="#8a8a8a"/><rect x="973.9" y="207.7" width="1" height="1" fill="#8a8a8a"/><rect x="982.4" y="207.7" width="1" height="1" fill="#8a8a8a"/><rect x="999.3" y="207.7" width="1" height="1" fill="#8a8a8a"/><rect x="1007.8" y="207.7" width="1" height="1" fill="#8a8a8a"/><rect x="1016.3" y="207.7" width="1" height="1" fill="#8a8a8a"/><rect x="1024.8" y="207.7" width="1" height="1" fill="#8a8a8a"/><rect x="1041.8" y="207.7" width="1" height="1" fill="#8a8a8a"/><rect x="1050.3" y="207.7" width="1" height="1" fill="#8a8a8a"/><rect x="1058.8" y="207.7" width="1" height="1" fill="#8a8a8a"/><rect x="1067.3" y="207.7" width="1" height="1" fill="#8a8a8a"/><rect x="1084.2" y="207.7" width="1" height="1" fill="#8a8a8a"/><rect x="1092.7" y="207.7" width="1" height="1" fill="#8a8a8a"/><rect x="1101.2" y="207.7" width="1" height="1" fill="#8a8a8a"/><rect x="1109.7" y="207.7" width="1" height="1" fill="#8a8a8a"/><rect x="1126.7" y="207.7" width="1" height="1" fill="#8a8a8a"/><rect x="1135.2" y="207.7" width="1" height="1" fill="#8a8a8a"/><rect x="1143.7" y="207.7" width="1" height="1" fill="#8a8a8a"/><rect x="1152.2" y="207.7" width="1" height="1" fill="#8a8a8a"/><rect x="1169.1" y="207.7" width="1" height="1" fill="#8a8a8a"/><rect x="1177.6" y="207.7" width="1" height="1" fill="#8a8a8a"/><rect x="1186.1" y="207.7" width="1" height="1" fill="#8a8a8a"/><rect x="1194.6" y="207.7" width="1" height="1" fill="#8a8a8a"/><rect x="1211.6" y="207.7" width="1" height="1" fill="#8a8a8a"/><rect x="1220.1" y="207.7" width="1" height="1" fill="#8a8a8a"/><rect x="1228.6" y="207.7" width="1" height="1" fill="#8a8a8a"/><rect x="1237.1" y="207.7" width="1" height="1" fill="#8a8a8a"/><rect x="1254.0" y="207.7" width="1" height="1" fill="#8a8a8a"/><rect x="1262.5" y="207.7" width="1" height="1" fill="#8a8a8a"/><rect x="1271.0" y="207.7" width="1" height="1" fill="#8a8a8a"/><rect x="1279.5" y="207.7" width="1" height="1" fill="#8a8a8a"/><rect x="872.0" y="220.5" width="1" height="1" fill="#8a8a8a"/><rect x="880.5" y="220.5" width="1" height="1" fill="#8a8a8a"/><rect x="889.0" y="220.5" width="1" height="1" fill="#8a8a8a"/><rect x="897.5" y="220.5" width="1" height="1" fill="#8a8a8a"/><rect x="914.4" y="220.5" width="1" height="1" fill="#8a8a8a"/><rect x="922.9" y="220.5" width="1" height="1" fill="#8a8a8a"/><rect x="931.4" y="220.5" width="1" height="1" fill="#8a8a8a"/><rect x="939.9" y="220.5" width="1" height="1" fill="#8a8a8a"/><rect x="956.9" y="220.5" width="1" height="1" fill="#8a8a8a"/><rect x="965.4" y="220.5" width="1" height="1" fill="#8a8a8a"/><rect x="973.9" y="220.5" width="1" height="1" fill="#8a8a8a"/><rect x="982.4" y="220.5" width="1" height="1" fill="#8a8a8a"/><rect x="999.3" y="220.5" width="1" height="1" fill="#8a8a8a"/><rect x="1007.8" y="220.5" width="1" height="1" fill="#8a8a8a"/><rect x="1016.3" y="220.5" width="1" height="1" fill="#8a8a8a"/><rect x="1024.8" y="220.5" width="1" height="1" fill="#8a8a8a"/><rect x="1041.8" y="220.5" width="1" height="1" fill="#8a8a8a"/><rect x="1050.3" y="220.5" width="1" height="1" fill="#8a8a8a"/><rect x="1058.8" y="220.5" width="1" height="1" fill="#8a8a8a"/><rect x="1067.3" y="220.5" width="1" height="1" fill="#8a8a8a"/><rect x="1084.2" y="220.5" width="1" height="1" fill="#8a8a8a"/><rect x="1092.7" y="220.5" width="1" height="1" fill="#8a8a8a"/><rect x="1101.2" y="220.5" width="1" height="1" fill="#8a8a8a"/><rect x="1109.7" y="220.5" width="1" height="1" fill="#8a8a8a"/><rect x="1126.7" y="220.5" width="1" height="1" fill="#8a8a8a"/><rect x="1135.2" y="220.5" width="1" height="1" fill="#8a8a8a"/><rect x="1143.7" y="220.5" width="1" height="1" fill="#8a8a8a"/><rect x="1152.2" y="220.5" width="1" height="1" fill="#8a8a8a"/><rect x="1169.1" y="220.5" width="1" height="1" fill="#8a8a8a"/><rect x="1177.6" y="220.5" width="1" height="1" fill="#8a8a8a"/><rect x="1186.1" y="220.5" width="1" height="1" fill="#8a8a8a"/><rect x="1194.6" y="220.5" width="1" height="1" fill="#8a8a8a"/><rect x="1211.6" y="220.5" width="1" height="1" fill="#8a8a8a"/><rect x="1220.1" y="220.5" width="1" height="1" fill="#8a8a8a"/><rect x="1228.6" y="220.5" width="1" height="1" fill="#8a8a8a"/><rect x="1237.1" y="220.5" width="1" height="1" fill="#8a8a8a"/><rect x="1254.0" y="220.5" width="1" height="1" fill="#8a8a8a"/><rect x="1262.5" y="220.5" width="1" height="1" fill="#8a8a8a"/><rect x="1271.0" y="220.5" width="1" height="1" fill="#8a8a8a"/><rect x="1279.5" y="220.5" width="1" height="1" fill="#8a8a8a"/><rect x="872.0" y="233.3" width="1" height="1" fill="#8a8a8a"/><rect x="880.5" y="233.3" width="1" height="1" fill="#8a8a8a"/><rect x="889.0" y="233.3" width="1" height="1" fill="#8a8a8a"/><rect x="897.5" y="233.3" width="1" height="1" fill="#8a8a8a"/><rect x="914.4" y="233.3" width="1" height="1" fill="#8a8a8a"/><rect x="922.9" y="233.3" width="1" height="1" fill="#8a8a8a"/><rect x="931.4" y="233.3" width="1" height="1" fill="#8a8a8a"/><rect x="939.9" y="233.3" width="1" height="1" fill="#8a8a8a"/><rect x="956.9" y="233.3" width="1" height="1" fill="#8a8a8a"/><rect x="965.4" y="233.3" width="1" height="1" fill="#8a8a8a"/><rect x="973.9" y="233.3" width="1" height="1" fill="#8a8a8a"/><rect x="982.4" y="233.3" width="1" height="1" fill="#8a8a8a"/><rect x="999.3" y="233.3" width="1" height="1" fill="#8a8a8a"/><rect x="1007.8" y="233.3" width="1" height="1" fill="#8a8a8a"/><rect x="1016.3" y="233.3" width="1" height="1" fill="#8a8a8a"/><rect x="1024.8" y="233.3" width="1" height="1" fill="#8a8a8a"/><rect x="1041.8" y="233.3" width="1" height="1" fill="#8a8a8a"/><rect x="1050.3" y="233.3" width="1" height="1" fill="#8a8a8a"/><rect x="1058.8" y="233.3" width="1" height="1" fill="#8a8a8a"/><rect x="1067.3" y="233.3" width="1" height="1" fill="#8a8a8a"/><rect x="1084.2" y="233.3" width="1" height="1" fill="#8a8a8a"/><rect x="1092.7" y="233.3" width="1" height="1" fill="#8a8a8a"/><rect x="1101.2" y="233.3" width="1" height="1" fill="#8a8a8a"/><rect x="1109.7" y="233.3" width="1" height="1" fill="#8a8a8a"/><rect x="1126.7" y="233.3" width="1" height="1" fill="#8a8a8a"/><rect x="1135.2" y="233.3" width="1" height="1" fill="#8a8a8a"/><rect x="1143.7" y="233.3" width="1" height="1" fill="#8a8a8a"/><rect x="1152.2" y="233.3" width="1" height="1" fill="#8a8a8a"/><rect x="1169.1" y="233.3" width="1" height="1" fill="#8a8a8a"/><rect x="1177.6" y="233.3" width="1" height="1" fill="#8a8a8a"/><rect x="1186.1" y="233.3" width="1" height="1" fill="#8a8a8a"/><rect x="1194.6" y="233.3" width="1" height="1" fill="#8a8a8a"/><rect x="1211.6" y="233.3" width="1" height="1" fill="#8a8a8a"/><rect x="1220.1" y="233.3" width="1" height="1" fill="#8a8a8a"/><rect x="1228.6" y="233.3" width="1" height="1" fill="#8a8a8a"/><rect x="1237.1" y="233.3" width="1" height="1" fill="#8a8a8a"/><rect x="1254.0" y="233.3" width="1" height="1" fill="#8a8a8a"/><rect x="1262.5" y="233.3" width="1" height="1" fill="#8a8a8a"/><rect x="1271.0" y="233.3" width="1" height="1" fill="#8a8a8a"/><rect x="1279.5" y="233.3" width="1" height="1" fill="#8a8a8a"/><rect x="872.0" y="246.1" width="1" height="1" fill="#8a8a8a"/><rect x="880.5" y="246.1" width="1" height="1" fill="#8a8a8a"/><rect x="889.0" y="246.1" width="1" height="1" fill="#8a8a8a"/><rect x="897.5" y="246.1" width="1" height="1" fill="#8a8a8a"/><rect x="914.4" y="246.1" width="1" height="1" fill="#8a8a8a"/><rect x="922.9" y="246.1" width="1" height="1" fill="#8a8a8a"/><rect x="931.4" y="246.1" width="1" height="1" fill="#8a8a8a"/><rect x="939.9" y="246.1" width="1" height="1" fill="#8a8a8a"/><rect x="956.9" y="246.1" width="1" height="1" fill="#8a8a8a"/><rect x="965.4" y="246.1" width="1" height="1" fill="#8a8a8a"/><rect x="973.9" y="246.1" width="1" height="1" fill="#8a8a8a"/><rect x="982.4" y="246.1" width="1" height="1" fill="#8a8a8a"/><rect x="999.3" y="246.1" width="1" height="1" fill="#8a8a8a"/><rect x="1007.8" y="246.1" width="1" height="1" fill="#8a8a8a"/><rect x="1016.3" y="246.1" width="1" height="1" fill="#8a8a8a"/><rect x="1024.8" y="246.1" width="1" height="1" fill="#8a8a8a"/><rect x="1041.8" y="246.1" width="1" height="1" fill="#8a8a8a"/><rect x="1050.3" y="246.1" width="1" height="1" fill="#8a8a8a"/><rect x="1058.8" y="246.1" width="1" height="1" fill="#8a8a8a"/><rect x="1067.3" y="246.1" width="1" height="1" fill="#8a8a8a"/><rect x="1084.2" y="246.1" width="1" height="1" fill="#8a8a8a"/><rect x="1092.7" y="246.1" width="1" height="1" fill="#8a8a8a"/><rect x="1101.2" y="246.1" width="1" height="1" fill="#8a8a8a"/><rect x="1109.7" y="246.1" width="1" height="1" fill="#8a8a8a"/><rect x="1126.7" y="246.1" width="1" height="1" fill="#8a8a8a"/><rect x="1135.2" y="246.1" width="1" height="1" fill="#8a8a8a"/><rect x="1143.7" y="246.1" width="1" height="1" fill="#8a8a8a"/><rect x="1152.2" y="246.1" width="1" height="1" fill="#8a8a8a"/><rect x="1169.1" y="246.1" width="1" height="1" fill="#8a8a8a"/><rect x="1177.6" y="246.1" width="1" height="1" fill="#8a8a8a"/><rect x="1186.1" y="246.1" width="1" height="1" fill="#8a8a8a"/><rect x="1194.6" y="246.1" width="1" height="1" fill="#8a8a8a"/><rect x="1211.6" y="246.1" width="1" height="1" fill="#8a8a8a"/><rect x="1220.1" y="246.1" width="1" height="1" fill="#8a8a8a"/><rect x="1228.6" y="246.1" width="1" height="1" fill="#8a8a8a"/><rect x="1237.1" y="246.1" width="1" height="1" fill="#8a8a8a"/><rect x="1254.0" y="246.1" width="1" height="1" fill="#8a8a8a"/><rect x="1262.5" y="246.1" width="1" height="1" fill="#8a8a8a"/><rect x="1271.0" y="246.1" width="1" height="1" fill="#8a8a8a"/><rect x="1279.5" y="246.1" width="1" height="1" fill="#8a8a8a"/><rect x="872.0" y="258.9" width="1" height="1" fill="#8a8a8a"/><rect x="880.5" y="258.9" width="1" height="1" fill="#8a8a8a"/><rect x="889.0" y="258.9" width="1" height="1" fill="#8a8a8a"/><rect x="897.5" y="258.9" width="1" height="1" fill="#8a8a8a"/><rect x="914.4" y="258.9" width="1" height="1" fill="#8a8a8a"/><rect x="922.9" y="258.9" width="1" height="1" fill="#8a8a8a"/><rect x="931.4" y="258.9" width="1" height="1" fill="#8a8a8a"/><rect x="939.9" y="258.9" width="1" height="1" fill="#8a8a8a"/><rect x="956.9" y="258.9" width="1" height="1" fill="#8a8a8a"/><rect x="965.4" y="258.9" width="1" height="1" fill="#8a8a8a"/><rect x="973.9" y="258.9" width="1" height="1" fill="#8a8a8a"/><rect x="982.4" y="258.9" width="1" height="1" fill="#8a8a8a"/><rect x="999.3" y="258.9" width="1" height="1" fill="#8a8a8a"/><rect x="1007.8" y="258.9" width="1" height="1" fill="#8a8a8a"/><rect x="1016.3" y="258.9" width="1" height="1" fill="#8a8a8a"/><rect x="1024.8" y="258.9" width="1" height="1" fill="#8a8a8a"/><rect x="1041.8" y="258.9" width="1" height="1" fill="#8a8a8a"/><rect x="1050.3" y="258.9" width="1" height="1" fill="#8a8a8a"/><rect x="1058.8" y="258.9" width="1" height="1" fill="#8a8a8a"/><rect x="1067.3" y="258.9" width="1" height="1" fill="#8a8a8a"/><rect x="1084.2" y="258.9" width="1" height="1" fill="#8a8a8a"/><rect x="1092.7" y="258.9" width="1" height="1" fill="#8a8a8a"/><rect x="1101.2" y="258.9" width="1" height="1" fill="#8a8a8a"/><rect x="1109.7" y="258.9" width="1" height="1" fill="#8a8a8a"/><rect x="1126.7" y="258.9" width="1" height="1" fill="#8a8a8a"/><rect x="1135.2" y="258.9" width="1" height="1" fill="#8a8a8a"/><rect x="1143.7" y="258.9" width="1" height="1" fill="#8a8a8a"/><rect x="1152.2" y="258.9" width="1" height="1" fill="#8a8a8a"/><rect x="1169.1" y="258.9" width="1" height="1" fill="#8a8a8a"/><rect x="1177.6" y="258.9" width="1" height="1" fill="#8a8a8a"/><rect x="1186.1" y="258.9" width="1" height="1" fill="#8a8a8a"/><rect x="1194.6" y="258.9" width="1" height="1" fill="#8a8a8a"/><rect x="1211.6" y="258.9" width="1" height="1" fill="#8a8a8a"/><rect x="1220.1" y="258.9" width="1" height="1" fill="#8a8a8a"/><rect x="1228.6" y="258.9" width="1" height="1" fill="#8a8a8a"/><rect x="1237.1" y="258.9" width="1" height="1" fill="#8a8a8a"/><rect x="1254.0" y="258.9" width="1" height="1" fill="#8a8a8a"/><rect x="1262.5" y="258.9" width="1" height="1" fill="#8a8a8a"/><rect x="1271.0" y="258.9" width="1" height="1" fill="#8a8a8a"/><rect x="1279.5" y="258.9" width="1" height="1" fill="#8a8a8a"/><rect x="872.0" y="271.7" width="1" height="1" fill="#8a8a8a"/><rect x="880.5" y="271.7" width="1" height="1" fill="#8a8a8a"/><rect x="889.0" y="271.7" width="1" height="1" fill="#8a8a8a"/><rect x="897.5" y="271.7" width="1" height="1" fill="#8a8a8a"/><rect x="914.4" y="271.7" width="1" height="1" fill="#8a8a8a"/><rect x="922.9" y="271.7" width="1" height="1" fill="#8a8a8a"/><rect x="931.4" y="271.7" width="1" height="1" fill="#8a8a8a"/><rect x="939.9" y="271.7" width="1" height="1" fill="#8a8a8a"/><rect x="956.9" y="271.7" width="1" height="1" fill="#8a8a8a"/><rect x="965.4" y="271.7" width="1" height="1" fill="#8a8a8a"/><rect x="973.9" y="271.7" width="1" height="1" fill="#8a8a8a"/><rect x="982.4" y="271.7" width="1" height="1" fill="#8a8a8a"/><rect x="999.3" y="271.7" width="1" height="1" fill="#8a8a8a"/><rect x="1007.8" y="271.7" width="1" height="1" fill="#8a8a8a"/><rect x="1016.3" y="271.7" width="1" height="1" fill="#8a8a8a"/><rect x="1024.8" y="271.7" width="1" height="1" fill="#8a8a8a"/><rect x="1041.8" y="271.7" width="1" height="1" fill="#8a8a8a"/><rect x="1050.3" y="271.7" width="1" height="1" fill="#8a8a8a"/><rect x="1058.8" y="271.7" width="1" height="1" fill="#8a8a8a"/><rect x="1067.3" y="271.7" width="1" height="1" fill="#8a8a8a"/><rect x="1084.2" y="271.7" width="1" height="1" fill="#8a8a8a"/><rect x="1092.7" y="271.7" width="1" height="1" fill="#8a8a8a"/><rect x="1101.2" y="271.7" width="1" height="1" fill="#8a8a8a"/><rect x="1109.7" y="271.7" width="1" height="1" fill="#8a8a8a"/><rect x="1126.7" y="271.7" width="1" height="1" fill="#8a8a8a"/><rect x="1135.2" y="271.7" width="1" height="1" fill="#8a8a8a"/><rect x="1143.7" y="271.7" width="1" height="1" fill="#8a8a8a"/><rect x="1152.2" y="271.7" width="1" height="1" fill="#8a8a8a"/><rect x="1169.1" y="271.7" width="1" height="1" fill="#8a8a8a"/><rect x="1177.6" y="271.7" width="1" height="1" fill="#8a8a8a"/><rect x="1186.1" y="271.7" width="1" height="1" fill="#8a8a8a"/><rect x="1194.6" y="271.7" width="1" height="1" fill="#8a8a8a"/><rect x="1211.6" y="271.7" width="1" height="1" fill="#8a8a8a"/><rect x="1220.1" y="271.7" width="1" height="1" fill="#8a8a8a"/><rect x="1228.6" y="271.7" width="1" height="1" fill="#8a8a8a"/><rect x="1237.1" y="271.7" width="1" height="1" fill="#8a8a8a"/><rect x="1254.0" y="271.7" width="1" height="1" fill="#8a8a8a"/><rect x="1262.5" y="271.7" width="1" height="1" fill="#8a8a8a"/><rect x="1271.0" y="271.7" width="1" height="1" fill="#8a8a8a"/><rect x="1279.5" y="271.7" width="1" height="1" fill="#8a8a8a"/><rect x="872.0" y="284.5" width="1" height="1" fill="#8a8a8a"/><rect x="880.5" y="284.5" width="1" height="1" fill="#8a8a8a"/><rect x="889.0" y="284.5" width="1" height="1" fill="#8a8a8a"/><rect x="897.5" y="284.5" width="1" height="1" fill="#8a8a8a"/><rect x="914.4" y="284.5" width="1" height="1" fill="#8a8a8a"/><rect x="922.9" y="284.5" width="1" height="1" fill="#8a8a8a"/><rect x="931.4" y="284.5" width="1" height="1" fill="#8a8a8a"/><rect x="939.9" y="284.5" width="1" height="1" fill="#8a8a8a"/><rect x="956.9" y="284.5" width="1" height="1" fill="#8a8a8a"/><rect x="965.4" y="284.5" width="1" height="1" fill="#8a8a8a"/><rect x="973.9" y="284.5" width="1" height="1" fill="#8a8a8a"/><rect x="982.4" y="284.5" width="1" height="1" fill="#8a8a8a"/><rect x="999.3" y="284.5" width="1" height="1" fill="#8a8a8a"/><rect x="1007.8" y="284.5" width="1" height="1" fill="#8a8a8a"/><rect x="1016.3" y="284.5" width="1" height="1" fill="#8a8a8a"/><rect x="1024.8" y="284.5" width="1" height="1" fill="#8a8a8a"/><rect x="1041.8" y="284.5" width="1" height="1" fill="#8a8a8a"/><rect x="1050.3" y="284.5" width="1" height="1" fill="#8a8a8a"/><rect x="1058.8" y="284.5" width="1" height="1" fill="#8a8a8a"/><rect x="1067.3" y="284.5" width="1" height="1" fill="#8a8a8a"/><rect x="1084.2" y="284.5" width="1" height="1" fill="#8a8a8a"/><rect x="1092.7" y="284.5" width="1" height="1" fill="#8a8a8a"/><rect x="1101.2" y="284.5" width="1" height="1" fill="#8a8a8a"/><rect x="1109.7" y="284.5" width="1" height="1" fill="#8a8a8a"/><rect x="1126.7" y="284.5" width="1" height="1" fill="#8a8a8a"/><rect x="1135.2" y="284.5" width="1" height="1" fill="#8a8a8a"/><rect x="1143.7" y="284.5" width="1" height="1" fill="#8a8a8a"/><rect x="1152.2" y="284.5" width="1" height="1" fill="#8a8a8a"/><rect x="1169.1" y="284.5" width="1" height="1" fill="#8a8a8a"/><rect x="1177.6" y="284.5" width="1" height="1" fill="#8a8a8a"/><rect x="1186.1" y="284.5" width="1" height="1" fill="#8a8a8a"/><rect x="1194.6" y="284.5" width="1" height="1" fill="#8a8a8a"/><rect x="1211.6" y="284.5" width="1" height="1" fill="#8a8a8a"/><rect x="1220.1" y="284.5" width="1" height="1" fill="#8a8a8a"/><rect x="1228.6" y="284.5" width="1" height="1" fill="#8a8a8a"/><rect x="1237.1" y="284.5" width="1" height="1" fill="#8a8a8a"/><rect x="1254.0" y="284.5" width="1" height="1" fill="#8a8a8a"/><rect x="1262.5" y="284.5" width="1" height="1" fill="#8a8a8a"/><rect x="1271.0" y="284.5" width="1" height="1" fill="#8a8a8a"/><rect x="1279.5" y="284.5" width="1" height="1" fill="#8a8a8a"/><rect x="872.0" y="297.3" width="1" height="1" fill="#8a8a8a"/><rect x="880.5" y="297.3" width="1" height="1" fill="#8a8a8a"/><rect x="889.0" y="297.3" width="1" height="1" fill="#8a8a8a"/><rect x="897.5" y="297.3" width="1" height="1" fill="#8a8a8a"/><rect x="914.4" y="297.3" width="1" height="1" fill="#8a8a8a"/><rect x="922.9" y="297.3" width="1" height="1" fill="#8a8a8a"/><rect x="931.4" y="297.3" width="1" height="1" fill="#8a8a8a"/><rect x="939.9" y="297.3" width="1" height="1" fill="#8a8a8a"/><rect x="956.9" y="297.3" width="1" height="1" fill="#8a8a8a"/><rect x="965.4" y="297.3" width="1" height="1" fill="#8a8a8a"/><rect x="973.9" y="297.3" width="1" height="1" fill="#8a8a8a"/><rect x="982.4" y="297.3" width="1" height="1" fill="#8a8a8a"/><rect x="999.3" y="297.3" width="1" height="1" fill="#8a8a8a"/><rect x="1007.8" y="297.3" width="1" height="1" fill="#8a8a8a"/><rect x="1016.3" y="297.3" width="1" height="1" fill="#8a8a8a"/><rect x="1024.8" y="297.3" width="1" height="1" fill="#8a8a8a"/><rect x="1041.8" y="297.3" width="1" height="1" fill="#8a8a8a"/><rect x="1050.3" y="297.3" width="1" height="1" fill="#8a8a8a"/><rect x="1058.8" y="297.3" width="1" height="1" fill="#8a8a8a"/><rect x="1067.3" y="297.3" width="1" height="1" fill="#8a8a8a"/><rect x="1084.2" y="297.3" width="1" height="1" fill="#8a8a8a"/><rect x="1092.7" y="297.3" width="1" height="1" fill="#8a8a8a"/><rect x="1101.2" y="297.3" width="1" height="1" fill="#8a8a8a"/><rect x="1109.7" y="297.3" width="1" height="1" fill="#8a8a8a"/><rect x="1126.7" y="297.3" width="1" height="1" fill="#8a8a8a"/><rect x="1135.2" y="297.3" width="1" height="1" fill="#8a8a8a"/><rect x="1143.7" y="297.3" width="1" height="1" fill="#8a8a8a"/><rect x="1152.2" y="297.3" width="1" height="1" fill="#8a8a8a"/><rect x="1169.1" y="297.3" width="1" height="1" fill="#8a8a8a"/><rect x="1177.6" y="297.3" width="1" height="1" fill="#8a8a8a"/><rect x="1186.1" y="297.3" width="1" height="1" fill="#8a8a8a"/><rect x="1194.6" y="297.3" width="1" height="1" fill="#8a8a8a"/><rect x="1211.6" y="297.3" width="1" height="1" fill="#8a8a8a"/><rect x="1220.1" y="297.3" width="1" height="1" fill="#8a8a8a"/><rect x="1228.6" y="297.3" width="1" height="1" fill="#8a8a8a"/><rect x="1237.1" y="297.3" width="1" height="1" fill="#8a8a8a"/><rect x="1254.0" y="297.3" width="1" height="1" fill="#8a8a8a"/><rect x="1262.5" y="297.3" width="1" height="1" fill="#8a8a8a"/><rect x="1271.0" y="297.3" width="1" height="1" fill="#8a8a8a"/><rect x="1279.5" y="297.3" width="1" height="1" fill="#8a8a8a"/><rect x="872.0" y="310.1" width="1" height="1" fill="#8a8a8a"/><rect x="880.5" y="310.1" width="1" height="1" fill="#8a8a8a"/><rect x="889.0" y="310.1" width="1" height="1" fill="#8a8a8a"/><rect x="897.5" y="310.1" width="1" height="1" fill="#8a8a8a"/><rect x="914.4" y="310.1" width="1" height="1" fill="#8a8a8a"/><rect x="922.9" y="310.1" width="1" height="1" fill="#8a8a8a"/><rect x="931.4" y="310.1" width="1" height="1" fill="#8a8a8a"/><rect x="939.9" y="310.1" width="1" height="1" fill="#8a8a8a"/><rect x="956.9" y="310.1" width="1" height="1" fill="#8a8a8a"/><rect x="965.4" y="310.1" width="1" height="1" fill="#8a8a8a"/><rect x="973.9" y="310.1" width="1" height="1" fill="#8a8a8a"/><rect x="982.4" y="310.1" width="1" height="1" fill="#8a8a8a"/><rect x="999.3" y="310.1" width="1" height="1" fill="#8a8a8a"/><rect x="1007.8" y="310.1" width="1" height="1" fill="#8a8a8a"/><rect x="1016.3" y="310.1" width="1" height="1" fill="#8a8a8a"/><rect x="1024.8" y="310.1" width="1" height="1" fill="#8a8a8a"/><rect x="1041.8" y="310.1" width="1" height="1" fill="#8a8a8a"/><rect x="1050.3" y="310.1" width="1" height="1" fill="#8a8a8a"/><rect x="1058.8" y="310.1" width="1" height="1" fill="#8a8a8a"/><rect x="1067.3" y="310.1" width="1" height="1" fill="#8a8a8a"/><rect x="1084.2" y="310.1" width="1" height="1" fill="#8a8a8a"/><rect x="1092.7" y="310.1" width="1" height="1" fill="#8a8a8a"/><rect x="1101.2" y="310.1" width="1" height="1" fill="#8a8a8a"/><rect x="1109.7" y="310.1" width="1" height="1" fill="#8a8a8a"/><rect x="1126.7" y="310.1" width="1" height="1" fill="#8a8a8a"/><rect x="1135.2" y="310.1" width="1" height="1" fill="#8a8a8a"/><rect x="1143.7" y="310.1" width="1" height="1" fill="#8a8a8a"/><rect x="1152.2" y="310.1" width="1" height="1" fill="#8a8a8a"/><rect x="1169.1" y="310.1" width="1" height="1" fill="#8a8a8a"/><rect x="1177.6" y="310.1" width="1" height="1" fill="#8a8a8a"/><rect x="1186.1" y="310.1" width="1" height="1" fill="#8a8a8a"/><rect x="1194.6" y="310.1" width="1" height="1" fill="#8a8a8a"/><rect x="1211.6" y="310.1" width="1" height="1" fill="#8a8a8a"/><rect x="1220.1" y="310.1" width="1" height="1" fill="#8a8a8a"/><rect x="1228.6" y="310.1" width="1" height="1" fill="#8a8a8a"/><rect x="1237.1" y="310.1" width="1" height="1" fill="#8a8a8a"/><rect x="1254.0" y="310.1" width="1" height="1" fill="#8a8a8a"/><rect x="1262.5" y="310.1" width="1" height="1" fill="#8a8a8a"/><rect x="1271.0" y="310.1" width="1" height="1" fill="#8a8a8a"/><rect x="1279.5" y="310.1" width="1" height="1" fill="#8a8a8a"/><rect x="872.0" y="312.8" width="1" height="1" fill="#8a8a8a"/><rect x="880.5" y="312.8" width="1" height="1" fill="#8a8a8a"/><rect x="889.0" y="312.8" width="1" height="1" fill="#8a8a8a"/><rect x="897.5" y="312.8" width="1" height="1" fill="#8a8a8a"/><rect x="914.4" y="312.8" width="1" height="1" fill="#8a8a8a"/><rect x="922.9" y="312.8" width="1" height="1" fill="#8a8a8a"/><rect x="931.4" y="312.8" width="1" height="1" fill="#8a8a8a"/><rect x="939.9" y="312.8" width="1" height="1" fill="#8a8a8a"/><rect x="956.9" y="312.8" width="1" height="1" fill="#8a8a8a"/><rect x="965.4" y="312.8" width="1" height="1" fill="#8a8a8a"/><rect x="973.9" y="312.8" width="1" height="1" fill="#8a8a8a"/><rect x="982.4" y="312.8" width="1" height="1" fill="#8a8a8a"/><rect x="999.3" y="312.8" width="1" height="1" fill="#8a8a8a"/><rect x="1007.8" y="312.8" width="1" height="1" fill="#8a8a8a"/><rect x="1016.3" y="312.8" width="1" height="1" fill="#8a8a8a"/><rect x="1024.8" y="312.8" width="1" height="1" fill="#8a8a8a"/><rect x="1041.8" y="312.8" width="1" height="1" fill="#8a8a8a"/><rect x="1050.3" y="312.8" width="1" height="1" fill="#8a8a8a"/><rect x="1058.8" y="312.8" width="1" height="1" fill="#8a8a8a"/><rect x="1067.3" y="312.8" width="1" height="1" fill="#8a8a8a"/><rect x="1084.2" y="312.8" width="1" height="1" fill="#8a8a8a"/><rect x="1092.7" y="312.8" width="1" height="1" fill="#8a8a8a"/><rect x="1101.2" y="312.8" width="1" height="1" fill="#8a8a8a"/><rect x="1109.7" y="312.8" width="1" height="1" fill="#8a8a8a"/><rect x="1126.7" y="312.8" width="1" height="1" fill="#8a8a8a"/><rect x="1135.2" y="312.8" width="1" height="1" fill="#8a8a8a"/><rect x="1143.7" y="312.8" width="1" height="1" fill="#8a8a8a"/><rect x="1152.2" y="312.8" width="1" height="1" fill="#8a8a8a"/><rect x="1169.1" y="312.8" width="1" height="1" fill="#8a8a8a"/><rect x="1177.6" y="312.8" width="1" height="1" fill="#8a8a8a"/><rect x="1186.1" y="312.8" width="1" height="1" fill="#8a8a8a"/><rect x="1194.6" y="312.8" width="1" height="1" fill="#8a8a8a"/><rect x="1211.6" y="312.8" width="1" height="1" fill="#8a8a8a"/><rect x="1220.1" y="312.8" width="1" height="1" fill="#8a8a8a"/><rect x="1228.6" y="312.8" width="1" height="1" fill="#8a8a8a"/><rect x="1237.1" y="312.8" width="1" height="1" fill="#8a8a8a"/><rect x="1254.0" y="312.8" width="1" height="1" fill="#8a8a8a"/><rect x="1262.5" y="312.8" width="1" height="1" fill="#8a8a8a"/><rect x="1271.0" y="312.8" width="1" height="1" fill="#8a8a8a"/><rect x="1279.5" y="312.8" width="1" height="1" fill="#8a8a8a"/><rect x="872.0" y="325.3" width="1" height="1" fill="#8a8a8a"/><rect x="880.5" y="325.3" width="1" height="1" fill="#8a8a8a"/><rect x="889.0" y="325.3" width="1" height="1" fill="#8a8a8a"/><rect x="897.5" y="325.3" width="1" height="1" fill="#8a8a8a"/><rect x="914.4" y="325.3" width="1" height="1" fill="#8a8a8a"/><rect x="922.9" y="325.3" width="1" height="1" fill="#8a8a8a"/><rect x="931.4" y="325.3" width="1" height="1" fill="#8a8a8a"/><rect x="939.9" y="325.3" width="1" height="1" fill="#8a8a8a"/><rect x="956.9" y="325.3" width="1" height="1" fill="#8a8a8a"/><rect x="965.4" y="325.3" width="1" height="1" fill="#8a8a8a"/><rect x="973.9" y="325.3" width="1" height="1" fill="#8a8a8a"/><rect x="982.4" y="325.3" width="1" height="1" fill="#8a8a8a"/><rect x="999.3" y="325.3" width="1" height="1" fill="#8a8a8a"/><rect x="1007.8" y="325.3" width="1" height="1" fill="#8a8a8a"/><rect x="1016.3" y="325.3" width="1" height="1" fill="#8a8a8a"/><rect x="1024.8" y="325.3" width="1" height="1" fill="#8a8a8a"/><rect x="1041.8" y="325.3" width="1" height="1" fill="#8a8a8a"/><rect x="1050.3" y="325.3" width="1" height="1" fill="#8a8a8a"/><rect x="1058.8" y="325.3" width="1" height="1" fill="#8a8a8a"/><rect x="1067.3" y="325.3" width="1" height="1" fill="#8a8a8a"/><rect x="1084.2" y="325.3" width="1" height="1" fill="#8a8a8a"/><rect x="1092.7" y="325.3" width="1" height="1" fill="#8a8a8a"/><rect x="1101.2" y="325.3" width="1" height="1" fill="#8a8a8a"/><rect x="1109.7" y="325.3" width="1" height="1" fill="#8a8a8a"/><rect x="1126.7" y="325.3" width="1" height="1" fill="#8a8a8a"/><rect x="1135.2" y="325.3" width="1" height="1" fill="#8a8a8a"/><rect x="1143.7" y="325.3" width="1" height="1" fill="#8a8a8a"/><rect x="1152.2" y="325.3" width="1" height="1" fill="#8a8a8a"/><rect x="1169.1" y="325.3" width="1" height="1" fill="#8a8a8a"/><rect x="1177.6" y="325.3" width="1" height="1" fill="#8a8a8a"/><rect x="1186.1" y="325.3" width="1" height="1" fill="#8a8a8a"/><rect x="1194.6" y="325.3" width="1" height="1" fill="#8a8a8a"/><rect x="1211.6" y="325.3" width="1" height="1" fill="#8a8a8a"/><rect x="1220.1" y="325.3" width="1" height="1" fill="#8a8a8a"/><rect x="1228.6" y="325.3" width="1" height="1" fill="#8a8a8a"/><rect x="1237.1" y="325.3" width="1" height="1" fill="#8a8a8a"/><rect x="1254.0" y="325.3" width="1" height="1" fill="#8a8a8a"/><rect x="1262.5" y="325.3" width="1" height="1" fill="#8a8a8a"/><rect x="1271.0" y="325.3" width="1" height="1" fill="#8a8a8a"/><rect x="1279.5" y="325.3" width="1" height="1" fill="#8a8a8a"/><rect x="872.0" y="337.9" width="1" height="1" fill="#8a8a8a"/><rect x="880.5" y="337.9" width="1" height="1" fill="#8a8a8a"/><rect x="889.0" y="337.9" width="1" height="1" fill="#8a8a8a"/><rect x="897.5" y="337.9" width="1" height="1" fill="#8a8a8a"/><rect x="914.4" y="337.9" width="1" height="1" fill="#8a8a8a"/><rect x="922.9" y="337.9" width="1" height="1" fill="#8a8a8a"/><rect x="931.4" y="337.9" width="1" height="1" fill="#8a8a8a"/><rect x="939.9" y="337.9" width="1" height="1" fill="#8a8a8a"/><rect x="956.9" y="337.9" width="1" height="1" fill="#8a8a8a"/><rect x="965.4" y="337.9" width="1" height="1" fill="#8a8a8a"/><rect x="973.9" y="337.9" width="1" height="1" fill="#8a8a8a"/><rect x="982.4" y="337.9" width="1" height="1" fill="#8a8a8a"/><rect x="999.3" y="337.9" width="1" height="1" fill="#8a8a8a"/><rect x="1007.8" y="337.9" width="1" height="1" fill="#8a8a8a"/><rect x="1016.3" y="337.9" width="1" height="1" fill="#8a8a8a"/><rect x="1024.8" y="337.9" width="1" height="1" fill="#8a8a8a"/><rect x="1041.8" y="337.9" width="1" height="1" fill="#8a8a8a"/><rect x="1050.3" y="337.9" width="1" height="1" fill="#8a8a8a"/><rect x="1058.8" y="337.9" width="1" height="1" fill="#8a8a8a"/><rect x="1067.3" y="337.9" width="1" height="1" fill="#8a8a8a"/><rect x="1084.2" y="337.9" width="1" height="1" fill="#8a8a8a"/><rect x="1092.7" y="337.9" width="1" height="1" fill="#8a8a8a"/><rect x="1101.2" y="337.9" width="1" height="1" fill="#8a8a8a"/><rect x="1109.7" y="337.9" width="1" height="1" fill="#8a8a8a"/><rect x="1126.7" y="337.9" width="1" height="1" fill="#8a8a8a"/><rect x="1135.2" y="337.9" width="1" height="1" fill="#8a8a8a"/><rect x="1143.7" y="337.9" width="1" height="1" fill="#8a8a8a"/><rect x="1152.2" y="337.9" width="1" height="1" fill="#8a8a8a"/><rect x="1169.1" y="337.9" width="1" height="1" fill="#8a8a8a"/><rect x="1177.6" y="337.9" width="1" height="1" fill="#8a8a8a"/><rect x="1186.1" y="337.9" width="1" height="1" fill="#8a8a8a"/><rect x="1194.6" y="337.9" width="1" height="1" fill="#8a8a8a"/><rect x="1211.6" y="337.9" width="1" height="1" fill="#8a8a8a"/><rect x="1220.1" y="337.9" width="1" height="1" fill="#8a8a8a"/><rect x="1228.6" y="337.9" width="1" height="1" fill="#8a8a8a"/><rect x="1237.1" y="337.9" width="1" height="1" fill="#8a8a8a"/><rect x="1254.0" y="337.9" width="1" height="1" fill="#8a8a8a"/><rect x="1262.5" y="337.9" width="1" height="1" fill="#8a8a8a"/><rect x="1271.0" y="337.9" width="1" height="1" fill="#8a8a8a"/><rect x="1279.5" y="337.9" width="1" height="1" fill="#8a8a8a"/><rect x="872.0" y="350.6" width="1" height="1" fill="#8a8a8a"/><rect x="880.5" y="350.6" width="1" height="1" fill="#8a8a8a"/><rect x="889.0" y="350.6" width="1" height="1" fill="#8a8a8a"/><rect x="897.5" y="350.6" width="1" height="1" fill="#8a8a8a"/><rect x="914.4" y="350.6" width="1" height="1" fill="#8a8a8a"/><rect x="922.9" y="350.6" width="1" height="1" fill="#8a8a8a"/><rect x="931.4" y="350.6" width="1" height="1" fill="#8a8a8a"/><rect x="939.9" y="350.6" width="1" height="1" fill="#8a8a8a"/><rect x="956.9" y="350.6" width="1" height="1" fill="#8a8a8a"/><rect x="965.4" y="350.6" width="1" height="1" fill="#8a8a8a"/><rect x="973.9" y="350.6" width="1" height="1" fill="#8a8a8a"/><rect x="982.4" y="350.6" width="1" height="1" fill="#8a8a8a"/><rect x="999.3" y="350.6" width="1" height="1" fill="#8a8a8a"/><rect x="1007.8" y="350.6" width="1" height="1" fill="#8a8a8a"/><rect x="1016.3" y="350.6" width="1" height="1" fill="#8a8a8a"/><rect x="1024.8" y="350.6" width="1" height="1" fill="#8a8a8a"/><rect x="1041.8" y="350.6" width="1" height="1" fill="#8a8a8a"/><rect x="1050.3" y="350.6" width="1" height="1" fill="#8a8a8a"/><rect x="1058.8" y="350.6" width="1" height="1" fill="#8a8a8a"/><rect x="1067.3" y="350.6" width="1" height="1" fill="#8a8a8a"/><rect x="1084.2" y="350.6" width="1" height="1" fill="#8a8a8a"/><rect x="1092.7" y="350.6" width="1" height="1" fill="#8a8a8a"/><rect x="1101.2" y="350.6" width="1" height="1" fill="#8a8a8a"/><rect x="1109.7" y="350.6" width="1" height="1" fill="#8a8a8a"/><rect x="1126.7" y="350.6" width="1" height="1" fill="#8a8a8a"/><rect x="1135.2" y="350.6" width="1" height="1" fill="#8a8a8a"/><rect x="1143.7" y="350.6" width="1" height="1" fill="#8a8a8a"/><rect x="1152.2" y="350.6" width="1" height="1" fill="#8a8a8a"/><rect x="1169.1" y="350.6" width="1" height="1" fill="#8a8a8a"/><rect x="1177.6" y="350.6" width="1" height="1" fill="#8a8a8a"/><rect x="1186.1" y="350.6" width="1" height="1" fill="#8a8a8a"/><rect x="1194.6" y="350.6" width="1" height="1" fill="#8a8a8a"/><rect x="1211.6" y="350.6" width="1" height="1" fill="#8a8a8a"/><rect x="1220.1" y="350.6" width="1" height="1" fill="#8a8a8a"/><rect x="1228.6" y="350.6" width="1" height="1" fill="#8a8a8a"/><rect x="1237.1" y="350.6" width="1" height="1" fill="#8a8a8a"/><rect x="1254.0" y="350.6" width="1" height="1" fill="#8a8a8a"/><rect x="1262.5" y="350.6" width="1" height="1" fill="#8a8a8a"/><rect x="1271.0" y="350.6" width="1" height="1" fill="#8a8a8a"/><rect x="1279.5" y="350.6" width="1" height="1" fill="#8a8a8a"/><rect x="872.0" y="363.2" width="1" height="1" fill="#8a8a8a"/><rect x="880.5" y="363.2" width="1" height="1" fill="#8a8a8a"/><rect x="889.0" y="363.2" width="1" height="1" fill="#8a8a8a"/><rect x="897.5" y="363.2" width="1" height="1" fill="#8a8a8a"/><rect x="914.4" y="363.2" width="1" height="1" fill="#8a8a8a"/><rect x="922.9" y="363.2" width="1" height="1" fill="#8a8a8a"/><rect x="931.4" y="363.2" width="1" height="1" fill="#8a8a8a"/><rect x="939.9" y="363.2" width="1" height="1" fill="#8a8a8a"/><rect x="956.9" y="363.2" width="1" height="1" fill="#8a8a8a"/><rect x="965.4" y="363.2" width="1" height="1" fill="#8a8a8a"/><rect x="973.9" y="363.2" width="1" height="1" fill="#8a8a8a"/><rect x="982.4" y="363.2" width="1" height="1" fill="#8a8a8a"/><rect x="999.3" y="363.2" width="1" height="1" fill="#8a8a8a"/><rect x="1007.8" y="363.2" width="1" height="1" fill="#8a8a8a"/><rect x="1016.3" y="363.2" width="1" height="1" fill="#8a8a8a"/><rect x="1024.8" y="363.2" width="1" height="1" fill="#8a8a8a"/><rect x="1041.8" y="363.2" width="1" height="1" fill="#8a8a8a"/><rect x="1050.3" y="363.2" width="1" height="1" fill="#8a8a8a"/><rect x="1058.8" y="363.2" width="1" height="1" fill="#8a8a8a"/><rect x="1067.3" y="363.2" width="1" height="1" fill="#8a8a8a"/><rect x="1084.2" y="363.2" width="1" height="1" fill="#8a8a8a"/><rect x="1092.7" y="363.2" width="1" height="1" fill="#8a8a8a"/><rect x="1101.2" y="363.2" width="1" height="1" fill="#8a8a8a"/><rect x="1109.7" y="363.2" width="1" height="1" fill="#8a8a8a"/><rect x="1126.7" y="363.2" width="1" height="1" fill="#8a8a8a"/><rect x="1135.2" y="363.2" width="1" height="1" fill="#8a8a8a"/><rect x="1143.7" y="363.2" width="1" height="1" fill="#8a8a8a"/><rect x="1152.2" y="363.2" width="1" height="1" fill="#8a8a8a"/><rect x="1169.1" y="363.2" width="1" height="1" fill="#8a8a8a"/><rect x="1177.6" y="363.2" width="1" height="1" fill="#8a8a8a"/><rect x="1186.1" y="363.2" width="1" height="1" fill="#8a8a8a"/><rect x="1194.6" y="363.2" width="1" height="1" fill="#8a8a8a"/><rect x="1211.6" y="363.2" width="1" height="1" fill="#8a8a8a"/><rect x="1220.1" y="363.2" width="1" height="1" fill="#8a8a8a"/><rect x="1228.6" y="363.2" width="1" height="1" fill="#8a8a8a"/><rect x="1237.1" y="363.2" width="1" height="1" fill="#8a8a8a"/><rect x="1254.0" y="363.2" width="1" height="1" fill="#8a8a8a"/><rect x="1262.5" y="363.2" width="1" height="1" fill="#8a8a8a"/><rect x="1271.0" y="363.2" width="1" height="1" fill="#8a8a8a"/><rect x="1279.5" y="363.2" width="1" height="1" fill="#8a8a8a"/><rect x="872.0" y="375.9" width="1" height="1" fill="#8a8a8a"/><rect x="880.5" y="375.9" width="1" height="1" fill="#8a8a8a"/><rect x="889.0" y="375.9" width="1" height="1" fill="#8a8a8a"/><rect x="897.5" y="375.9" width="1" height="1" fill="#8a8a8a"/><rect x="914.4" y="375.9" width="1" height="1" fill="#8a8a8a"/><rect x="922.9" y="375.9" width="1" height="1" fill="#8a8a8a"/><rect x="931.4" y="375.9" width="1" height="1" fill="#8a8a8a"/><rect x="939.9" y="375.9" width="1" height="1" fill="#8a8a8a"/><rect x="956.9" y="375.9" width="1" height="1" fill="#8a8a8a"/><rect x="965.4" y="375.9" width="1" height="1" fill="#8a8a8a"/><rect x="973.9" y="375.9" width="1" height="1" fill="#8a8a8a"/><rect x="982.4" y="375.9" width="1" height="1" fill="#8a8a8a"/><rect x="999.3" y="375.9" width="1" height="1" fill="#8a8a8a"/><rect x="1007.8" y="375.9" width="1" height="1" fill="#8a8a8a"/><rect x="1016.3" y="375.9" width="1" height="1" fill="#8a8a8a"/><rect x="1024.8" y="375.9" width="1" height="1" fill="#8a8a8a"/><rect x="1041.8" y="375.9" width="1" height="1" fill="#8a8a8a"/><rect x="1050.3" y="375.9" width="1" height="1" fill="#8a8a8a"/><rect x="1058.8" y="375.9" width="1" height="1" fill="#8a8a8a"/><rect x="1067.3" y="375.9" width="1" height="1" fill="#8a8a8a"/><rect x="1084.2" y="375.9" width="1" height="1" fill="#8a8a8a"/><rect x="1092.7" y="375.9" width="1" height="1" fill="#8a8a8a"/><rect x="1101.2" y="375.9" width="1" height="1" fill="#8a8a8a"/><rect x="1109.7" y="375.9" width="1" height="1" fill="#8a8a8a"/><rect x="1126.7" y="375.9" width="1" height="1" fill="#8a8a8a"/><rect x="1135.2" y="375.9" width="1" height="1" fill="#8a8a8a"/><rect x="1143.7" y="375.9" width="1" height="1" fill="#8a8a8a"/><rect x="1152.2" y="375.9" width="1" height="1" fill="#8a8a8a"/><rect x="1169.1" y="375.9" width="1" height="1" fill="#8a8a8a"/><rect x="1177.6" y="375.9" width="1" height="1" fill="#8a8a8a"/><rect x="1186.1" y="375.9" width="1" height="1" fill="#8a8a8a"/><rect x="1194.6" y="375.9" width="1" height="1" fill="#8a8a8a"/><rect x="1211.6" y="375.9" width="1" height="1" fill="#8a8a8a"/><rect x="1220.1" y="375.9" width="1" height="1" fill="#8a8a8a"/><rect x="1228.6" y="375.9" width="1" height="1" fill="#8a8a8a"/><rect x="1237.1" y="375.9" width="1" height="1" fill="#8a8a8a"/><rect x="1254.0" y="375.9" width="1" height="1" fill="#8a8a8a"/><rect x="1262.5" y="375.9" width="1" height="1" fill="#8a8a8a"/><rect x="1271.0" y="375.9" width="1" height="1" fill="#8a8a8a"/><rect x="1279.5" y="375.9" width="1" height="1" fill="#8a8a8a"/><rect x="872.0" y="388.5" width="1" height="1" fill="#8a8a8a"/><rect x="880.5" y="388.5" width="1" height="1" fill="#8a8a8a"/><rect x="889.0" y="388.5" width="1" height="1" fill="#8a8a8a"/><rect x="897.5" y="388.5" width="1" height="1" fill="#8a8a8a"/><rect x="914.4" y="388.5" width="1" height="1" fill="#8a8a8a"/><rect x="922.9" y="388.5" width="1" height="1" fill="#8a8a8a"/><rect x="931.4" y="388.5" width="1" height="1" fill="#8a8a8a"/><rect x="939.9" y="388.5" width="1" height="1" fill="#8a8a8a"/><rect x="956.9" y="388.5" width="1" height="1" fill="#8a8a8a"/><rect x="965.4" y="388.5" width="1" height="1" fill="#8a8a8a"/><rect x="973.9" y="388.5" width="1" height="1" fill="#8a8a8a"/><rect x="982.4" y="388.5" width="1" height="1" fill="#8a8a8a"/><rect x="999.3" y="388.5" width="1" height="1" fill="#8a8a8a"/><rect x="1007.8" y="388.5" width="1" height="1" fill="#8a8a8a"/><rect x="1016.3" y="388.5" width="1" height="1" fill="#8a8a8a"/><rect x="1024.8" y="388.5" width="1" height="1" fill="#8a8a8a"/><rect x="1041.8" y="388.5" width="1" height="1" fill="#8a8a8a"/><rect x="1050.3" y="388.5" width="1" height="1" fill="#8a8a8a"/><rect x="1058.8" y="388.5" width="1" height="1" fill="#8a8a8a"/><rect x="1067.3" y="388.5" width="1" height="1" fill="#8a8a8a"/><rect x="1084.2" y="388.5" width="1" height="1" fill="#8a8a8a"/><rect x="1092.7" y="388.5" width="1" height="1" fill="#8a8a8a"/><rect x="1101.2" y="388.5" width="1" height="1" fill="#8a8a8a"/><rect x="1109.7" y="388.5" width="1" height="1" fill="#8a8a8a"/><rect x="1126.7" y="388.5" width="1" height="1" fill="#8a8a8a"/><rect x="1135.2" y="388.5" width="1" height="1" fill="#8a8a8a"/><rect x="1143.7" y="388.5" width="1" height="1" fill="#8a8a8a"/><rect x="1152.2" y="388.5" width="1" height="1" fill="#8a8a8a"/><rect x="1169.1" y="388.5" width="1" height="1" fill="#8a8a8a"/><rect x="1177.6" y="388.5" width="1" height="1" fill="#8a8a8a"/><rect x="1186.1" y="388.5" width="1" height="1" fill="#8a8a8a"/><rect x="1194.6" y="388.5" width="1" height="1" fill="#8a8a8a"/><rect x="1211.6" y="388.5" width="1" height="1" fill="#8a8a8a"/><rect x="1220.1" y="388.5" width="1" height="1" fill="#8a8a8a"/><rect x="1228.6" y="388.5" width="1" height="1" fill="#8a8a8a"/><rect x="1237.1" y="388.5" width="1" height="1" fill="#8a8a8a"/><rect x="1254.0" y="388.5" width="1" height="1" fill="#8a8a8a"/><rect x="1262.5" y="388.5" width="1" height="1" fill="#8a8a8a"/><rect x="1271.0" y="388.5" width="1" height="1" fill="#8a8a8a"/><rect x="1279.5" y="388.5" width="1" height="1" fill="#8a8a8a"/><rect x="872.0" y="401.2" width="1" height="1" fill="#8a8a8a"/><rect x="880.5" y="401.2" width="1" height="1" fill="#8a8a8a"/><rect x="889.0" y="401.2" width="1" height="1" fill="#8a8a8a"/><rect x="897.5" y="401.2" width="1" height="1" fill="#8a8a8a"/><rect x="914.4" y="401.2" width="1" height="1" fill="#8a8a8a"/><rect x="922.9" y="401.2" width="1" height="1" fill="#8a8a8a"/><rect x="931.4" y="401.2" width="1" height="1" fill="#8a8a8a"/><rect x="939.9" y="401.2" width="1" height="1" fill="#8a8a8a"/><rect x="956.9" y="401.2" width="1" height="1" fill="#8a8a8a"/><rect x="965.4" y="401.2" width="1" height="1" fill="#8a8a8a"/><rect x="973.9" y="401.2" width="1" height="1" fill="#8a8a8a"/><rect x="982.4" y="401.2" width="1" height="1" fill="#8a8a8a"/><rect x="999.3" y="401.2" width="1" height="1" fill="#8a8a8a"/><rect x="1007.8" y="401.2" width="1" height="1" fill="#8a8a8a"/><rect x="1016.3" y="401.2" width="1" height="1" fill="#8a8a8a"/><rect x="1024.8" y="401.2" width="1" height="1" fill="#8a8a8a"/><rect x="1041.8" y="401.2" width="1" height="1" fill="#8a8a8a"/><rect x="1050.3" y="401.2" width="1" height="1" fill="#8a8a8a"/><rect x="1058.8" y="401.2" width="1" height="1" fill="#8a8a8a"/><rect x="1067.3" y="401.2" width="1" height="1" fill="#8a8a8a"/><rect x="1084.2" y="401.2" width="1" height="1" fill="#8a8a8a"/><rect x="1092.7" y="401.2" width="1" height="1" fill="#8a8a8a"/><rect x="1101.2" y="401.2" width="1" height="1" fill="#8a8a8a"/><rect x="1109.7" y="401.2" width="1" height="1" fill="#8a8a8a"/><rect x="1126.7" y="401.2" width="1" height="1" fill="#8a8a8a"/><rect x="1135.2" y="401.2" width="1" height="1" fill="#8a8a8a"/><rect x="1143.7" y="401.2" width="1" height="1" fill="#8a8a8a"/><rect x="1152.2" y="401.2" width="1" height="1" fill="#8a8a8a"/><rect x="1169.1" y="401.2" width="1" height="1" fill="#8a8a8a"/><rect x="1177.6" y="401.2" width="1" height="1" fill="#8a8a8a"/><rect x="1186.1" y="401.2" width="1" height="1" fill="#8a8a8a"/><rect x="1194.6" y="401.2" width="1" height="1" fill="#8a8a8a"/><rect x="1211.6" y="401.2" width="1" height="1" fill="#8a8a8a"/><rect x="1220.1" y="401.2" width="1" height="1" fill="#8a8a8a"/><rect x="1228.6" y="401.2" width="1" height="1" fill="#8a8a8a"/><rect x="1237.1" y="401.2" width="1" height="1" fill="#8a8a8a"/><rect x="1254.0" y="401.2" width="1" height="1" fill="#8a8a8a"/><rect x="1262.5" y="401.2" width="1" height="1" fill="#8a8a8a"/><rect x="1271.0" y="401.2" width="1" height="1" fill="#8a8a8a"/><rect x="1279.5" y="401.2" width="1" height="1" fill="#8a8a8a"/><rect x="872.0" y="413.8" width="1" height="1" fill="#8a8a8a"/><rect x="880.5" y="413.8" width="1" height="1" fill="#8a8a8a"/><rect x="889.0" y="413.8" width="1" height="1" fill="#8a8a8a"/><rect x="897.5" y="413.8" width="1" height="1" fill="#8a8a8a"/><rect x="914.4" y="413.8" width="1" height="1" fill="#8a8a8a"/><rect x="922.9" y="413.8" width="1" height="1" fill="#8a8a8a"/><rect x="931.4" y="413.8" width="1" height="1" fill="#8a8a8a"/><rect x="939.9" y="413.8" width="1" height="1" fill="#8a8a8a"/><rect x="956.9" y="413.8" width="1" height="1" fill="#8a8a8a"/><rect x="965.4" y="413.8" width="1" height="1" fill="#8a8a8a"/><rect x="973.9" y="413.8" width="1" height="1" fill="#8a8a8a"/><rect x="982.4" y="413.8" width="1" height="1" fill="#8a8a8a"/><rect x="999.3" y="413.8" width="1" height="1" fill="#8a8a8a"/><rect x="1007.8" y="413.8" width="1" height="1" fill="#8a8a8a"/><rect x="1016.3" y="413.8" width="1" height="1" fill="#8a8a8a"/><rect x="1024.8" y="413.8" width="1" height="1" fill="#8a8a8a"/><rect x="1041.8" y="413.8" width="1" height="1" fill="#8a8a8a"/><rect x="1050.3" y="413.8" width="1" height="1" fill="#8a8a8a"/><rect x="1058.8" y="413.8" width="1" height="1" fill="#8a8a8a"/><rect x="1067.3" y="413.8" width="1" height="1" fill="#8a8a8a"/><rect x="1084.2" y="413.8" width="1" height="1" fill="#8a8a8a"/><rect x="1092.7" y="413.8" width="1" height="1" fill="#8a8a8a"/><rect x="1101.2" y="413.8" width="1" height="1" fill="#8a8a8a"/><rect x="1109.7" y="413.8" width="1" height="1" fill="#8a8a8a"/><rect x="1126.7" y="413.8" width="1" height="1" fill="#8a8a8a"/><rect x="1135.2" y="413.8" width="1" height="1" fill="#8a8a8a"/><rect x="1143.7" y="413.8" width="1" height="1" fill="#8a8a8a"/><rect x="1152.2" y="413.8" width="1" height="1" fill="#8a8a8a"/><rect x="1169.1" y="413.8" width="1" height="1" fill="#8a8a8a"/><rect x="1177.6" y="413.8" width="1" height="1" fill="#8a8a8a"/><rect x="1186.1" y="413.8" width="1" height="1" fill="#8a8a8a"/><rect x="1194.6" y="413.8" width="1" height="1" fill="#8a8a8a"/><rect x="1211.6" y="413.8" width="1" height="1" fill="#8a8a8a"/><rect x="1220.1" y="413.8" width="1" height="1" fill="#8a8a8a"/><rect x="1228.6" y="413.8" width="1" height="1" fill="#8a8a8a"/><rect x="1237.1" y="413.8" width="1" height="1" fill="#8a8a8a"/><rect x="1254.0" y="413.8" width="1" height="1" fill="#8a8a8a"/><rect x="1262.5" y="413.8" width="1" height="1" fill="#8a8a8a"/><rect x="1271.0" y="413.8" width="1" height="1" fill="#8a8a8a"/><rect x="1279.5" y="413.8" width="1" height="1" fill="#8a8a8a"/><rect x="872.0" y="426.5" width="1" height="1" fill="#8a8a8a"/><rect x="880.5" y="426.5" width="1" height="1" fill="#8a8a8a"/><rect x="889.0" y="426.5" width="1" height="1" fill="#8a8a8a"/><rect x="897.5" y="426.5" width="1" height="1" fill="#8a8a8a"/><rect x="914.4" y="426.5" width="1" height="1" fill="#8a8a8a"/><rect x="922.9" y="426.5" width="1" height="1" fill="#8a8a8a"/><rect x="931.4" y="426.5" width="1" height="1" fill="#8a8a8a"/><rect x="939.9" y="426.5" width="1" height="1" fill="#8a8a8a"/><rect x="956.9" y="426.5" width="1" height="1" fill="#8a8a8a"/><rect x="965.4" y="426.5" width="1" height="1" fill="#8a8a8a"/><rect x="973.9" y="426.5" width="1" height="1" fill="#8a8a8a"/><rect x="982.4" y="426.5" width="1" height="1" fill="#8a8a8a"/><rect x="999.3" y="426.5" width="1" height="1" fill="#8a8a8a"/><rect x="1007.8" y="426.5" width="1" height="1" fill="#8a8a8a"/><rect x="1016.3" y="426.5" width="1" height="1" fill="#8a8a8a"/><rect x="1024.8" y="426.5" width="1" height="1" fill="#8a8a8a"/><rect x="1041.8" y="426.5" width="1" height="1" fill="#8a8a8a"/><rect x="1050.3" y="426.5" width="1" height="1" fill="#8a8a8a"/><rect x="1058.8" y="426.5" width="1" height="1" fill="#8a8a8a"/><rect x="1067.3" y="426.5" width="1" height="1" fill="#8a8a8a"/><rect x="1084.2" y="426.5" width="1" height="1" fill="#8a8a8a"/><rect x="1092.7" y="426.5" width="1" height="1" fill="#8a8a8a"/><rect x="1101.2" y="426.5" width="1" height="1" fill="#8a8a8a"/><rect x="1109.7" y="426.5" width="1" height="1" fill="#8a8a8a"/><rect x="1126.7" y="426.5" width="1" height="1" fill="#8a8a8a"/><rect x="1135.2" y="426.5" width="1" height="1" fill="#8a8a8a"/><rect x="1143.7" y="426.5" width="1" height="1" fill="#8a8a8a"/><rect x="1152.2" y="426.5" width="1" height="1" fill="#8a8a8a"/><rect x="1169.1" y="426.5" width="1" height="1" fill="#8a8a8a"/><rect x="1177.6" y="426.5" width="1" height="1" fill="#8a8a8a"/><rect x="1186.1" y="426.5" width="1" height="1" fill="#8a8a8a"/><rect x="1194.6" y="426.5" width="1" height="1" fill="#8a8a8a"/><rect x="1211.6" y="426.5" width="1" height="1" fill="#8a8a8a"/><rect x="1220.1" y="426.5" width="1" height="1" fill="#8a8a8a"/><rect x="1228.6" y="426.5" width="1" height="1" fill="#8a8a8a"/><rect x="1237.1" y="426.5" width="1" height="1" fill="#8a8a8a"/><rect x="1254.0" y="426.5" width="1" height="1" fill="#8a8a8a"/><rect x="1262.5" y="426.5" width="1" height="1" fill="#8a8a8a"/><rect x="1271.0" y="426.5" width="1" height="1" fill="#8a8a8a"/><rect x="1279.5" y="426.5" width="1" height="1" fill="#8a8a8a"/><rect x="872.0" y="439.1" width="1" height="1" fill="#8a8a8a"/><rect x="880.5" y="439.1" width="1" height="1" fill="#8a8a8a"/><rect x="889.0" y="439.1" width="1" height="1" fill="#8a8a8a"/><rect x="897.5" y="439.1" width="1" height="1" fill="#8a8a8a"/><rect x="914.4" y="439.1" width="1" height="1" fill="#8a8a8a"/><rect x="922.9" y="439.1" width="1" height="1" fill="#8a8a8a"/><rect x="931.4" y="439.1" width="1" height="1" fill="#8a8a8a"/><rect x="939.9" y="439.1" width="1" height="1" fill="#8a8a8a"/><rect x="956.9" y="439.1" width="1" height="1" fill="#8a8a8a"/><rect x="965.4" y="439.1" width="1" height="1" fill="#8a8a8a"/><rect x="973.9" y="439.1" width="1" height="1" fill="#8a8a8a"/><rect x="982.4" y="439.1" width="1" height="1" fill="#8a8a8a"/><rect x="999.3" y="439.1" width="1" height="1" fill="#8a8a8a"/><rect x="1007.8" y="439.1" width="1" height="1" fill="#8a8a8a"/><rect x="1016.3" y="439.1" width="1" height="1" fill="#8a8a8a"/><rect x="1024.8" y="439.1" width="1" height="1" fill="#8a8a8a"/><rect x="1041.8" y="439.1" width="1" height="1" fill="#8a8a8a"/><rect x="1050.3" y="439.1" width="1" height="1" fill="#8a8a8a"/><rect x="1058.8" y="439.1" width="1" height="1" fill="#8a8a8a"/><rect x="1067.3" y="439.1" width="1" height="1" fill="#8a8a8a"/><rect x="1084.2" y="439.1" width="1" height="1" fill="#8a8a8a"/><rect x="1092.7" y="439.1" width="1" height="1" fill="#8a8a8a"/><rect x="1101.2" y="439.1" width="1" height="1" fill="#8a8a8a"/><rect x="1109.7" y="439.1" width="1" height="1" fill="#8a8a8a"/><rect x="1126.7" y="439.1" width="1" height="1" fill="#8a8a8a"/><rect x="1135.2" y="439.1" width="1" height="1" fill="#8a8a8a"/><rect x="1143.7" y="439.1" width="1" height="1" fill="#8a8a8a"/><rect x="1152.2" y="439.1" width="1" height="1" fill="#8a8a8a"/><rect x="1169.1" y="439.1" width="1" height="1" fill="#8a8a8a"/><rect x="1177.6" y="439.1" width="1" height="1" fill="#8a8a8a"/><rect x="1186.1" y="439.1" width="1" height="1" fill="#8a8a8a"/><rect x="1194.6" y="439.1" width="1" height="1" fill="#8a8a8a"/><rect x="1211.6" y="439.1" width="1" height="1" fill="#8a8a8a"/><rect x="1220.1" y="439.1" width="1" height="1" fill="#8a8a8a"/><rect x="1228.6" y="439.1" width="1" height="1" fill="#8a8a8a"/><rect x="1237.1" y="439.1" width="1" height="1" fill="#8a8a8a"/><rect x="1254.0" y="439.1" width="1" height="1" fill="#8a8a8a"/><rect x="1262.5" y="439.1" width="1" height="1" fill="#8a8a8a"/><rect x="1271.0" y="439.1" width="1" height="1" fill="#8a8a8a"/><rect x="1279.5" y="439.1" width="1" height="1" fill="#8a8a8a"/><rect x="872.0" y="442.3" width="1" height="1" fill="#8a8a8a"/><rect x="880.5" y="442.3" width="1" height="1" fill="#8a8a8a"/><rect x="889.0" y="442.3" width="1" height="1" fill="#8a8a8a"/><rect x="897.5" y="442.3" width="1" height="1" fill="#8a8a8a"/><rect x="914.4" y="442.3" width="1" height="1" fill="#8a8a8a"/><rect x="922.9" y="442.3" width="1" height="1" fill="#8a8a8a"/><rect x="931.4" y="442.3" width="1" height="1" fill="#8a8a8a"/><rect x="939.9" y="442.3" width="1" height="1" fill="#8a8a8a"/><rect x="956.9" y="442.3" width="1" height="1" fill="#8a8a8a"/><rect x="965.4" y="442.3" width="1" height="1" fill="#8a8a8a"/><rect x="973.9" y="442.3" width="1" height="1" fill="#8a8a8a"/><rect x="982.4" y="442.3" width="1" height="1" fill="#8a8a8a"/><rect x="999.3" y="442.3" width="1" height="1" fill="#8a8a8a"/><rect x="1007.8" y="442.3" width="1" height="1" fill="#8a8a8a"/><rect x="1016.3" y="442.3" width="1" height="1" fill="#8a8a8a"/><rect x="1024.8" y="442.3" width="1" height="1" fill="#8a8a8a"/><rect x="1041.8" y="442.3" width="1" height="1" fill="#8a8a8a"/><rect x="1050.3" y="442.3" width="1" height="1" fill="#8a8a8a"/><rect x="1058.8" y="442.3" width="1" height="1" fill="#8a8a8a"/><rect x="1067.3" y="442.3" width="1" height="1" fill="#8a8a8a"/><rect x="1084.2" y="442.3" width="1" height="1" fill="#8a8a8a"/><rect x="1092.7" y="442.3" width="1" height="1" fill="#8a8a8a"/><rect x="1101.2" y="442.3" width="1" height="1" fill="#8a8a8a"/><rect x="1109.7" y="442.3" width="1" height="1" fill="#8a8a8a"/><rect x="1126.7" y="442.3" width="1" height="1" fill="#8a8a8a"/><rect x="1135.2" y="442.3" width="1" height="1" fill="#8a8a8a"/><rect x="1143.7" y="442.3" width="1" height="1" fill="#8a8a8a"/><rect x="1152.2" y="442.3" width="1" height="1" fill="#8a8a8a"/><rect x="1169.1" y="442.3" width="1" height="1" fill="#8a8a8a"/><rect x="1177.6" y="442.3" width="1" height="1" fill="#8a8a8a"/><rect x="1186.1" y="442.3" width="1" height="1" fill="#8a8a8a"/><rect x="1194.6" y="442.3" width="1" height="1" fill="#8a8a8a"/><rect x="1211.6" y="442.3" width="1" height="1" fill="#8a8a8a"/><rect x="1220.1" y="442.3" width="1" height="1" fill="#8a8a8a"/><rect x="1228.6" y="442.3" width="1" height="1" fill="#8a8a8a"/><rect x="1237.1" y="442.3" width="1" height="1" fill="#8a8a8a"/><rect x="1254.0" y="442.3" width="1" height="1" fill="#8a8a8a"/><rect x="1262.5" y="442.3" width="1" height="1" fill="#8a8a8a"/><rect x="1271.0" y="442.3" width="1" height="1" fill="#8a8a8a"/><rect x="1279.5" y="442.3" width="1" height="1" fill="#8a8a8a"/><rect x="872.0" y="455.0" width="1" height="1" fill="#8a8a8a"/><rect x="880.5" y="455.0" width="1" height="1" fill="#8a8a8a"/><rect x="889.0" y="455.0" width="1" height="1" fill="#8a8a8a"/><rect x="897.5" y="455.0" width="1" height="1" fill="#8a8a8a"/><rect x="914.4" y="455.0" width="1" height="1" fill="#8a8a8a"/><rect x="922.9" y="455.0" width="1" height="1" fill="#8a8a8a"/><rect x="931.4" y="455.0" width="1" height="1" fill="#8a8a8a"/><rect x="939.9" y="455.0" width="1" height="1" fill="#8a8a8a"/><rect x="956.9" y="455.0" width="1" height="1" fill="#8a8a8a"/><rect x="965.4" y="455.0" width="1" height="1" fill="#8a8a8a"/><rect x="973.9" y="455.0" width="1" height="1" fill="#8a8a8a"/><rect x="982.4" y="455.0" width="1" height="1" fill="#8a8a8a"/><rect x="999.3" y="455.0" width="1" height="1" fill="#8a8a8a"/><rect x="1007.8" y="455.0" width="1" height="1" fill="#8a8a8a"/><rect x="1016.3" y="455.0" width="1" height="1" fill="#8a8a8a"/><rect x="1024.8" y="455.0" width="1" height="1" fill="#8a8a8a"/><rect x="1041.8" y="455.0" width="1" height="1" fill="#8a8a8a"/><rect x="1050.3" y="455.0" width="1" height="1" fill="#8a8a8a"/><rect x="1058.8" y="455.0" width="1" height="1" fill="#8a8a8a"/><rect x="1067.3" y="455.0" width="1" height="1" fill="#8a8a8a"/><rect x="1084.2" y="455.0" width="1" height="1" fill="#8a8a8a"/><rect x="1092.7" y="455.0" width="1" height="1" fill="#8a8a8a"/><rect x="1101.2" y="455.0" width="1" height="1" fill="#8a8a8a"/><rect x="1109.7" y="455.0" width="1" height="1" fill="#8a8a8a"/><rect x="1126.7" y="455.0" width="1" height="1" fill="#8a8a8a"/><rect x="1135.2" y="455.0" width="1" height="1" fill="#8a8a8a"/><rect x="1143.7" y="455.0" width="1" height="1" fill="#8a8a8a"/><rect x="1152.2" y="455.0" width="1" height="1" fill="#8a8a8a"/><rect x="1169.1" y="455.0" width="1" height="1" fill="#8a8a8a"/><rect x="1177.6" y="455.0" width="1" height="1" fill="#8a8a8a"/><rect x="1186.1" y="455.0" width="1" height="1" fill="#8a8a8a"/><rect x="1194.6" y="455.0" width="1" height="1" fill="#8a8a8a"/><rect x="1211.6" y="455.0" width="1" height="1" fill="#8a8a8a"/><rect x="1220.1" y="455.0" width="1" height="1" fill="#8a8a8a"/><rect x="1228.6" y="455.0" width="1" height="1" fill="#8a8a8a"/><rect x="1237.1" y="455.0" width="1" height="1" fill="#8a8a8a"/><rect x="1254.0" y="455.0" width="1" height="1" fill="#8a8a8a"/><rect x="1262.5" y="455.0" width="1" height="1" fill="#8a8a8a"/><rect x="1271.0" y="455.0" width="1" height="1" fill="#8a8a8a"/><rect x="1279.5" y="455.0" width="1" height="1" fill="#8a8a8a"/><rect x="872.0" y="467.7" width="1" height="1" fill="#8a8a8a"/><rect x="880.5" y="467.7" width="1" height="1" fill="#8a8a8a"/><rect x="889.0" y="467.7" width="1" height="1" fill="#8a8a8a"/><rect x="897.5" y="467.7" width="1" height="1" fill="#8a8a8a"/><rect x="914.4" y="467.7" width="1" height="1" fill="#8a8a8a"/><rect x="922.9" y="467.7" width="1" height="1" fill="#8a8a8a"/><rect x="931.4" y="467.7" width="1" height="1" fill="#8a8a8a"/><rect x="939.9" y="467.7" width="1" height="1" fill="#8a8a8a"/><rect x="956.9" y="467.7" width="1" height="1" fill="#8a8a8a"/><rect x="965.4" y="467.7" width="1" height="1" fill="#8a8a8a"/><rect x="973.9" y="467.7" width="1" height="1" fill="#8a8a8a"/><rect x="982.4" y="467.7" width="1" height="1" fill="#8a8a8a"/><rect x="999.3" y="467.7" width="1" height="1" fill="#8a8a8a"/><rect x="1007.8" y="467.7" width="1" height="1" fill="#8a8a8a"/><rect x="1016.3" y="467.7" width="1" height="1" fill="#8a8a8a"/><rect x="1024.8" y="467.7" width="1" height="1" fill="#8a8a8a"/><rect x="1041.8" y="467.7" width="1" height="1" fill="#8a8a8a"/><rect x="1050.3" y="467.7" width="1" height="1" fill="#8a8a8a"/><rect x="1058.8" y="467.7" width="1" height="1" fill="#8a8a8a"/><rect x="1067.3" y="467.7" width="1" height="1" fill="#8a8a8a"/><rect x="1084.2" y="467.7" width="1" height="1" fill="#8a8a8a"/><rect x="1092.7" y="467.7" width="1" height="1" fill="#8a8a8a"/><rect x="1101.2" y="467.7" width="1" height="1" fill="#8a8a8a"/><rect x="1109.7" y="467.7" width="1" height="1" fill="#8a8a8a"/><rect x="1126.7" y="467.7" width="1" height="1" fill="#8a8a8a"/><rect x="1135.2" y="467.7" width="1" height="1" fill="#8a8a8a"/><rect x="1143.7" y="467.7" width="1" height="1" fill="#8a8a8a"/><rect x="1152.2" y="467.7" width="1" height="1" fill="#8a8a8a"/><rect x="1169.1" y="467.7" width="1" height="1" fill="#8a8a8a"/><rect x="1177.6" y="467.7" width="1" height="1" fill="#8a8a8a"/><rect x="1186.1" y="467.7" width="1" height="1" fill="#8a8a8a"/><rect x="1194.6" y="467.7" width="1" height="1" fill="#8a8a8a"/><rect x="1211.6" y="467.7" width="1" height="1" fill="#8a8a8a"/><rect x="1220.1" y="467.7" width="1" height="1" fill="#8a8a8a"/><rect x="1228.6" y="467.7" width="1" height="1" fill="#8a8a8a"/><rect x="1237.1" y="467.7" width="1" height="1" fill="#8a8a8a"/><rect x="1254.0" y="467.7" width="1" height="1" fill="#8a8a8a"/><rect x="1262.5" y="467.7" width="1" height="1" fill="#8a8a8a"/><rect x="1271.0" y="467.7" width="1" height="1" fill="#8a8a8a"/><rect x="1279.5" y="467.7" width="1" height="1" fill="#8a8a8a"/><rect x="872.0" y="480.3" width="1" height="1" fill="#8a8a8a"/><rect x="880.5" y="480.3" width="1" height="1" fill="#8a8a8a"/><rect x="889.0" y="480.3" width="1" height="1" fill="#8a8a8a"/><rect x="897.5" y="480.3" width="1" height="1" fill="#8a8a8a"/><rect x="914.4" y="480.3" width="1" height="1" fill="#8a8a8a"/><rect x="922.9" y="480.3" width="1" height="1" fill="#8a8a8a"/><rect x="931.4" y="480.3" width="1" height="1" fill="#8a8a8a"/><rect x="939.9" y="480.3" width="1" height="1" fill="#8a8a8a"/><rect x="956.9" y="480.3" width="1" height="1" fill="#8a8a8a"/><rect x="965.4" y="480.3" width="1" height="1" fill="#8a8a8a"/><rect x="973.9" y="480.3" width="1" height="1" fill="#8a8a8a"/><rect x="982.4" y="480.3" width="1" height="1" fill="#8a8a8a"/><rect x="999.3" y="480.3" width="1" height="1" fill="#8a8a8a"/><rect x="1007.8" y="480.3" width="1" height="1" fill="#8a8a8a"/><rect x="1016.3" y="480.3" width="1" height="1" fill="#8a8a8a"/><rect x="1024.8" y="480.3" width="1" height="1" fill="#8a8a8a"/><rect x="1041.8" y="480.3" width="1" height="1" fill="#8a8a8a"/><rect x="1050.3" y="480.3" width="1" height="1" fill="#8a8a8a"/><rect x="1058.8" y="480.3" width="1" height="1" fill="#8a8a8a"/><rect x="1067.3" y="480.3" width="1" height="1" fill="#8a8a8a"/><rect x="1084.2" y="480.3" width="1" height="1" fill="#8a8a8a"/><rect x="1092.7" y="480.3" width="1" height="1" fill="#8a8a8a"/><rect x="1101.2" y="480.3" width="1" height="1" fill="#8a8a8a"/><rect x="1109.7" y="480.3" width="1" height="1" fill="#8a8a8a"/><rect x="1126.7" y="480.3" width="1" height="1" fill="#8a8a8a"/><rect x="1135.2" y="480.3" width="1" height="1" fill="#8a8a8a"/><rect x="1143.7" y="480.3" width="1" height="1" fill="#8a8a8a"/><rect x="1152.2" y="480.3" width="1" height="1" fill="#8a8a8a"/><rect x="1169.1" y="480.3" width="1" height="1" fill="#8a8a8a"/><rect x="1177.6" y="480.3" width="1" height="1" fill="#8a8a8a"/><rect x="1186.1" y="480.3" width="1" height="1" fill="#8a8a8a"/><rect x="1194.6" y="480.3" width="1" height="1" fill="#8a8a8a"/><rect x="1211.6" y="480.3" width="1" height="1" fill="#8a8a8a"/><rect x="1220.1" y="480.3" width="1" height="1" fill="#8a8a8a"/><rect x="1228.6" y="480.3" width="1" height="1" fill="#8a8a8a"/><rect x="1237.1" y="480.3" width="1" height="1" fill="#8a8a8a"/><rect x="1254.0" y="480.3" width="1" height="1" fill="#8a8a8a"/><rect x="1262.5" y="480.3" width="1" height="1" fill="#8a8a8a"/><rect x="1271.0" y="480.3" width="1" height="1" fill="#8a8a8a"/><rect x="1279.5" y="480.3" width="1" height="1" fill="#8a8a8a"/><rect x="872.0" y="493.0" width="1" height="1" fill="#8a8a8a"/><rect x="880.5" y="493.0" width="1" height="1" fill="#8a8a8a"/><rect x="889.0" y="493.0" width="1" height="1" fill="#8a8a8a"/><rect x="897.5" y="493.0" width="1" height="1" fill="#8a8a8a"/><rect x="914.4" y="493.0" width="1" height="1" fill="#8a8a8a"/><rect x="922.9" y="493.0" width="1" height="1" fill="#8a8a8a"/><rect x="931.4" y="493.0" width="1" height="1" fill="#8a8a8a"/><rect x="939.9" y="493.0" width="1" height="1" fill="#8a8a8a"/><rect x="956.9" y="493.0" width="1" height="1" fill="#8a8a8a"/><rect x="965.4" y="493.0" width="1" height="1" fill="#8a8a8a"/><rect x="973.9" y="493.0" width="1" height="1" fill="#8a8a8a"/><rect x="982.4" y="493.0" width="1" height="1" fill="#8a8a8a"/><rect x="999.3" y="493.0" width="1" height="1" fill="#8a8a8a"/><rect x="1007.8" y="493.0" width="1" height="1" fill="#8a8a8a"/><rect x="1016.3" y="493.0" width="1" height="1" fill="#8a8a8a"/><rect x="1024.8" y="493.0" width="1" height="1" fill="#8a8a8a"/><rect x="1041.8" y="493.0" width="1" height="1" fill="#8a8a8a"/><rect x="1050.3" y="493.0" width="1" height="1" fill="#8a8a8a"/><rect x="1058.8" y="493.0" width="1" height="1" fill="#8a8a8a"/><rect x="1067.3" y="493.0" width="1" height="1" fill="#8a8a8a"/><rect x="1084.2" y="493.0" width="1" height="1" fill="#8a8a8a"/><rect x="1092.7" y="493.0" width="1" height="1" fill="#8a8a8a"/><rect x="1101.2" y="493.0" width="1" height="1" fill="#8a8a8a"/><rect x="1109.7" y="493.0" width="1" height="1" fill="#8a8a8a"/><rect x="1126.7" y="493.0" width="1" height="1" fill="#8a8a8a"/><rect x="1135.2" y="493.0" width="1" height="1" fill="#8a8a8a"/><rect x="1143.7" y="493.0" width="1" height="1" fill="#8a8a8a"/><rect x="1152.2" y="493.0" width="1" height="1" fill="#8a8a8a"/><rect x="1169.1" y="493.0" width="1" height="1" fill="#8a8a8a"/><rect x="1177.6" y="493.0" width="1" height="1" fill="#8a8a8a"/><rect x="1186.1" y="493.0" width="1" height="1" fill="#8a8a8a"/><rect x="1194.6" y="493.0" width="1" height="1" fill="#8a8a8a"/><rect x="1211.6" y="493.0" width="1" height="1" fill="#8a8a8a"/><rect x="1220.1" y="493.0" width="1" height="1" fill="#8a8a8a"/><rect x="1228.6" y="493.0" width="1" height="1" fill="#8a8a8a"/><rect x="1237.1" y="493.0" width="1" height="1" fill="#8a8a8a"/><rect x="1254.0" y="493.0" width="1" height="1" fill="#8a8a8a"/><rect x="1262.5" y="493.0" width="1" height="1" fill="#8a8a8a"/><rect x="1271.0" y="493.0" width="1" height="1" fill="#8a8a8a"/><rect x="1279.5" y="493.0" width="1" height="1" fill="#8a8a8a"/><rect x="872.0" y="505.7" width="1" height="1" fill="#8a8a8a"/><rect x="880.5" y="505.7" width="1" height="1" fill="#8a8a8a"/><rect x="889.0" y="505.7" width="1" height="1" fill="#8a8a8a"/><rect x="897.5" y="505.7" width="1" height="1" fill="#8a8a8a"/><rect x="914.4" y="505.7" width="1" height="1" fill="#8a8a8a"/><rect x="922.9" y="505.7" width="1" height="1" fill="#8a8a8a"/><rect x="931.4" y="505.7" width="1" height="1" fill="#8a8a8a"/><rect x="939.9" y="505.7" width="1" height="1" fill="#8a8a8a"/><rect x="956.9" y="505.7" width="1" height="1" fill="#8a8a8a"/><rect x="965.4" y="505.7" width="1" height="1" fill="#8a8a8a"/><rect x="973.9" y="505.7" width="1" height="1" fill="#8a8a8a"/><rect x="982.4" y="505.7" width="1" height="1" fill="#8a8a8a"/><rect x="999.3" y="505.7" width="1" height="1" fill="#8a8a8a"/><rect x="1007.8" y="505.7" width="1" height="1" fill="#8a8a8a"/><rect x="1016.3" y="505.7" width="1" height="1" fill="#8a8a8a"/><rect x="1024.8" y="505.7" width="1" height="1" fill="#8a8a8a"/><rect x="1041.8" y="505.7" width="1" height="1" fill="#8a8a8a"/><rect x="1050.3" y="505.7" width="1" height="1" fill="#8a8a8a"/><rect x="1058.8" y="505.7" width="1" height="1" fill="#8a8a8a"/><rect x="1067.3" y="505.7" width="1" height="1" fill="#8a8a8a"/><rect x="1084.2" y="505.7" width="1" height="1" fill="#8a8a8a"/><rect x="1092.7" y="505.7" width="1" height="1" fill="#8a8a8a"/><rect x="1101.2" y="505.7" width="1" height="1" fill="#8a8a8a"/><rect x="1109.7" y="505.7" width="1" height="1" fill="#8a8a8a"/><rect x="1126.7" y="505.7" width="1" height="1" fill="#8a8a8a"/><rect x="1135.2" y="505.7" width="1" height="1" fill="#8a8a8a"/><rect x="1143.7" y="505.7" width="1" height="1" fill="#8a8a8a"/><rect x="1152.2" y="505.7" width="1" height="1" fill="#8a8a8a"/><rect x="1169.1" y="505.7" width="1" height="1" fill="#8a8a8a"/><rect x="1177.6" y="505.7" width="1" height="1" fill="#8a8a8a"/><rect x="1186.1" y="505.7" width="1" height="1" fill="#8a8a8a"/><rect x="1194.6" y="505.7" width="1" height="1" fill="#8a8a8a"/><rect x="1211.6" y="505.7" width="1" height="1" fill="#8a8a8a"/><rect x="1220.1" y="505.7" width="1" height="1" fill="#8a8a8a"/><rect x="1228.6" y="505.7" width="1" height="1" fill="#8a8a8a"/><rect x="1237.1" y="505.7" width="1" height="1" fill="#8a8a8a"/><rect x="1254.0" y="505.7" width="1" height="1" fill="#8a8a8a"/><rect x="1262.5" y="505.7" width="1" height="1" fill="#8a8a8a"/><rect x="1271.0" y="505.7" width="1" height="1" fill="#8a8a8a"/><rect x="1279.5" y="505.7" width="1" height="1" fill="#8a8a8a"/><rect x="872.0" y="518.4" width="1" height="1" fill="#8a8a8a"/><rect x="880.5" y="518.4" width="1" height="1" fill="#8a8a8a"/><rect x="889.0" y="518.4" width="1" height="1" fill="#8a8a8a"/><rect x="897.5" y="518.4" width="1" height="1" fill="#8a8a8a"/><rect x="914.4" y="518.4" width="1" height="1" fill="#8a8a8a"/><rect x="922.9" y="518.4" width="1" height="1" fill="#8a8a8a"/><rect x="931.4" y="518.4" width="1" height="1" fill="#8a8a8a"/><rect x="939.9" y="518.4" width="1" height="1" fill="#8a8a8a"/><rect x="956.9" y="518.4" width="1" height="1" fill="#8a8a8a"/><rect x="965.4" y="518.4" width="1" height="1" fill="#8a8a8a"/><rect x="973.9" y="518.4" width="1" height="1" fill="#8a8a8a"/><rect x="982.4" y="518.4" width="1" height="1" fill="#8a8a8a"/><rect x="999.3" y="518.4" width="1" height="1" fill="#8a8a8a"/><rect x="1007.8" y="518.4" width="1" height="1" fill="#8a8a8a"/><rect x="1016.3" y="518.4" width="1" height="1" fill="#8a8a8a"/><rect x="1024.8" y="518.4" width="1" height="1" fill="#8a8a8a"/><rect x="1041.8" y="518.4" width="1" height="1" fill="#8a8a8a"/><rect x="1050.3" y="518.4" width="1" height="1" fill="#8a8a8a"/><rect x="1058.8" y="518.4" width="1" height="1" fill="#8a8a8a"/><rect x="1067.3" y="518.4" width="1" height="1" fill="#8a8a8a"/><rect x="1084.2" y="518.4" width="1" height="1" fill="#8a8a8a"/><rect x="1092.7" y="518.4" width="1" height="1" fill="#8a8a8a"/><rect x="1101.2" y="518.4" width="1" height="1" fill="#8a8a8a"/><rect x="1109.7" y="518.4" width="1" height="1" fill="#8a8a8a"/><rect x="1126.7" y="518.4" width="1" height="1" fill="#8a8a8a"/><rect x="1135.2" y="518.4" width="1" height="1" fill="#8a8a8a"/><rect x="1143.7" y="518.4" width="1" height="1" fill="#8a8a8a"/><rect x="1152.2" y="518.4" width="1" height="1" fill="#8a8a8a"/><rect x="1169.1" y="518.4" width="1" height="1" fill="#8a8a8a"/><rect x="1177.6" y="518.4" width="1" height="1" fill="#8a8a8a"/><rect x="1186.1" y="518.4" width="1" height="1" fill="#8a8a8a"/><rect x="1194.6" y="518.4" width="1" height="1" fill="#8a8a8a"/><rect x="1211.6" y="518.4" width="1" height="1" fill="#8a8a8a"/><rect x="1220.1" y="518.4" width="1" height="1" fill="#8a8a8a"/><rect x="1228.6" y="518.4" width="1" height="1" fill="#8a8a8a"/><rect x="1237.1" y="518.4" width="1" height="1" fill="#8a8a8a"/><rect x="1254.0" y="518.4" width="1" height="1" fill="#8a8a8a"/><rect x="1262.5" y="518.4" width="1" height="1" fill="#8a8a8a"/><rect x="1271.0" y="518.4" width="1" height="1" fill="#8a8a8a"/><rect x="1279.5" y="518.4" width="1" height="1" fill="#8a8a8a"/><rect x="872.0" y="531.1" width="1" height="1" fill="#8a8a8a"/><rect x="880.5" y="531.1" width="1" height="1" fill="#8a8a8a"/><rect x="889.0" y="531.1" width="1" height="1" fill="#8a8a8a"/><rect x="897.5" y="531.1" width="1" height="1" fill="#8a8a8a"/><rect x="914.4" y="531.1" width="1" height="1" fill="#8a8a8a"/><rect x="922.9" y="531.1" width="1" height="1" fill="#8a8a8a"/><rect x="931.4" y="531.1" width="1" height="1" fill="#8a8a8a"/><rect x="939.9" y="531.1" width="1" height="1" fill="#8a8a8a"/><rect x="956.9" y="531.1" width="1" height="1" fill="#8a8a8a"/><rect x="965.4" y="531.1" width="1" height="1" fill="#8a8a8a"/><rect x="973.9" y="531.1" width="1" height="1" fill="#8a8a8a"/><rect x="982.4" y="531.1" width="1" height="1" fill="#8a8a8a"/><rect x="999.3" y="531.1" width="1" height="1" fill="#8a8a8a"/><rect x="1007.8" y="531.1" width="1" height="1" fill="#8a8a8a"/><rect x="1016.3" y="531.1" width="1" height="1" fill="#8a8a8a"/><rect x="1024.8" y="531.1" width="1" height="1" fill="#8a8a8a"/><rect x="1041.8" y="531.1" width="1" height="1" fill="#8a8a8a"/><rect x="1050.3" y="531.1" width="1" height="1" fill="#8a8a8a"/><rect x="1058.8" y="531.1" width="1" height="1" fill="#8a8a8a"/><rect x="1067.3" y="531.1" width="1" height="1" fill="#8a8a8a"/><rect x="1084.2" y="531.1" width="1" height="1" fill="#8a8a8a"/><rect x="1092.7" y="531.1" width="1" height="1" fill="#8a8a8a"/><rect x="1101.2" y="531.1" width="1" height="1" fill="#8a8a8a"/><rect x="1109.7" y="531.1" width="1" height="1" fill="#8a8a8a"/><rect x="1126.7" y="531.1" width="1" height="1" fill="#8a8a8a"/><rect x="1135.2" y="531.1" width="1" height="1" fill="#8a8a8a"/><rect x="1143.7" y="531.1" width="1" height="1" fill="#8a8a8a"/><rect x="1152.2" y="531.1" width="1" height="1" fill="#8a8a8a"/><rect x="1169.1" y="531.1" width="1" height="1" fill="#8a8a8a"/><rect x="1177.6" y="531.1" width="1" height="1" fill="#8a8a8a"/><rect x="1186.1" y="531.1" width="1" height="1" fill="#8a8a8a"/><rect x="1194.6" y="531.1" width="1" height="1" fill="#8a8a8a"/><rect x="1211.6" y="531.1" width="1" height="1" fill="#8a8a8a"/><rect x="1220.1" y="531.1" width="1" height="1" fill="#8a8a8a"/><rect x="1228.6" y="531.1" width="1" height="1" fill="#8a8a8a"/><rect x="1237.1" y="531.1" width="1" height="1" fill="#8a8a8a"/><rect x="1254.0" y="531.1" width="1" height="1" fill="#8a8a8a"/><rect x="1262.5" y="531.1" width="1" height="1" fill="#8a8a8a"/><rect x="1271.0" y="531.1" width="1" height="1" fill="#8a8a8a"/><rect x="1279.5" y="531.1" width="1" height="1" fill="#8a8a8a"/><rect x="872.0" y="543.7" width="1" height="1" fill="#8a8a8a"/><rect x="880.5" y="543.7" width="1" height="1" fill="#8a8a8a"/><rect x="889.0" y="543.7" width="1" height="1" fill="#8a8a8a"/><rect x="897.5" y="543.7" width="1" height="1" fill="#8a8a8a"/><rect x="914.4" y="543.7" width="1" height="1" fill="#8a8a8a"/><rect x="922.9" y="543.7" width="1" height="1" fill="#8a8a8a"/><rect x="931.4" y="543.7" width="1" height="1" fill="#8a8a8a"/><rect x="939.9" y="543.7" width="1" height="1" fill="#8a8a8a"/><rect x="956.9" y="543.7" width="1" height="1" fill="#8a8a8a"/><rect x="965.4" y="543.7" width="1" height="1" fill="#8a8a8a"/><rect x="973.9" y="543.7" width="1" height="1" fill="#8a8a8a"/><rect x="982.4" y="543.7" width="1" height="1" fill="#8a8a8a"/><rect x="999.3" y="543.7" width="1" height="1" fill="#8a8a8a"/><rect x="1007.8" y="543.7" width="1" height="1" fill="#8a8a8a"/><rect x="1016.3" y="543.7" width="1" height="1" fill="#8a8a8a"/><rect x="1024.8" y="543.7" width="1" height="1" fill="#8a8a8a"/><rect x="1041.8" y="543.7" width="1" height="1" fill="#8a8a8a"/><rect x="1050.3" y="543.7" width="1" height="1" fill="#8a8a8a"/><rect x="1058.8" y="543.7" width="1" height="1" fill="#8a8a8a"/><rect x="1067.3" y="543.7" width="1" height="1" fill="#8a8a8a"/><rect x="1084.2" y="543.7" width="1" height="1" fill="#8a8a8a"/><rect x="1092.7" y="543.7" width="1" height="1" fill="#8a8a8a"/><rect x="1101.2" y="543.7" width="1" height="1" fill="#8a8a8a"/><rect x="1109.7" y="543.7" width="1" height="1" fill="#8a8a8a"/><rect x="1126.7" y="543.7" width="1" height="1" fill="#8a8a8a"/><rect x="1135.2" y="543.7" width="1" height="1" fill="#8a8a8a"/><rect x="1143.7" y="543.7" width="1" height="1" fill="#8a8a8a"/><rect x="1152.2" y="543.7" width="1" height="1" fill="#8a8a8a"/><rect x="1169.1" y="543.7" width="1" height="1" fill="#8a8a8a"/><rect x="1177.6" y="543.7" width="1" height="1" fill="#8a8a8a"/><rect x="1186.1" y="543.7" width="1" height="1" fill="#8a8a8a"/><rect x="1194.6" y="543.7" width="1" height="1" fill="#8a8a8a"/><rect x="1211.6" y="543.7" width="1" height="1" fill="#8a8a8a"/><rect x="1220.1" y="543.7" width="1" height="1" fill="#8a8a8a"/><rect x="1228.6" y="543.7" width="1" height="1" fill="#8a8a8a"/><rect x="1237.1" y="543.7" width="1" height="1" fill="#8a8a8a"/><rect x="1254.0" y="543.7" width="1" height="1" fill="#8a8a8a"/><rect x="1262.5" y="543.7" width="1" height="1" fill="#8a8a8a"/><rect x="1271.0" y="543.7" width="1" height="1" fill="#8a8a8a"/><rect x="1279.5" y="543.7" width="1" height="1" fill="#8a8a8a"/><rect x="872.0" y="556.4" width="1" height="1" fill="#8a8a8a"/><rect x="880.5" y="556.4" width="1" height="1" fill="#8a8a8a"/><rect x="889.0" y="556.4" width="1" height="1" fill="#8a8a8a"/><rect x="897.5" y="556.4" width="1" height="1" fill="#8a8a8a"/><rect x="914.4" y="556.4" width="1" height="1" fill="#8a8a8a"/><rect x="922.9" y="556.4" width="1" height="1" fill="#8a8a8a"/><rect x="931.4" y="556.4" width="1" height="1" fill="#8a8a8a"/><rect x="939.9" y="556.4" width="1" height="1" fill="#8a8a8a"/><rect x="956.9" y="556.4" width="1" height="1" fill="#8a8a8a"/><rect x="965.4" y="556.4" width="1" height="1" fill="#8a8a8a"/><rect x="973.9" y="556.4" width="1" height="1" fill="#8a8a8a"/><rect x="982.4" y="556.4" width="1" height="1" fill="#8a8a8a"/><rect x="999.3" y="556.4" width="1" height="1" fill="#8a8a8a"/><rect x="1007.8" y="556.4" width="1" height="1" fill="#8a8a8a"/><rect x="1016.3" y="556.4" width="1" height="1" fill="#8a8a8a"/><rect x="1024.8" y="556.4" width="1" height="1" fill="#8a8a8a"/><rect x="1041.8" y="556.4" width="1" height="1" fill="#8a8a8a"/><rect x="1050.3" y="556.4" width="1" height="1" fill="#8a8a8a"/><rect x="1058.8" y="556.4" width="1" height="1" fill="#8a8a8a"/><rect x="1067.3" y="556.4" width="1" height="1" fill="#8a8a8a"/><rect x="1084.2" y="556.4" width="1" height="1" fill="#8a8a8a"/><rect x="1092.7" y="556.4" width="1" height="1" fill="#8a8a8a"/><rect x="1101.2" y="556.4" width="1" height="1" fill="#8a8a8a"/><rect x="1109.7" y="556.4" width="1" height="1" fill="#8a8a8a"/><rect x="1126.7" y="556.4" width="1" height="1" fill="#8a8a8a"/><rect x="1135.2" y="556.4" width="1" height="1" fill="#8a8a8a"/><rect x="1143.7" y="556.4" width="1" height="1" fill="#8a8a8a"/><rect x="1152.2" y="556.4" width="1" height="1" fill="#8a8a8a"/><rect x="1169.1" y="556.4" width="1" height="1" fill="#8a8a8a"/><rect x="1177.6" y="556.4" width="1" height="1" fill="#8a8a8a"/><rect x="1186.1" y="556.4" width="1" height="1" fill="#8a8a8a"/><rect x="1194.6" y="556.4" width="1" height="1" fill="#8a8a8a"/><rect x="1211.6" y="556.4" width="1" height="1" fill="#8a8a8a"/><rect x="1220.1" y="556.4" width="1" height="1" fill="#8a8a8a"/><rect x="1228.6" y="556.4" width="1" height="1" fill="#8a8a8a"/><rect x="1237.1" y="556.4" width="1" height="1" fill="#8a8a8a"/><rect x="1254.0" y="556.4" width="1" height="1" fill="#8a8a8a"/><rect x="1262.5" y="556.4" width="1" height="1" fill="#8a8a8a"/><rect x="1271.0" y="556.4" width="1" height="1" fill="#8a8a8a"/><rect x="1279.5" y="556.4" width="1" height="1" fill="#8a8a8a"/><rect x="872.0" y="581.2" width="1" height="1" fill="#8a8a8a"/><rect x="880.5" y="581.2" width="1" height="1" fill="#8a8a8a"/><rect x="889.0" y="581.2" width="1" height="1" fill="#8a8a8a"/><rect x="897.5" y="581.2" width="1" height="1" fill="#8a8a8a"/><rect x="914.4" y="581.2" width="1" height="1" fill="#8a8a8a"/><rect x="922.9" y="581.2" width="1" height="1" fill="#8a8a8a"/><rect x="931.4" y="581.2" width="1" height="1" fill="#8a8a8a"/><rect x="939.9" y="581.2" width="1" height="1" fill="#8a8a8a"/><rect x="956.9" y="581.2" width="1" height="1" fill="#8a8a8a"/><rect x="965.4" y="581.2" width="1" height="1" fill="#8a8a8a"/><rect x="973.9" y="581.2" width="1" height="1" fill="#8a8a8a"/><rect x="982.4" y="581.2" width="1" height="1" fill="#8a8a8a"/><rect x="999.3" y="581.2" width="1" height="1" fill="#8a8a8a"/><rect x="1007.8" y="581.2" width="1" height="1" fill="#8a8a8a"/><rect x="1016.3" y="581.2" width="1" height="1" fill="#8a8a8a"/><rect x="1024.8" y="581.2" width="1" height="1" fill="#8a8a8a"/><rect x="1041.8" y="581.2" width="1" height="1" fill="#8a8a8a"/><rect x="1050.3" y="581.2" width="1" height="1" fill="#8a8a8a"/><rect x="1058.8" y="581.2" width="1" height="1" fill="#8a8a8a"/><rect x="1067.3" y="581.2" width="1" height="1" fill="#8a8a8a"/><rect x="1084.2" y="581.2" width="1" height="1" fill="#8a8a8a"/><rect x="1092.7" y="581.2" width="1" height="1" fill="#8a8a8a"/><rect x="1101.2" y="581.2" width="1" height="1" fill="#8a8a8a"/><rect x="1109.7" y="581.2" width="1" height="1" fill="#8a8a8a"/><rect x="1126.7" y="581.2" width="1" height="1" fill="#8a8a8a"/><rect x="1135.2" y="581.2" width="1" height="1" fill="#8a8a8a"/><rect x="1143.7" y="581.2" width="1" height="1" fill="#8a8a8a"/><rect x="1152.2" y="581.2" width="1" height="1" fill="#8a8a8a"/><rect x="1169.1" y="581.2" width="1" height="1" fill="#8a8a8a"/><rect x="1177.6" y="581.2" width="1" height="1" fill="#8a8a8a"/><rect x="1186.1" y="581.2" width="1" height="1" fill="#8a8a8a"/><rect x="1194.6" y="581.2" width="1" height="1" fill="#8a8a8a"/><rect x="1211.6" y="581.2" width="1" height="1" fill="#8a8a8a"/><rect x="1220.1" y="581.2" width="1" height="1" fill="#8a8a8a"/><rect x="1228.6" y="581.2" width="1" height="1" fill="#8a8a8a"/><rect x="1237.1" y="581.2" width="1" height="1" fill="#8a8a8a"/><rect x="1254.0" y="581.2" width="1" height="1" fill="#8a8a8a"/><rect x="1262.5" y="581.2" width="1" height="1" fill="#8a8a8a"/><rect x="1271.0" y="581.2" width="1" height="1" fill="#8a8a8a"/><rect x="1279.5" y="581.2" width="1" height="1" fill="#8a8a8a"/><rect x="872.0" y="593.9" width="1" height="1" fill="#8a8a8a"/><rect x="880.5" y="593.9" width="1" height="1" fill="#8a8a8a"/><rect x="889.0" y="593.9" width="1" height="1" fill="#8a8a8a"/><rect x="897.5" y="593.9" width="1" height="1" fill="#8a8a8a"/><rect x="914.4" y="593.9" width="1" height="1" fill="#8a8a8a"/><rect x="922.9" y="593.9" width="1" height="1" fill="#8a8a8a"/><rect x="931.4" y="593.9" width="1" height="1" fill="#8a8a8a"/><rect x="939.9" y="593.9" width="1" height="1" fill="#8a8a8a"/><rect x="956.9" y="593.9" width="1" height="1" fill="#8a8a8a"/><rect x="965.4" y="593.9" width="1" height="1" fill="#8a8a8a"/><rect x="973.9" y="593.9" width="1" height="1" fill="#8a8a8a"/><rect x="982.4" y="593.9" width="1" height="1" fill="#8a8a8a"/><rect x="999.3" y="593.9" width="1" height="1" fill="#8a8a8a"/><rect x="1007.8" y="593.9" width="1" height="1" fill="#8a8a8a"/><rect x="1016.3" y="593.9" width="1" height="1" fill="#8a8a8a"/><rect x="1024.8" y="593.9" width="1" height="1" fill="#8a8a8a"/><rect x="1041.8" y="593.9" width="1" height="1" fill="#8a8a8a"/><rect x="1050.3" y="593.9" width="1" height="1" fill="#8a8a8a"/><rect x="1058.8" y="593.9" width="1" height="1" fill="#8a8a8a"/><rect x="1067.3" y="593.9" width="1" height="1" fill="#8a8a8a"/><rect x="1084.2" y="593.9" width="1" height="1" fill="#8a8a8a"/><rect x="1092.7" y="593.9" width="1" height="1" fill="#8a8a8a"/><rect x="1101.2" y="593.9" width="1" height="1" fill="#8a8a8a"/><rect x="1109.7" y="593.9" width="1" height="1" fill="#8a8a8a"/><rect x="1126.7" y="593.9" width="1" height="1" fill="#8a8a8a"/><rect x="1135.2" y="593.9" width="1" height="1" fill="#8a8a8a"/><rect x="1143.7" y="593.9" width="1" height="1" fill="#8a8a8a"/><rect x="1152.2" y="593.9" width="1" height="1" fill="#8a8a8a"/><rect x="1169.1" y="593.9" width="1" height="1" fill="#8a8a8a"/><rect x="1177.6" y="593.9" width="1" height="1" fill="#8a8a8a"/><rect x="1186.1" y="593.9" width="1" height="1" fill="#8a8a8a"/><rect x="1194.6" y="593.9" width="1" height="1" fill="#8a8a8a"/><rect x="1211.6" y="593.9" width="1" height="1" fill="#8a8a8a"/><rect x="1220.1" y="593.9" width="1" height="1" fill="#8a8a8a"/><rect x="1228.6" y="593.9" width="1" height="1" fill="#8a8a8a"/><rect x="1237.1" y="593.9" width="1" height="1" fill="#8a8a8a"/><rect x="1254.0" y="593.9" width="1" height="1" fill="#8a8a8a"/><rect x="1262.5" y="593.9" width="1" height="1" fill="#8a8a8a"/><rect x="1271.0" y="593.9" width="1" height="1" fill="#8a8a8a"/><rect x="1279.5" y="593.9" width="1" height="1" fill="#8a8a8a"/><rect x="872.0" y="606.5" width="1" height="1" fill="#8a8a8a"/><rect x="880.5" y="606.5" width="1" height="1" fill="#8a8a8a"/><rect x="889.0" y="606.5" width="1" height="1" fill="#8a8a8a"/><rect x="897.5" y="606.5" width="1" height="1" fill="#8a8a8a"/><rect x="914.4" y="606.5" width="1" height="1" fill="#8a8a8a"/><rect x="922.9" y="606.5" width="1" height="1" fill="#8a8a8a"/><rect x="931.4" y="606.5" width="1" height="1" fill="#8a8a8a"/><rect x="939.9" y="606.5" width="1" height="1" fill="#8a8a8a"/><rect x="956.9" y="606.5" width="1" height="1" fill="#8a8a8a"/><rect x="965.4" y="606.5" width="1" height="1" fill="#8a8a8a"/><rect x="973.9" y="606.5" width="1" height="1" fill="#8a8a8a"/><rect x="982.4" y="606.5" width="1" height="1" fill="#8a8a8a"/><rect x="999.3" y="606.5" width="1" height="1" fill="#8a8a8a"/><rect x="1007.8" y="606.5" width="1" height="1" fill="#8a8a8a"/><rect x="1016.3" y="606.5" width="1" height="1" fill="#8a8a8a"/><rect x="1024.8" y="606.5" width="1" height="1" fill="#8a8a8a"/><rect x="1041.8" y="606.5" width="1" height="1" fill="#8a8a8a"/><rect x="1050.3" y="606.5" width="1" height="1" fill="#8a8a8a"/><rect x="1058.8" y="606.5" width="1" height="1" fill="#8a8a8a"/><rect x="1067.3" y="606.5" width="1" height="1" fill="#8a8a8a"/><rect x="1084.2" y="606.5" width="1" height="1" fill="#8a8a8a"/><rect x="1092.7" y="606.5" width="1" height="1" fill="#8a8a8a"/><rect x="1101.2" y="606.5" width="1" height="1" fill="#8a8a8a"/><rect x="1109.7" y="606.5" width="1" height="1" fill="#8a8a8a"/><rect x="1126.7" y="606.5" width="1" height="1" fill="#8a8a8a"/><rect x="1135.2" y="606.5" width="1" height="1" fill="#8a8a8a"/><rect x="1143.7" y="606.5" width="1" height="1" fill="#8a8a8a"/><rect x="1152.2" y="606.5" width="1" height="1" fill="#8a8a8a"/><rect x="1169.1" y="606.5" width="1" height="1" fill="#8a8a8a"/><rect x="1177.6" y="606.5" width="1" height="1" fill="#8a8a8a"/><rect x="1186.1" y="606.5" width="1" height="1" fill="#8a8a8a"/><rect x="1194.6" y="606.5" width="1" height="1" fill="#8a8a8a"/><rect x="1211.6" y="606.5" width="1" height="1" fill="#8a8a8a"/><rect x="1220.1" y="606.5" width="1" height="1" fill="#8a8a8a"/><rect x="1228.6" y="606.5" width="1" height="1" fill="#8a8a8a"/><rect x="1237.1" y="606.5" width="1" height="1" fill="#8a8a8a"/><rect x="1254.0" y="606.5" width="1" height="1" fill="#8a8a8a"/><rect x="1262.5" y="606.5" width="1" height="1" fill="#8a8a8a"/><rect x="1271.0" y="606.5" width="1" height="1" fill="#8a8a8a"/><rect x="1279.5" y="606.5" width="1" height="1" fill="#8a8a8a"/><rect x="872.0" y="619.2" width="1" height="1" fill="#8a8a8a"/><rect x="880.5" y="619.2" width="1" height="1" fill="#8a8a8a"/><rect x="889.0" y="619.2" width="1" height="1" fill="#8a8a8a"/><rect x="897.5" y="619.2" width="1" height="1" fill="#8a8a8a"/><rect x="914.4" y="619.2" width="1" height="1" fill="#8a8a8a"/><rect x="922.9" y="619.2" width="1" height="1" fill="#8a8a8a"/><rect x="931.4" y="619.2" width="1" height="1" fill="#8a8a8a"/><rect x="939.9" y="619.2" width="1" height="1" fill="#8a8a8a"/><rect x="956.9" y="619.2" width="1" height="1" fill="#8a8a8a"/><rect x="965.4" y="619.2" width="1" height="1" fill="#8a8a8a"/><rect x="973.9" y="619.2" width="1" height="1" fill="#8a8a8a"/><rect x="982.4" y="619.2" width="1" height="1" fill="#8a8a8a"/><rect x="999.3" y="619.2" width="1" height="1" fill="#8a8a8a"/><rect x="1007.8" y="619.2" width="1" height="1" fill="#8a8a8a"/><rect x="1016.3" y="619.2" width="1" height="1" fill="#8a8a8a"/><rect x="1024.8" y="619.2" width="1" height="1" fill="#8a8a8a"/><rect x="1041.8" y="619.2" width="1" height="1" fill="#8a8a8a"/><rect x="1050.3" y="619.2" width="1" height="1" fill="#8a8a8a"/><rect x="1058.8" y="619.2" width="1" height="1" fill="#8a8a8a"/><rect x="1067.3" y="619.2" width="1" height="1" fill="#8a8a8a"/><rect x="1084.2" y="619.2" width="1" height="1" fill="#8a8a8a"/><rect x="1092.7" y="619.2" width="1" height="1" fill="#8a8a8a"/><rect x="1101.2" y="619.2" width="1" height="1" fill="#8a8a8a"/><rect x="1109.7" y="619.2" width="1" height="1" fill="#8a8a8a"/><rect x="1126.7" y="619.2" width="1" height="1" fill="#8a8a8a"/><rect x="1135.2" y="619.2" width="1" height="1" fill="#8a8a8a"/><rect x="1143.7" y="619.2" width="1" height="1" fill="#8a8a8a"/><rect x="1152.2" y="619.2" width="1" height="1" fill="#8a8a8a"/><rect x="1169.1" y="619.2" width="1" height="1" fill="#8a8a8a"/><rect x="1177.6" y="619.2" width="1" height="1" fill="#8a8a8a"/><rect x="1186.1" y="619.2" width="1" height="1" fill="#8a8a8a"/><rect x="1194.6" y="619.2" width="1" height="1" fill="#8a8a8a"/><rect x="1211.6" y="619.2" width="1" height="1" fill="#8a8a8a"/><rect x="1220.1" y="619.2" width="1" height="1" fill="#8a8a8a"/><rect x="1228.6" y="619.2" width="1" height="1" fill="#8a8a8a"/><rect x="1237.1" y="619.2" width="1" height="1" fill="#8a8a8a"/><rect x="1254.0" y="619.2" width="1" height="1" fill="#8a8a8a"/><rect x="1262.5" y="619.2" width="1" height="1" fill="#8a8a8a"/><rect x="1271.0" y="619.2" width="1" height="1" fill="#8a8a8a"/><rect x="1279.5" y="619.2" width="1" height="1" fill="#8a8a8a"/><rect x="872.0" y="631.9" width="1" height="1" fill="#8a8a8a"/><rect x="880.5" y="631.9" width="1" height="1" fill="#8a8a8a"/><rect x="889.0" y="631.9" width="1" height="1" fill="#8a8a8a"/><rect x="897.5" y="631.9" width="1" height="1" fill="#8a8a8a"/><rect x="914.4" y="631.9" width="1" height="1" fill="#8a8a8a"/><rect x="922.9" y="631.9" width="1" height="1" fill="#8a8a8a"/><rect x="931.4" y="631.9" width="1" height="1" fill="#8a8a8a"/><rect x="939.9" y="631.9" width="1" height="1" fill="#8a8a8a"/><rect x="956.9" y="631.9" width="1" height="1" fill="#8a8a8a"/><rect x="965.4" y="631.9" width="1" height="1" fill="#8a8a8a"/><rect x="973.9" y="631.9" width="1" height="1" fill="#8a8a8a"/><rect x="982.4" y="631.9" width="1" height="1" fill="#8a8a8a"/><rect x="999.3" y="631.9" width="1" height="1" fill="#8a8a8a"/><rect x="1007.8" y="631.9" width="1" height="1" fill="#8a8a8a"/><rect x="1016.3" y="631.9" width="1" height="1" fill="#8a8a8a"/><rect x="1024.8" y="631.9" width="1" height="1" fill="#8a8a8a"/><rect x="1041.8" y="631.9" width="1" height="1" fill="#8a8a8a"/><rect x="1050.3" y="631.9" width="1" height="1" fill="#8a8a8a"/><rect x="1058.8" y="631.9" width="1" height="1" fill="#8a8a8a"/><rect x="1067.3" y="631.9" width="1" height="1" fill="#8a8a8a"/><rect x="1084.2" y="631.9" width="1" height="1" fill="#8a8a8a"/><rect x="1092.7" y="631.9" width="1" height="1" fill="#8a8a8a"/><rect x="1101.2" y="631.9" width="1" height="1" fill="#8a8a8a"/><rect x="1109.7" y="631.9" width="1" height="1" fill="#8a8a8a"/><rect x="1126.7" y="631.9" width="1" height="1" fill="#8a8a8a"/><rect x="1135.2" y="631.9" width="1" height="1" fill="#8a8a8a"/><rect x="1143.7" y="631.9" width="1" height="1" fill="#8a8a8a"/><rect x="1152.2" y="631.9" width="1" height="1" fill="#8a8a8a"/><rect x="1169.1" y="631.9" width="1" height="1" fill="#8a8a8a"/><rect x="1177.6" y="631.9" width="1" height="1" fill="#8a8a8a"/><rect x="1186.1" y="631.9" width="1" height="1" fill="#8a8a8a"/><rect x="1194.6" y="631.9" width="1" height="1" fill="#8a8a8a"/><rect x="1211.6" y="631.9" width="1" height="1" fill="#8a8a8a"/><rect x="1220.1" y="631.9" width="1" height="1" fill="#8a8a8a"/><rect x="1228.6" y="631.9" width="1" height="1" fill="#8a8a8a"/><rect x="1237.1" y="631.9" width="1" height="1" fill="#8a8a8a"/><rect x="1254.0" y="631.9" width="1" height="1" fill="#8a8a8a"/><rect x="1262.5" y="631.9" width="1" height="1" fill="#8a8a8a"/><rect x="1271.0" y="631.9" width="1" height="1" fill="#8a8a8a"/><rect x="1279.5" y="631.9" width="1" height="1" fill="#8a8a8a"/><rect x="872.0" y="644.6" width="1" height="1" fill="#8a8a8a"/><rect x="880.5" y="644.6" width="1" height="1" fill="#8a8a8a"/><rect x="889.0" y="644.6" width="1" height="1" fill="#8a8a8a"/><rect x="897.5" y="644.6" width="1" height="1" fill="#8a8a8a"/><rect x="914.4" y="644.6" width="1" height="1" fill="#8a8a8a"/><rect x="922.9" y="644.6" width="1" height="1" fill="#8a8a8a"/><rect x="931.4" y="644.6" width="1" height="1" fill="#8a8a8a"/><rect x="939.9" y="644.6" width="1" height="1" fill="#8a8a8a"/><rect x="956.9" y="644.6" width="1" height="1" fill="#8a8a8a"/><rect x="965.4" y="644.6" width="1" height="1" fill="#8a8a8a"/><rect x="973.9" y="644.6" width="1" height="1" fill="#8a8a8a"/><rect x="982.4" y="644.6" width="1" height="1" fill="#8a8a8a"/><rect x="999.3" y="644.6" width="1" height="1" fill="#8a8a8a"/><rect x="1007.8" y="644.6" width="1" height="1" fill="#8a8a8a"/><rect x="1016.3" y="644.6" width="1" height="1" fill="#8a8a8a"/><rect x="1024.8" y="644.6" width="1" height="1" fill="#8a8a8a"/><rect x="1041.8" y="644.6" width="1" height="1" fill="#8a8a8a"/><rect x="1050.3" y="644.6" width="1" height="1" fill="#8a8a8a"/><rect x="1058.8" y="644.6" width="1" height="1" fill="#8a8a8a"/><rect x="1067.3" y="644.6" width="1" height="1" fill="#8a8a8a"/><rect x="1084.2" y="644.6" width="1" height="1" fill="#8a8a8a"/><rect x="1092.7" y="644.6" width="1" height="1" fill="#8a8a8a"/><rect x="1101.2" y="644.6" width="1" height="1" fill="#8a8a8a"/><rect x="1109.7" y="644.6" width="1" height="1" fill="#8a8a8a"/><rect x="1126.7" y="644.6" width="1" height="1" fill="#8a8a8a"/><rect x="1135.2" y="644.6" width="1" height="1" fill="#8a8a8a"/><rect x="1143.7" y="644.6" width="1" height="1" fill="#8a8a8a"/><rect x="1152.2" y="644.6" width="1" height="1" fill="#8a8a8a"/><rect x="1169.1" y="644.6" width="1" height="1" fill="#8a8a8a"/><rect x="1177.6" y="644.6" width="1" height="1" fill="#8a8a8a"/><rect x="1186.1" y="644.6" width="1" height="1" fill="#8a8a8a"/><rect x="1194.6" y="644.6" width="1" height="1" fill="#8a8a8a"/><rect x="1211.6" y="644.6" width="1" height="1" fill="#8a8a8a"/><rect x="1220.1" y="644.6" width="1" height="1" fill="#8a8a8a"/><rect x="1228.6" y="644.6" width="1" height="1" fill="#8a8a8a"/><rect x="1237.1" y="644.6" width="1" height="1" fill="#8a8a8a"/><rect x="1254.0" y="644.6" width="1" height="1" fill="#8a8a8a"/><rect x="1262.5" y="644.6" width="1" height="1" fill="#8a8a8a"/><rect x="1271.0" y="644.6" width="1" height="1" fill="#8a8a8a"/><rect x="1279.5" y="644.6" width="1" height="1" fill="#8a8a8a"/><rect x="872.0" y="657.3" width="1" height="1" fill="#8a8a8a"/><rect x="880.5" y="657.3" width="1" height="1" fill="#8a8a8a"/><rect x="889.0" y="657.3" width="1" height="1" fill="#8a8a8a"/><rect x="897.5" y="657.3" width="1" height="1" fill="#8a8a8a"/><rect x="914.4" y="657.3" width="1" height="1" fill="#8a8a8a"/><rect x="922.9" y="657.3" width="1" height="1" fill="#8a8a8a"/><rect x="931.4" y="657.3" width="1" height="1" fill="#8a8a8a"/><rect x="939.9" y="657.3" width="1" height="1" fill="#8a8a8a"/><rect x="956.9" y="657.3" width="1" height="1" fill="#8a8a8a"/><rect x="965.4" y="657.3" width="1" height="1" fill="#8a8a8a"/><rect x="973.9" y="657.3" width="1" height="1" fill="#8a8a8a"/><rect x="982.4" y="657.3" width="1" height="1" fill="#8a8a8a"/><rect x="999.3" y="657.3" width="1" height="1" fill="#8a8a8a"/><rect x="1007.8" y="657.3" width="1" height="1" fill="#8a8a8a"/><rect x="1016.3" y="657.3" width="1" height="1" fill="#8a8a8a"/><rect x="1024.8" y="657.3" width="1" height="1" fill="#8a8a8a"/><rect x="1041.8" y="657.3" width="1" height="1" fill="#8a8a8a"/><rect x="1050.3" y="657.3" width="1" height="1" fill="#8a8a8a"/><rect x="1058.8" y="657.3" width="1" height="1" fill="#8a8a8a"/><rect x="1067.3" y="657.3" width="1" height="1" fill="#8a8a8a"/><rect x="1084.2" y="657.3" width="1" height="1" fill="#8a8a8a"/><rect x="1092.7" y="657.3" width="1" height="1" fill="#8a8a8a"/><rect x="1101.2" y="657.3" width="1" height="1" fill="#8a8a8a"/><rect x="1109.7" y="657.3" width="1" height="1" fill="#8a8a8a"/><rect x="1126.7" y="657.3" width="1" height="1" fill="#8a8a8a"/><rect x="1135.2" y="657.3" width="1" height="1" fill="#8a8a8a"/><rect x="1143.7" y="657.3" width="1" height="1" fill="#8a8a8a"/><rect x="1152.2" y="657.3" width="1" height="1" fill="#8a8a8a"/><rect x="1169.1" y="657.3" width="1" height="1" fill="#8a8a8a"/><rect x="1177.6" y="657.3" width="1" height="1" fill="#8a8a8a"/><rect x="1186.1" y="657.3" width="1" height="1" fill="#8a8a8a"/><rect x="1194.6" y="657.3" width="1" height="1" fill="#8a8a8a"/><rect x="1211.6" y="657.3" width="1" height="1" fill="#8a8a8a"/><rect x="1220.1" y="657.3" width="1" height="1" fill="#8a8a8a"/><rect x="1228.6" y="657.3" width="1" height="1" fill="#8a8a8a"/><rect x="1237.1" y="657.3" width="1" height="1" fill="#8a8a8a"/><rect x="1254.0" y="657.3" width="1" height="1" fill="#8a8a8a"/><rect x="1262.5" y="657.3" width="1" height="1" fill="#8a8a8a"/><rect x="1271.0" y="657.3" width="1" height="1" fill="#8a8a8a"/><rect x="1279.5" y="657.3" width="1" height="1" fill="#8a8a8a"/><rect x="872.0" y="669.9" width="1" height="1" fill="#8a8a8a"/><rect x="880.5" y="669.9" width="1" height="1" fill="#8a8a8a"/><rect x="889.0" y="669.9" width="1" height="1" fill="#8a8a8a"/><rect x="897.5" y="669.9" width="1" height="1" fill="#8a8a8a"/><rect x="914.4" y="669.9" width="1" height="1" fill="#8a8a8a"/><rect x="922.9" y="669.9" width="1" height="1" fill="#8a8a8a"/><rect x="931.4" y="669.9" width="1" height="1" fill="#8a8a8a"/><rect x="939.9" y="669.9" width="1" height="1" fill="#8a8a8a"/><rect x="956.9" y="669.9" width="1" height="1" fill="#8a8a8a"/><rect x="965.4" y="669.9" width="1" height="1" fill="#8a8a8a"/><rect x="973.9" y="669.9" width="1" height="1" fill="#8a8a8a"/><rect x="982.4" y="669.9" width="1" height="1" fill="#8a8a8a"/><rect x="999.3" y="669.9" width="1" height="1" fill="#8a8a8a"/><rect x="1007.8" y="669.9" width="1" height="1" fill="#8a8a8a"/><rect x="1016.3" y="669.9" width="1" height="1" fill="#8a8a8a"/><rect x="1024.8" y="669.9" width="1" height="1" fill="#8a8a8a"/><rect x="1041.8" y="669.9" width="1" height="1" fill="#8a8a8a"/><rect x="1050.3" y="669.9" width="1" height="1" fill="#8a8a8a"/><rect x="1058.8" y="669.9" width="1" height="1" fill="#8a8a8a"/><rect x="1067.3" y="669.9" width="1" height="1" fill="#8a8a8a"/><rect x="1084.2" y="669.9" width="1" height="1" fill="#8a8a8a"/><rect x="1092.7" y="669.9" width="1" height="1" fill="#8a8a8a"/><rect x="1101.2" y="669.9" width="1" height="1" fill="#8a8a8a"/><rect x="1109.7" y="669.9" width="1" height="1" fill="#8a8a8a"/><rect x="1126.7" y="669.9" width="1" height="1" fill="#8a8a8a"/><rect x="1135.2" y="669.9" width="1" height="1" fill="#8a8a8a"/><rect x="1143.7" y="669.9" width="1" height="1" fill="#8a8a8a"/><rect x="1152.2" y="669.9" width="1" height="1" fill="#8a8a8a"/><rect x="1169.1" y="669.9" width="1" height="1" fill="#8a8a8a"/><rect x="1177.6" y="669.9" width="1" height="1" fill="#8a8a8a"/><rect x="1186.1" y="669.9" width="1" height="1" fill="#8a8a8a"/><rect x="1194.6" y="669.9" width="1" height="1" fill="#8a8a8a"/><rect x="1211.6" y="669.9" width="1" height="1" fill="#8a8a8a"/><rect x="1220.1" y="669.9" width="1" height="1" fill="#8a8a8a"/><rect x="1228.6" y="669.9" width="1" height="1" fill="#8a8a8a"/><rect x="1237.1" y="669.9" width="1" height="1" fill="#8a8a8a"/><rect x="1254.0" y="669.9" width="1" height="1" fill="#8a8a8a"/><rect x="1262.5" y="669.9" width="1" height="1" fill="#8a8a8a"/><rect x="1271.0" y="669.9" width="1" height="1" fill="#8a8a8a"/><rect x="1279.5" y="669.9" width="1" height="1" fill="#8a8a8a"/><rect x="872.0" y="682.6" width="1" height="1" fill="#8a8a8a"/><rect x="880.5" y="682.6" width="1" height="1" fill="#8a8a8a"/><rect x="889.0" y="682.6" width="1" height="1" fill="#8a8a8a"/><rect x="897.5" y="682.6" width="1" height="1" fill="#8a8a8a"/><rect x="914.4" y="682.6" width="1" height="1" fill="#8a8a8a"/><rect x="922.9" y="682.6" width="1" height="1" fill="#8a8a8a"/><rect x="931.4" y="682.6" width="1" height="1" fill="#8a8a8a"/><rect x="939.9" y="682.6" width="1" height="1" fill="#8a8a8a"/><rect x="956.9" y="682.6" width="1" height="1" fill="#8a8a8a"/><rect x="965.4" y="682.6" width="1" height="1" fill="#8a8a8a"/><rect x="973.9" y="682.6" width="1" height="1" fill="#8a8a8a"/><rect x="982.4" y="682.6" width="1" height="1" fill="#8a8a8a"/><rect x="999.3" y="682.6" width="1" height="1" fill="#8a8a8a"/><rect x="1007.8" y="682.6" width="1" height="1" fill="#8a8a8a"/><rect x="1016.3" y="682.6" width="1" height="1" fill="#8a8a8a"/><rect x="1024.8" y="682.6" width="1" height="1" fill="#8a8a8a"/><rect x="1041.8" y="682.6" width="1" height="1" fill="#8a8a8a"/><rect x="1050.3" y="682.6" width="1" height="1" fill="#8a8a8a"/><rect x="1058.8" y="682.6" width="1" height="1" fill="#8a8a8a"/><rect x="1067.3" y="682.6" width="1" height="1" fill="#8a8a8a"/><rect x="1084.2" y="682.6" width="1" height="1" fill="#8a8a8a"/><rect x="1092.7" y="682.6" width="1" height="1" fill="#8a8a8a"/><rect x="1101.2" y="682.6" width="1" height="1" fill="#8a8a8a"/><rect x="1109.7" y="682.6" width="1" height="1" fill="#8a8a8a"/><rect x="1126.7" y="682.6" width="1" height="1" fill="#8a8a8a"/><rect x="1135.2" y="682.6" width="1" height="1" fill="#8a8a8a"/><rect x="1143.7" y="682.6" width="1" height="1" fill="#8a8a8a"/><rect x="1152.2" y="682.6" width="1" height="1" fill="#8a8a8a"/><rect x="1169.1" y="682.6" width="1" height="1" fill="#8a8a8a"/><rect x="1177.6" y="682.6" width="1" height="1" fill="#8a8a8a"/><rect x="1186.1" y="682.6" width="1" height="1" fill="#8a8a8a"/><rect x="1194.6" y="682.6" width="1" height="1" fill="#8a8a8a"/><rect x="1211.6" y="682.6" width="1" height="1" fill="#8a8a8a"/><rect x="1220.1" y="682.6" width="1" height="1" fill="#8a8a8a"/><rect x="1228.6" y="682.6" width="1" height="1" fill="#8a8a8a"/><rect x="1237.1" y="682.6" width="1" height="1" fill="#8a8a8a"/><rect x="1254.0" y="682.6" width="1" height="1" fill="#8a8a8a"/><rect x="1262.5" y="682.6" width="1" height="1" fill="#8a8a8a"/><rect x="1271.0" y="682.6" width="1" height="1" fill="#8a8a8a"/><rect x="1279.5" y="682.6" width="1" height="1" fill="#8a8a8a"/><rect x="872.0" y="695.3" width="1" height="1" fill="#8a8a8a"/><rect x="880.5" y="695.3" width="1" height="1" fill="#8a8a8a"/><rect x="889.0" y="695.3" width="1" height="1" fill="#8a8a8a"/><rect x="897.5" y="695.3" width="1" height="1" fill="#8a8a8a"/><rect x="914.4" y="695.3" width="1" height="1" fill="#8a8a8a"/><rect x="922.9" y="695.3" width="1" height="1" fill="#8a8a8a"/><rect x="931.4" y="695.3" width="1" height="1" fill="#8a8a8a"/><rect x="939.9" y="695.3" width="1" height="1" fill="#8a8a8a"/><rect x="956.9" y="695.3" width="1" height="1" fill="#8a8a8a"/><rect x="965.4" y="695.3" width="1" height="1" fill="#8a8a8a"/><rect x="973.9" y="695.3" width="1" height="1" fill="#8a8a8a"/><rect x="982.4" y="695.3" width="1" height="1" fill="#8a8a8a"/><rect x="999.3" y="695.3" width="1" height="1" fill="#8a8a8a"/><rect x="1007.8" y="695.3" width="1" height="1" fill="#8a8a8a"/><rect x="1016.3" y="695.3" width="1" height="1" fill="#8a8a8a"/><rect x="1024.8" y="695.3" width="1" height="1" fill="#8a8a8a"/><rect x="1041.8" y="695.3" width="1" height="1" fill="#8a8a8a"/><rect x="1050.3" y="695.3" width="1" height="1" fill="#8a8a8a"/><rect x="1058.8" y="695.3" width="1" height="1" fill="#8a8a8a"/><rect x="1067.3" y="695.3" width="1" height="1" fill="#8a8a8a"/><rect x="1084.2" y="695.3" width="1" height="1" fill="#8a8a8a"/><rect x="1092.7" y="695.3" width="1" height="1" fill="#8a8a8a"/><rect x="1101.2" y="695.3" width="1" height="1" fill="#8a8a8a"/><rect x="1109.7" y="695.3" width="1" height="1" fill="#8a8a8a"/><rect x="1126.7" y="695.3" width="1" height="1" fill="#8a8a8a"/><rect x="1135.2" y="695.3" width="1" height="1" fill="#8a8a8a"/><rect x="1143.7" y="695.3" width="1" height="1" fill="#8a8a8a"/><rect x="1152.2" y="695.3" width="1" height="1" fill="#8a8a8a"/><rect x="1169.1" y="695.3" width="1" height="1" fill="#8a8a8a"/><rect x="1177.6" y="695.3" width="1" height="1" fill="#8a8a8a"/><rect x="1186.1" y="695.3" width="1" height="1" fill="#8a8a8a"/><rect x="1194.6" y="695.3" width="1" height="1" fill="#8a8a8a"/><rect x="1211.6" y="695.3" width="1" height="1" fill="#8a8a8a"/><rect x="1220.1" y="695.3" width="1" height="1" fill="#8a8a8a"/><rect x="1228.6" y="695.3" width="1" height="1" fill="#8a8a8a"/><rect x="1237.1" y="695.3" width="1" height="1" fill="#8a8a8a"/><rect x="1254.0" y="695.3" width="1" height="1" fill="#8a8a8a"/><rect x="1262.5" y="695.3" width="1" height="1" fill="#8a8a8a"/><rect x="1271.0" y="695.3" width="1" height="1" fill="#8a8a8a"/><rect x="1279.5" y="695.3" width="1" height="1" fill="#8a8a8a"/><rect x="872.0" y="701.8" width="1" height="1" fill="#8a8a8a"/><rect x="880.5" y="701.8" width="1" height="1" fill="#8a8a8a"/><rect x="889.0" y="701.8" width="1" height="1" fill="#8a8a8a"/><rect x="897.5" y="701.8" width="1" height="1" fill="#8a8a8a"/><rect x="914.4" y="701.8" width="1" height="1" fill="#8a8a8a"/><rect x="922.9" y="701.8" width="1" height="1" fill="#8a8a8a"/><rect x="931.4" y="701.8" width="1" height="1" fill="#8a8a8a"/><rect x="939.9" y="701.8" width="1" height="1" fill="#8a8a8a"/><rect x="956.9" y="701.8" width="1" height="1" fill="#8a8a8a"/><rect x="965.4" y="701.8" width="1" height="1" fill="#8a8a8a"/><rect x="973.9" y="701.8" width="1" height="1" fill="#8a8a8a"/><rect x="982.4" y="701.8" width="1" height="1" fill="#8a8a8a"/><rect x="999.3" y="701.8" width="1" height="1" fill="#8a8a8a"/><rect x="1007.8" y="701.8" width="1" height="1" fill="#8a8a8a"/><rect x="1016.3" y="701.8" width="1" height="1" fill="#8a8a8a"/><rect x="1024.8" y="701.8" width="1" height="1" fill="#8a8a8a"/><rect x="1041.8" y="701.8" width="1" height="1" fill="#8a8a8a"/><rect x="1050.3" y="701.8" width="1" height="1" fill="#8a8a8a"/><rect x="1058.8" y="701.8" width="1" height="1" fill="#8a8a8a"/><rect x="1067.3" y="701.8" width="1" height="1" fill="#8a8a8a"/><rect x="1084.2" y="701.8" width="1" height="1" fill="#8a8a8a"/><rect x="1092.7" y="701.8" width="1" height="1" fill="#8a8a8a"/><rect x="1101.2" y="701.8" width="1" height="1" fill="#8a8a8a"/><rect x="1109.7" y="701.8" width="1" height="1" fill="#8a8a8a"/><rect x="1126.7" y="701.8" width="1" height="1" fill="#8a8a8a"/><rect x="1135.2" y="701.8" width="1" height="1" fill="#8a8a8a"/><rect x="1143.7" y="701.8" width="1" height="1" fill="#8a8a8a"/><rect x="1152.2" y="701.8" width="1" height="1" fill="#8a8a8a"/><rect x="1169.1" y="701.8" width="1" height="1" fill="#8a8a8a"/><rect x="1177.6" y="701.8" width="1" height="1" fill="#8a8a8a"/><rect x="1186.1" y="701.8" width="1" height="1" fill="#8a8a8a"/><rect x="1194.6" y="701.8" width="1" height="1" fill="#8a8a8a"/><rect x="1211.6" y="701.8" width="1" height="1" fill="#8a8a8a"/><rect x="1220.1" y="701.8" width="1" height="1" fill="#8a8a8a"/><rect x="1228.6" y="701.8" width="1" height="1" fill="#8a8a8a"/><rect x="1237.1" y="701.8" width="1" height="1" fill="#8a8a8a"/><rect x="1254.0" y="701.8" width="1" height="1" fill="#8a8a8a"/><rect x="1262.5" y="701.8" width="1" height="1" fill="#8a8a8a"/><rect x="1271.0" y="701.8" width="1" height="1" fill="#8a8a8a"/><rect x="1279.5" y="701.8" width="1" height="1" fill="#8a8a8a"/><rect x="872.0" y="714.7" width="1" height="1" fill="#8a8a8a"/><rect x="880.5" y="714.7" width="1" height="1" fill="#8a8a8a"/><rect x="889.0" y="714.7" width="1" height="1" fill="#8a8a8a"/><rect x="897.5" y="714.7" width="1" height="1" fill="#8a8a8a"/><rect x="914.4" y="714.7" width="1" height="1" fill="#8a8a8a"/><rect x="922.9" y="714.7" width="1" height="1" fill="#8a8a8a"/><rect x="931.4" y="714.7" width="1" height="1" fill="#8a8a8a"/><rect x="939.9" y="714.7" width="1" height="1" fill="#8a8a8a"/><rect x="956.9" y="714.7" width="1" height="1" fill="#8a8a8a"/><rect x="965.4" y="714.7" width="1" height="1" fill="#8a8a8a"/><rect x="973.9" y="714.7" width="1" height="1" fill="#8a8a8a"/><rect x="982.4" y="714.7" width="1" height="1" fill="#8a8a8a"/><rect x="999.3" y="714.7" width="1" height="1" fill="#8a8a8a"/><rect x="1007.8" y="714.7" width="1" height="1" fill="#8a8a8a"/><rect x="1016.3" y="714.7" width="1" height="1" fill="#8a8a8a"/><rect x="1024.8" y="714.7" width="1" height="1" fill="#8a8a8a"/><rect x="1041.8" y="714.7" width="1" height="1" fill="#8a8a8a"/><rect x="1050.3" y="714.7" width="1" height="1" fill="#8a8a8a"/><rect x="1058.8" y="714.7" width="1" height="1" fill="#8a8a8a"/><rect x="1067.3" y="714.7" width="1" height="1" fill="#8a8a8a"/><rect x="1084.2" y="714.7" width="1" height="1" fill="#8a8a8a"/><rect x="1092.7" y="714.7" width="1" height="1" fill="#8a8a8a"/><rect x="1101.2" y="714.7" width="1" height="1" fill="#8a8a8a"/><rect x="1109.7" y="714.7" width="1" height="1" fill="#8a8a8a"/><rect x="1126.7" y="714.7" width="1" height="1" fill="#8a8a8a"/><rect x="1135.2" y="714.7" width="1" height="1" fill="#8a8a8a"/><rect x="1143.7" y="714.7" width="1" height="1" fill="#8a8a8a"/><rect x="1152.2" y="714.7" width="1" height="1" fill="#8a8a8a"/><rect x="1169.1" y="714.7" width="1" height="1" fill="#8a8a8a"/><rect x="1177.6" y="714.7" width="1" height="1" fill="#8a8a8a"/><rect x="1186.1" y="714.7" width="1" height="1" fill="#8a8a8a"/><rect x="1194.6" y="714.7" width="1" height="1" fill="#8a8a8a"/><rect x="1211.6" y="714.7" width="1" height="1" fill="#8a8a8a"/><rect x="1220.1" y="714.7" width="1" height="1" fill="#8a8a8a"/><rect x="1228.6" y="714.7" width="1" height="1" fill="#8a8a8a"/><rect x="1237.1" y="714.7" width="1" height="1" fill="#8a8a8a"/><rect x="1254.0" y="714.7" width="1" height="1" fill="#8a8a8a"/><rect x="1262.5" y="714.7" width="1" height="1" fill="#8a8a8a"/><rect x="1271.0" y="714.7" width="1" height="1" fill="#8a8a8a"/><rect x="1279.5" y="714.7" width="1" height="1" fill="#8a8a8a"/><rect x="872.0" y="727.7" width="1" height="1" fill="#8a8a8a"/><rect x="880.5" y="727.7" width="1" height="1" fill="#8a8a8a"/><rect x="889.0" y="727.7" width="1" height="1" fill="#8a8a8a"/><rect x="897.5" y="727.7" width="1" height="1" fill="#8a8a8a"/><rect x="914.4" y="727.7" width="1" height="1" fill="#8a8a8a"/><rect x="922.9" y="727.7" width="1" height="1" fill="#8a8a8a"/><rect x="931.4" y="727.7" width="1" height="1" fill="#8a8a8a"/><rect x="939.9" y="727.7" width="1" height="1" fill="#8a8a8a"/><rect x="956.9" y="727.7" width="1" height="1" fill="#8a8a8a"/><rect x="965.4" y="727.7" width="1" height="1" fill="#8a8a8a"/><rect x="973.9" y="727.7" width="1" height="1" fill="#8a8a8a"/><rect x="982.4" y="727.7" width="1" height="1" fill="#8a8a8a"/><rect x="999.3" y="727.7" width="1" height="1" fill="#8a8a8a"/><rect x="1007.8" y="727.7" width="1" height="1" fill="#8a8a8a"/><rect x="1016.3" y="727.7" width="1" height="1" fill="#8a8a8a"/><rect x="1024.8" y="727.7" width="1" height="1" fill="#8a8a8a"/><rect x="1041.8" y="727.7" width="1" height="1" fill="#8a8a8a"/><rect x="1050.3" y="727.7" width="1" height="1" fill="#8a8a8a"/><rect x="1058.8" y="727.7" width="1" height="1" fill="#8a8a8a"/><rect x="1067.3" y="727.7" width="1" height="1" fill="#8a8a8a"/><rect x="1084.2" y="727.7" width="1" height="1" fill="#8a8a8a"/><rect x="1092.7" y="727.7" width="1" height="1" fill="#8a8a8a"/><rect x="1101.2" y="727.7" width="1" height="1" fill="#8a8a8a"/><rect x="1109.7" y="727.7" width="1" height="1" fill="#8a8a8a"/><rect x="1126.7" y="727.7" width="1" height="1" fill="#8a8a8a"/><rect x="1135.2" y="727.7" width="1" height="1" fill="#8a8a8a"/><rect x="1143.7" y="727.7" width="1" height="1" fill="#8a8a8a"/><rect x="1152.2" y="727.7" width="1" height="1" fill="#8a8a8a"/><rect x="1169.1" y="727.7" width="1" height="1" fill="#8a8a8a"/><rect x="1177.6" y="727.7" width="1" height="1" fill="#8a8a8a"/><rect x="1186.1" y="727.7" width="1" height="1" fill="#8a8a8a"/><rect x="1194.6" y="727.7" width="1" height="1" fill="#8a8a8a"/><rect x="1211.6" y="727.7" width="1" height="1" fill="#8a8a8a"/><rect x="1220.1" y="727.7" width="1" height="1" fill="#8a8a8a"/><rect x="1228.6" y="727.7" width="1" height="1" fill="#8a8a8a"/><rect x="1237.1" y="727.7" width="1" height="1" fill="#8a8a8a"/><rect x="1254.0" y="727.7" width="1" height="1" fill="#8a8a8a"/><rect x="1262.5" y="727.7" width="1" height="1" fill="#8a8a8a"/><rect x="1271.0" y="727.7" width="1" height="1" fill="#8a8a8a"/><rect x="1279.5" y="727.7" width="1" height="1" fill="#8a8a8a"/><rect x="872.0" y="740.6" width="1" height="1" fill="#8a8a8a"/><rect x="880.5" y="740.6" width="1" height="1" fill="#8a8a8a"/><rect x="889.0" y="740.6" width="1" height="1" fill="#8a8a8a"/><rect x="897.5" y="740.6" width="1" height="1" fill="#8a8a8a"/><rect x="914.4" y="740.6" width="1" height="1" fill="#8a8a8a"/><rect x="922.9" y="740.6" width="1" height="1" fill="#8a8a8a"/><rect x="931.4" y="740.6" width="1" height="1" fill="#8a8a8a"/><rect x="939.9" y="740.6" width="1" height="1" fill="#8a8a8a"/><rect x="956.9" y="740.6" width="1" height="1" fill="#8a8a8a"/><rect x="965.4" y="740.6" width="1" height="1" fill="#8a8a8a"/><rect x="973.9" y="740.6" width="1" height="1" fill="#8a8a8a"/><rect x="982.4" y="740.6" width="1" height="1" fill="#8a8a8a"/><rect x="999.3" y="740.6" width="1" height="1" fill="#8a8a8a"/><rect x="1007.8" y="740.6" width="1" height="1" fill="#8a8a8a"/><rect x="1016.3" y="740.6" width="1" height="1" fill="#8a8a8a"/><rect x="1024.8" y="740.6" width="1" height="1" fill="#8a8a8a"/><rect x="1041.8" y="740.6" width="1" height="1" fill="#8a8a8a"/><rect x="1050.3" y="740.6" width="1" height="1" fill="#8a8a8a"/><rect x="1058.8" y="740.6" width="1" height="1" fill="#8a8a8a"/><rect x="1067.3" y="740.6" width="1" height="1" fill="#8a8a8a"/><rect x="1084.2" y="740.6" width="1" height="1" fill="#8a8a8a"/><rect x="1092.7" y="740.6" width="1" height="1" fill="#8a8a8a"/><rect x="1101.2" y="740.6" width="1" height="1" fill="#8a8a8a"/><rect x="1109.7" y="740.6" width="1" height="1" fill="#8a8a8a"/><rect x="1126.7" y="740.6" width="1" height="1" fill="#8a8a8a"/><rect x="1135.2" y="740.6" width="1" height="1" fill="#8a8a8a"/><rect x="1143.7" y="740.6" width="1" height="1" fill="#8a8a8a"/><rect x="1152.2" y="740.6" width="1" height="1" fill="#8a8a8a"/><rect x="1169.1" y="740.6" width="1" height="1" fill="#8a8a8a"/><rect x="1177.6" y="740.6" width="1" height="1" fill="#8a8a8a"/><rect x="1186.1" y="740.6" width="1" height="1" fill="#8a8a8a"/><rect x="1194.6" y="740.6" width="1" height="1" fill="#8a8a8a"/><rect x="1211.6" y="740.6" width="1" height="1" fill="#8a8a8a"/><rect x="1220.1" y="740.6" width="1" height="1" fill="#8a8a8a"/><rect x="1228.6" y="740.6" width="1" height="1" fill="#8a8a8a"/><rect x="1237.1" y="740.6" width="1" height="1" fill="#8a8a8a"/><rect x="1254.0" y="740.6" width="1" height="1" fill="#8a8a8a"/><rect x="1262.5" y="740.6" width="1" height="1" fill="#8a8a8a"/><rect x="1271.0" y="740.6" width="1" height="1" fill="#8a8a8a"/><rect x="1279.5" y="740.6" width="1" height="1" fill="#8a8a8a"/><rect x="872.0" y="753.6" width="1" height="1" fill="#8a8a8a"/><rect x="880.5" y="753.6" width="1" height="1" fill="#8a8a8a"/><rect x="889.0" y="753.6" width="1" height="1" fill="#8a8a8a"/><rect x="897.5" y="753.6" width="1" height="1" fill="#8a8a8a"/><rect x="914.4" y="753.6" width="1" height="1" fill="#8a8a8a"/><rect x="922.9" y="753.6" width="1" height="1" fill="#8a8a8a"/><rect x="931.4" y="753.6" width="1" height="1" fill="#8a8a8a"/><rect x="939.9" y="753.6" width="1" height="1" fill="#8a8a8a"/><rect x="956.9" y="753.6" width="1" height="1" fill="#8a8a8a"/><rect x="965.4" y="753.6" width="1" height="1" fill="#8a8a8a"/><rect x="973.9" y="753.6" width="1" height="1" fill="#8a8a8a"/><rect x="982.4" y="753.6" width="1" height="1" fill="#8a8a8a"/><rect x="999.3" y="753.6" width="1" height="1" fill="#8a8a8a"/><rect x="1007.8" y="753.6" width="1" height="1" fill="#8a8a8a"/><rect x="1016.3" y="753.6" width="1" height="1" fill="#8a8a8a"/><rect x="1024.8" y="753.6" width="1" height="1" fill="#8a8a8a"/><rect x="1041.8" y="753.6" width="1" height="1" fill="#8a8a8a"/><rect x="1050.3" y="753.6" width="1" height="1" fill="#8a8a8a"/><rect x="1058.8" y="753.6" width="1" height="1" fill="#8a8a8a"/><rect x="1067.3" y="753.6" width="1" height="1" fill="#8a8a8a"/><rect x="1084.2" y="753.6" width="1" height="1" fill="#8a8a8a"/><rect x="1092.7" y="753.6" width="1" height="1" fill="#8a8a8a"/><rect x="1101.2" y="753.6" width="1" height="1" fill="#8a8a8a"/><rect x="1109.7" y="753.6" width="1" height="1" fill="#8a8a8a"/><rect x="1126.7" y="753.6" width="1" height="1" fill="#8a8a8a"/><rect x="1135.2" y="753.6" width="1" height="1" fill="#8a8a8a"/><rect x="1143.7" y="753.6" width="1" height="1" fill="#8a8a8a"/><rect x="1152.2" y="753.6" width="1" height="1" fill="#8a8a8a"/><rect x="1169.1" y="753.6" width="1" height="1" fill="#8a8a8a"/><rect x="1177.6" y="753.6" width="1" height="1" fill="#8a8a8a"/><rect x="1186.1" y="753.6" width="1" height="1" fill="#8a8a8a"/><rect x="1194.6" y="753.6" width="1" height="1" fill="#8a8a8a"/><rect x="1211.6" y="753.6" width="1" height="1" fill="#8a8a8a"/><rect x="1220.1" y="753.6" width="1" height="1" fill="#8a8a8a"/><rect x="1228.6" y="753.6" width="1" height="1" fill="#8a8a8a"/><rect x="1237.1" y="753.6" width="1" height="1" fill="#8a8a8a"/><rect x="1254.0" y="753.6" width="1" height="1" fill="#8a8a8a"/><rect x="1262.5" y="753.6" width="1" height="1" fill="#8a8a8a"/><rect x="1271.0" y="753.6" width="1" height="1" fill="#8a8a8a"/><rect x="1279.5" y="753.6" width="1" height="1" fill="#8a8a8a"/><rect x="872.0" y="766.5" width="1" height="1" fill="#8a8a8a"/><rect x="880.5" y="766.5" width="1" height="1" fill="#8a8a8a"/><rect x="889.0" y="766.5" width="1" height="1" fill="#8a8a8a"/><rect x="897.5" y="766.5" width="1" height="1" fill="#8a8a8a"/><rect x="914.4" y="766.5" width="1" height="1" fill="#8a8a8a"/><rect x="922.9" y="766.5" width="1" height="1" fill="#8a8a8a"/><rect x="931.4" y="766.5" width="1" height="1" fill="#8a8a8a"/><rect x="939.9" y="766.5" width="1" height="1" fill="#8a8a8a"/><rect x="956.9" y="766.5" width="1" height="1" fill="#8a8a8a"/><rect x="965.4" y="766.5" width="1" height="1" fill="#8a8a8a"/><rect x="973.9" y="766.5" width="1" height="1" fill="#8a8a8a"/><rect x="982.4" y="766.5" width="1" height="1" fill="#8a8a8a"/><rect x="999.3" y="766.5" width="1" height="1" fill="#8a8a8a"/><rect x="1007.8" y="766.5" width="1" height="1" fill="#8a8a8a"/><rect x="1016.3" y="766.5" width="1" height="1" fill="#8a8a8a"/><rect x="1024.8" y="766.5" width="1" height="1" fill="#8a8a8a"/><rect x="1041.8" y="766.5" width="1" height="1" fill="#8a8a8a"/><rect x="1050.3" y="766.5" width="1" height="1" fill="#8a8a8a"/><rect x="1058.8" y="766.5" width="1" height="1" fill="#8a8a8a"/><rect x="1067.3" y="766.5" width="1" height="1" fill="#8a8a8a"/><rect x="1084.2" y="766.5" width="1" height="1" fill="#8a8a8a"/><rect x="1092.7" y="766.5" width="1" height="1" fill="#8a8a8a"/><rect x="1101.2" y="766.5" width="1" height="1" fill="#8a8a8a"/><rect x="1109.7" y="766.5" width="1" height="1" fill="#8a8a8a"/><rect x="1126.7" y="766.5" width="1" height="1" fill="#8a8a8a"/><rect x="1135.2" y="766.5" width="1" height="1" fill="#8a8a8a"/><rect x="1143.7" y="766.5" width="1" height="1" fill="#8a8a8a"/><rect x="1152.2" y="766.5" width="1" height="1" fill="#8a8a8a"/><rect x="1169.1" y="766.5" width="1" height="1" fill="#8a8a8a"/><rect x="1177.6" y="766.5" width="1" height="1" fill="#8a8a8a"/><rect x="1186.1" y="766.5" width="1" height="1" fill="#8a8a8a"/><rect x="1194.6" y="766.5" width="1" height="1" fill="#8a8a8a"/><rect x="1211.6" y="766.5" width="1" height="1" fill="#8a8a8a"/><rect x="1220.1" y="766.5" width="1" height="1" fill="#8a8a8a"/><rect x="1228.6" y="766.5" width="1" height="1" fill="#8a8a8a"/><rect x="1237.1" y="766.5" width="1" height="1" fill="#8a8a8a"/><rect x="1254.0" y="766.5" width="1" height="1" fill="#8a8a8a"/><rect x="1262.5" y="766.5" width="1" height="1" fill="#8a8a8a"/><rect x="1271.0" y="766.5" width="1" height="1" fill="#8a8a8a"/><rect x="1279.5" y="766.5" width="1" height="1" fill="#8a8a8a"/><rect x="872.0" y="779.4" width="1" height="1" fill="#8a8a8a"/><rect x="880.5" y="779.4" width="1" height="1" fill="#8a8a8a"/><rect x="889.0" y="779.4" width="1" height="1" fill="#8a8a8a"/><rect x="897.5" y="779.4" width="1" height="1" fill="#8a8a8a"/><rect x="914.4" y="779.4" width="1" height="1" fill="#8a8a8a"/><rect x="922.9" y="779.4" width="1" height="1" fill="#8a8a8a"/><rect x="931.4" y="779.4" width="1" height="1" fill="#8a8a8a"/><rect x="939.9" y="779.4" width="1" height="1" fill="#8a8a8a"/><rect x="956.9" y="779.4" width="1" height="1" fill="#8a8a8a"/><rect x="965.4" y="779.4" width="1" height="1" fill="#8a8a8a"/><rect x="973.9" y="779.4" width="1" height="1" fill="#8a8a8a"/><rect x="982.4" y="779.4" width="1" height="1" fill="#8a8a8a"/><rect x="999.3" y="779.4" width="1" height="1" fill="#8a8a8a"/><rect x="1007.8" y="779.4" width="1" height="1" fill="#8a8a8a"/><rect x="1016.3" y="779.4" width="1" height="1" fill="#8a8a8a"/><rect x="1024.8" y="779.4" width="1" height="1" fill="#8a8a8a"/><rect x="1041.8" y="779.4" width="1" height="1" fill="#8a8a8a"/><rect x="1050.3" y="779.4" width="1" height="1" fill="#8a8a8a"/><rect x="1058.8" y="779.4" width="1" height="1" fill="#8a8a8a"/><rect x="1067.3" y="779.4" width="1" height="1" fill="#8a8a8a"/><rect x="1084.2" y="779.4" width="1" height="1" fill="#8a8a8a"/><rect x="1092.7" y="779.4" width="1" height="1" fill="#8a8a8a"/><rect x="1101.2" y="779.4" width="1" height="1" fill="#8a8a8a"/><rect x="1109.7" y="779.4" width="1" height="1" fill="#8a8a8a"/><rect x="1126.7" y="779.4" width="1" height="1" fill="#8a8a8a"/><rect x="1135.2" y="779.4" width="1" height="1" fill="#8a8a8a"/><rect x="1143.7" y="779.4" width="1" height="1" fill="#8a8a8a"/><rect x="1152.2" y="779.4" width="1" height="1" fill="#8a8a8a"/><rect x="1169.1" y="779.4" width="1" height="1" fill="#8a8a8a"/><rect x="1177.6" y="779.4" width="1" height="1" fill="#8a8a8a"/><rect x="1186.1" y="779.4" width="1" height="1" fill="#8a8a8a"/><rect x="1194.6" y="779.4" width="1" height="1" fill="#8a8a8a"/><rect x="1211.6" y="779.4" width="1" height="1" fill="#8a8a8a"/><rect x="1220.1" y="779.4" width="1" height="1" fill="#8a8a8a"/><rect x="1228.6" y="779.4" width="1" height="1" fill="#8a8a8a"/><rect x="1237.1" y="779.4" width="1" height="1" fill="#8a8a8a"/><rect x="1254.0" y="779.4" width="1" height="1" fill="#8a8a8a"/><rect x="1262.5" y="779.4" width="1" height="1" fill="#8a8a8a"/><rect x="1271.0" y="779.4" width="1" height="1" fill="#8a8a8a"/><rect x="1279.5" y="779.4" width="1" height="1" fill="#8a8a8a"/><rect x="872.0" y="792.4" width="1" height="1" fill="#8a8a8a"/><rect x="880.5" y="792.4" width="1" height="1" fill="#8a8a8a"/><rect x="889.0" y="792.4" width="1" height="1" fill="#8a8a8a"/><rect x="897.5" y="792.4" width="1" height="1" fill="#8a8a8a"/><rect x="914.4" y="792.4" width="1" height="1" fill="#8a8a8a"/><rect x="922.9" y="792.4" width="1" height="1" fill="#8a8a8a"/><rect x="931.4" y="792.4" width="1" height="1" fill="#8a8a8a"/><rect x="939.9" y="792.4" width="1" height="1" fill="#8a8a8a"/><rect x="956.9" y="792.4" width="1" height="1" fill="#8a8a8a"/><rect x="965.4" y="792.4" width="1" height="1" fill="#8a8a8a"/><rect x="973.9" y="792.4" width="1" height="1" fill="#8a8a8a"/><rect x="982.4" y="792.4" width="1" height="1" fill="#8a8a8a"/><rect x="999.3" y="792.4" width="1" height="1" fill="#8a8a8a"/><rect x="1007.8" y="792.4" width="1" height="1" fill="#8a8a8a"/><rect x="1016.3" y="792.4" width="1" height="1" fill="#8a8a8a"/><rect x="1024.8" y="792.4" width="1" height="1" fill="#8a8a8a"/><rect x="1041.8" y="792.4" width="1" height="1" fill="#8a8a8a"/><rect x="1050.3" y="792.4" width="1" height="1" fill="#8a8a8a"/><rect x="1058.8" y="792.4" width="1" height="1" fill="#8a8a8a"/><rect x="1067.3" y="792.4" width="1" height="1" fill="#8a8a8a"/><rect x="1084.2" y="792.4" width="1" height="1" fill="#8a8a8a"/><rect x="1092.7" y="792.4" width="1" height="1" fill="#8a8a8a"/><rect x="1101.2" y="792.4" width="1" height="1" fill="#8a8a8a"/><rect x="1109.7" y="792.4" width="1" height="1" fill="#8a8a8a"/><rect x="1126.7" y="792.4" width="1" height="1" fill="#8a8a8a"/><rect x="1135.2" y="792.4" width="1" height="1" fill="#8a8a8a"/><rect x="1143.7" y="792.4" width="1" height="1" fill="#8a8a8a"/><rect x="1152.2" y="792.4" width="1" height="1" fill="#8a8a8a"/><rect x="1169.1" y="792.4" width="1" height="1" fill="#8a8a8a"/><rect x="1177.6" y="792.4" width="1" height="1" fill="#8a8a8a"/><rect x="1186.1" y="792.4" width="1" height="1" fill="#8a8a8a"/><rect x="1194.6" y="792.4" width="1" height="1" fill="#8a8a8a"/><rect x="1211.6" y="792.4" width="1" height="1" fill="#8a8a8a"/><rect x="1220.1" y="792.4" width="1" height="1" fill="#8a8a8a"/><rect x="1228.6" y="792.4" width="1" height="1" fill="#8a8a8a"/><rect x="1237.1" y="792.4" width="1" height="1" fill="#8a8a8a"/><rect x="1254.0" y="792.4" width="1" height="1" fill="#8a8a8a"/><rect x="1262.5" y="792.4" width="1" height="1" fill="#8a8a8a"/><rect x="1271.0" y="792.4" width="1" height="1" fill="#8a8a8a"/><rect x="1279.5" y="792.4" width="1" height="1" fill="#8a8a8a"/><rect x="872.0" y="805.3" width="1" height="1" fill="#8a8a8a"/><rect x="880.5" y="805.3" width="1" height="1" fill="#8a8a8a"/><rect x="889.0" y="805.3" width="1" height="1" fill="#8a8a8a"/><rect x="897.5" y="805.3" width="1" height="1" fill="#8a8a8a"/><rect x="914.4" y="805.3" width="1" height="1" fill="#8a8a8a"/><rect x="922.9" y="805.3" width="1" height="1" fill="#8a8a8a"/><rect x="931.4" y="805.3" width="1" height="1" fill="#8a8a8a"/><rect x="939.9" y="805.3" width="1" height="1" fill="#8a8a8a"/><rect x="956.9" y="805.3" width="1" height="1" fill="#8a8a8a"/><rect x="965.4" y="805.3" width="1" height="1" fill="#8a8a8a"/><rect x="973.9" y="805.3" width="1" height="1" fill="#8a8a8a"/><rect x="982.4" y="805.3" width="1" height="1" fill="#8a8a8a"/><rect x="999.3" y="805.3" width="1" height="1" fill="#8a8a8a"/><rect x="1007.8" y="805.3" width="1" height="1" fill="#8a8a8a"/><rect x="1016.3" y="805.3" width="1" height="1" fill="#8a8a8a"/><rect x="1024.8" y="805.3" width="1" height="1" fill="#8a8a8a"/><rect x="1041.8" y="805.3" width="1" height="1" fill="#8a8a8a"/><rect x="1050.3" y="805.3" width="1" height="1" fill="#8a8a8a"/><rect x="1058.8" y="805.3" width="1" height="1" fill="#8a8a8a"/><rect x="1067.3" y="805.3" width="1" height="1" fill="#8a8a8a"/><rect x="1084.2" y="805.3" width="1" height="1" fill="#8a8a8a"/><rect x="1092.7" y="805.3" width="1" height="1" fill="#8a8a8a"/><rect x="1101.2" y="805.3" width="1" height="1" fill="#8a8a8a"/><rect x="1109.7" y="805.3" width="1" height="1" fill="#8a8a8a"/><rect x="1126.7" y="805.3" width="1" height="1" fill="#8a8a8a"/><rect x="1135.2" y="805.3" width="1" height="1" fill="#8a8a8a"/><rect x="1143.7" y="805.3" width="1" height="1" fill="#8a8a8a"/><rect x="1152.2" y="805.3" width="1" height="1" fill="#8a8a8a"/><rect x="1169.1" y="805.3" width="1" height="1" fill="#8a8a8a"/><rect x="1177.6" y="805.3" width="1" height="1" fill="#8a8a8a"/><rect x="1186.1" y="805.3" width="1" height="1" fill="#8a8a8a"/><rect x="1194.6" y="805.3" width="1" height="1" fill="#8a8a8a"/><rect x="1211.6" y="805.3" width="1" height="1" fill="#8a8a8a"/><rect x="1220.1" y="805.3" width="1" height="1" fill="#8a8a8a"/><rect x="1228.6" y="805.3" width="1" height="1" fill="#8a8a8a"/><rect x="1237.1" y="805.3" width="1" height="1" fill="#8a8a8a"/><rect x="1254.0" y="805.3" width="1" height="1" fill="#8a8a8a"/><rect x="1262.5" y="805.3" width="1" height="1" fill="#8a8a8a"/><rect x="1271.0" y="805.3" width="1" height="1" fill="#8a8a8a"/><rect x="1279.5" y="805.3" width="1" height="1" fill="#8a8a8a"/><rect x="872.0" y="818.3" width="1" height="1" fill="#8a8a8a"/><rect x="880.5" y="818.3" width="1" height="1" fill="#8a8a8a"/><rect x="889.0" y="818.3" width="1" height="1" fill="#8a8a8a"/><rect x="897.5" y="818.3" width="1" height="1" fill="#8a8a8a"/><rect x="914.4" y="818.3" width="1" height="1" fill="#8a8a8a"/><rect x="922.9" y="818.3" width="1" height="1" fill="#8a8a8a"/><rect x="931.4" y="818.3" width="1" height="1" fill="#8a8a8a"/><rect x="939.9" y="818.3" width="1" height="1" fill="#8a8a8a"/><rect x="956.9" y="818.3" width="1" height="1" fill="#8a8a8a"/><rect x="965.4" y="818.3" width="1" height="1" fill="#8a8a8a"/><rect x="973.9" y="818.3" width="1" height="1" fill="#8a8a8a"/><rect x="982.4" y="818.3" width="1" height="1" fill="#8a8a8a"/><rect x="999.3" y="818.3" width="1" height="1" fill="#8a8a8a"/><rect x="1007.8" y="818.3" width="1" height="1" fill="#8a8a8a"/><rect x="1016.3" y="818.3" width="1" height="1" fill="#8a8a8a"/><rect x="1024.8" y="818.3" width="1" height="1" fill="#8a8a8a"/><rect x="1041.8" y="818.3" width="1" height="1" fill="#8a8a8a"/><rect x="1050.3" y="818.3" width="1" height="1" fill="#8a8a8a"/><rect x="1058.8" y="818.3" width="1" height="1" fill="#8a8a8a"/><rect x="1067.3" y="818.3" width="1" height="1" fill="#8a8a8a"/><rect x="1084.2" y="818.3" width="1" height="1" fill="#8a8a8a"/><rect x="1092.7" y="818.3" width="1" height="1" fill="#8a8a8a"/><rect x="1101.2" y="818.3" width="1" height="1" fill="#8a8a8a"/><rect x="1109.7" y="818.3" width="1" height="1" fill="#8a8a8a"/><rect x="1126.7" y="818.3" width="1" height="1" fill="#8a8a8a"/><rect x="1135.2" y="818.3" width="1" height="1" fill="#8a8a8a"/><rect x="1143.7" y="818.3" width="1" height="1" fill="#8a8a8a"/><rect x="1152.2" y="818.3" width="1" height="1" fill="#8a8a8a"/><rect x="1169.1" y="818.3" width="1" height="1" fill="#8a8a8a"/><rect x="1177.6" y="818.3" width="1" height="1" fill="#8a8a8a"/><rect x="1186.1" y="818.3" width="1" height="1" fill="#8a8a8a"/><rect x="1194.6" y="818.3" width="1" height="1" fill="#8a8a8a"/><rect x="1211.6" y="818.3" width="1" height="1" fill="#8a8a8a"/><rect x="1220.1" y="818.3" width="1" height="1" fill="#8a8a8a"/><rect x="1228.6" y="818.3" width="1" height="1" fill="#8a8a8a"/><rect x="1237.1" y="818.3" width="1" height="1" fill="#8a8a8a"/><rect x="1254.0" y="818.3" width="1" height="1" fill="#8a8a8a"/><rect x="1262.5" y="818.3" width="1" height="1" fill="#8a8a8a"/><rect x="1271.0" y="818.3" width="1" height="1" fill="#8a8a8a"/><rect x="1279.5" y="818.3" width="1" height="1" fill="#8a8a8a"/><line x1="906.5" y1="57" x2="906.5" y2="827" stroke="#8c8c8c" stroke-width="1" stroke-dasharray="1,1.65"/><line x1="948.9" y1="57" x2="948.9" y2="827" stroke="#8c8c8c" stroke-width="1" stroke-dasharray="1,1.65"/><line x1="991.4" y1="57" x2="991.4" y2="827" stroke="#8c8c8c" stroke-width="1" stroke-dasharray="1,1.65"/><line x1="1033.8" y1="57" x2="1033.8" y2="827" stroke="#8c8c8c" stroke-width="1" stroke-dasharray="1,1.65"/><line x1="1118.7" y1="57" x2="1118.7" y2="827" stroke="#8c8c8c" stroke-width="1" stroke-dasharray="1,1.65"/><line x1="1161.2" y1="57" x2="1161.2" y2="827" stroke="#8c8c8c" stroke-width="1" stroke-dasharray="1,1.65"/><line x1="1203.6" y1="57" x2="1203.6" y2="827" stroke="#8c8c8c" stroke-width="1" stroke-dasharray="1,1.65"/><line x1="1246.0" y1="57" x2="1246.0" y2="827" stroke="#8c8c8c" stroke-width="1" stroke-dasharray="1,1.65"/><line x1="864.5" y1="57" x2="864.5" y2="827" stroke="#8c8c8c" stroke-width="1" stroke-dasharray="1,1.65"/><line x1="864.0" y1="120.3" x2="1288.5" y2="120.3" stroke="#f2ef00" stroke-width="1.2"/><path d="M837.70 120.3V95.0M830.60 142.8V161.7M858.90 120.3V92.3M851.80 142.8V161.0M880.10 120.3V93.2M873.00 142.8V163.6M861.10 120.3V72.8M901.30 120.3V97.3M894.20 142.8V164.9M922.50 120.3V97.5M915.40 142.8V164.2M943.70 120.3V97.2M936.60 142.8V161.1M924.70 120.3V72.8M964.90 120.3V94.2M957.80 142.8V167.7M986.10 120.3V96.7M979.00 142.8V162.3M1007.30 120.3V92.5M1000.20 142.8V168.8M988.30 120.3V72.8M1028.50 120.3V92.9M1021.40 142.8V163.9M1049.70 120.3V89.5M1042.60 142.8V160.7M1070.90 120.3V90.5M1063.80 142.8V162.9M1051.90 120.3V72.8M1092.10 120.3V96.6M1085.00 142.8V161.4M1113.30 120.3V95.2M1106.20 142.8V167.6M1134.50 120.3V96.3M1127.40 142.8V165.5M1115.50 120.3V72.8M1155.70 120.3V92.4M1148.60 142.8V163.7M1176.90 120.3V93.1M1169.80 142.8V160.9M1198.10 120.3V97.3M1191.00 142.8V162.2M1179.10 120.3V72.8M1219.30 120.3V92.0M1212.20 142.8V164.1M1240.50 120.3V95.1M1233.40 142.8V165.6M1261.70 120.3V93.9M1254.60 142.8V163.0M1242.70 120.3V72.8M1282.90 120.3V91.0M1275.80 142.8V166.6M1304.10 120.3V95.7M1297.00 142.8V165.5" stroke="#8a8400" stroke-width="1" fill="none"/><path d="M820.10 120.3 L820.45 111.3 L820.80 100.3 L821.10 95.3 L822.40 94.3 L822.70 70.3 L827.90 70.3 L828.10 93.3 L828.80 96.3 L829.60 104.3 L830.30 114.3 L830.80 120.3 L831.00 145.3 L833.40 145.3 L833.60 170.3 L838.60 170.3 L838.90 145.3 L841.00 144.3 L841.30 135.3 L841.60 120.3ZM835.60 120.3 L839.60 113.8 L841.40 120.3ZM841.30 120.3 L841.65 111.3 L842.00 100.3 L842.30 95.3 L843.60 94.3 L843.90 70.3 L849.10 70.3 L849.30 93.3 L850.00 96.3 L850.80 104.3 L851.50 114.3 L852.00 120.3 L852.20 145.3 L854.60 145.3 L854.80 170.3 L859.80 170.3 L860.10 145.3 L862.20 144.3 L862.50 135.3 L862.80 120.3ZM856.80 120.3 L860.80 113.8 L862.60 120.3ZM862.50 120.3 L862.85 111.3 L863.20 100.3 L863.50 95.3 L864.80 94.3 L865.10 70.3 L870.30 70.3 L870.50 93.3 L871.20 96.3 L872.00 104.3 L872.70 114.3 L873.20 120.3 L873.40 145.3 L875.80 145.3 L876.00 170.3 L881.00 170.3 L881.30 145.3 L883.40 144.3 L883.70 135.3 L884.00 120.3ZM878.00 120.3 L882.00 113.8 L883.80 120.3ZM883.70 120.3 L884.05 111.3 L884.40 100.3 L884.70 95.3 L886.00 94.3 L886.30 70.3 L891.50 70.3 L891.70 93.3 L892.40 96.3 L893.20 104.3 L893.90 114.3 L894.40 120.3 L894.60 145.3 L897.00 145.3 L897.20 170.3 L902.20 170.3 L902.50 145.3 L904.60 144.3 L904.90 135.3 L905.20 120.3ZM899.20 120.3 L903.20 113.8 L905.00 120.3ZM904.90 120.3 L905.25 111.3 L905.60 100.3 L905.90 95.3 L907.20 94.3 L907.50 70.3 L912.70 70.3 L912.90 93.3 L913.60 96.3 L914.40 104.3 L915.10 114.3 L915.60 120.3 L915.80 145.3 L918.20 145.3 L918.40 170.3 L923.40 170.3 L923.70 145.3 L925.80 144.3 L926.10 135.3 L926.40 120.3ZM920.40 120.3 L924.40 113.8 L926.20 120.3ZM926.10 120.3 L926.45 111.3 L926.80 100.3 L927.10 95.3 L928.40 94.3 L928.70 70.3 L933.90 70.3 L934.10 93.3 L934.80 96.3 L935.60 104.3 L936.30 114.3 L936.80 120.3 L937.00 145.3 L939.40 145.3 L939.60 170.3 L944.60 170.3 L944.90 145.3 L947.00 144.3 L947.30 135.3 L947.60 120.3ZM941.60 120.3 L945.60 113.8 L947.40 120.3ZM947.30 120.3 L947.65 111.3 L948.00 100.3 L948.30 95.3 L949.60 94.3 L949.90 70.3 L955.10 70.3 L955.30 93.3 L956.00 96.3 L956.80 104.3 L957.50 114.3 L958.00 120.3 L958.20 145.3 L960.60 145.3 L960.80 170.3 L965.80 170.3 L966.10 145.3 L968.20 144.3 L968.50 135.3 L968.80 120.3ZM962.80 120.3 L966.80 113.8 L968.60 120.3ZM968.50 120.3 L968.85 111.3 L969.20 100.3 L969.50 95.3 L970.80 94.3 L971.10 70.3 L976.30 70.3 L976.50 93.3 L977.20 96.3 L978.00 104.3 L978.70 114.3 L979.20 120.3 L979.40 145.3 L981.80 145.3 L982.00 170.3 L987.00 170.3 L987.30 145.3 L989.40 144.3 L989.70 135.3 L990.00 120.3ZM984.00 120.3 L988.00 113.8 L989.80 120.3ZM989.70 120.3 L990.05 111.3 L990.40 100.3 L990.70 95.3 L992.00 94.3 L992.30 70.3 L997.50 70.3 L997.70 93.3 L998.40 96.3 L999.20 104.3 L999.90 114.3 L1000.40 120.3 L1000.60 145.3 L1003.00 145.3 L1003.20 170.3 L1008.20 170.3 L1008.50 145.3 L1010.60 144.3 L1010.90 135.3 L1011.20 120.3ZM1005.20 120.3 L1009.20 113.8 L1011.00 120.3ZM1010.90 120.3 L1011.25 111.3 L1011.60 100.3 L1011.90 95.3 L1013.20 94.3 L1013.50 70.3 L1018.70 70.3 L1018.90 93.3 L1019.60 96.3 L1020.40 104.3 L1021.10 114.3 L1021.60 120.3 L1021.80 145.3 L1024.20 145.3 L1024.40 170.3 L1029.40 170.3 L1029.70 145.3 L1031.80 144.3 L1032.10 135.3 L1032.40 120.3ZM1026.40 120.3 L1030.40 113.8 L1032.20 120.3ZM1032.10 120.3 L1032.45 111.3 L1032.80 100.3 L1033.10 95.3 L1034.40 94.3 L1034.70 70.3 L1039.90 70.3 L1040.10 93.3 L1040.80 96.3 L1041.60 104.3 L1042.30 114.3 L1042.80 120.3 L1043.00 145.3 L1045.40 145.3 L1045.60 170.3 L1050.60 170.3 L1050.90 145.3 L1053.00 144.3 L1053.30 135.3 L1053.60 120.3ZM1047.60 120.3 L1051.60 113.8 L1053.40 120.3ZM1053.30 120.3 L1053.65 111.3 L1054.00 100.3 L1054.30 95.3 L1055.60 94.3 L1055.90 70.3 L1061.10 70.3 L1061.30 93.3 L1062.00 96.3 L1062.80 104.3 L1063.50 114.3 L1064.00 120.3 L1064.20 145.3 L1066.60 145.3 L1066.80 170.3 L1071.80 170.3 L1072.10 145.3 L1074.20 144.3 L1074.50 135.3 L1074.80 120.3ZM1068.80 120.3 L1072.80 113.8 L1074.60 120.3ZM1074.50 120.3 L1074.85 111.3 L1075.20 100.3 L1075.50 95.3 L1076.80 94.3 L1077.10 70.3 L1082.30 70.3 L1082.50 93.3 L1083.20 96.3 L1084.00 104.3 L1084.70 114.3 L1085.20 120.3 L1085.40 145.3 L1087.80 145.3 L1088.00 170.3 L1093.00 170.3 L1093.30 145.3 L1095.40 144.3 L1095.70 135.3 L1096.00 120.3ZM1090.00 120.3 L1094.00 113.8 L1095.80 120.3ZM1095.70 120.3 L1096.05 111.3 L1096.40 100.3 L1096.70 95.3 L1098.00 94.3 L1098.30 70.3 L1103.50 70.3 L1103.70 93.3 L1104.40 96.3 L1105.20 104.3 L1105.90 114.3 L1106.40 120.3 L1106.60 145.3 L1109.00 145.3 L1109.20 170.3 L1114.20 170.3 L1114.50 145.3 L1116.60 144.3 L1116.90 135.3 L1117.20 120.3ZM1111.20 120.3 L1115.20 113.8 L1117.00 120.3ZM1116.90 120.3 L1117.25 111.3 L1117.60 100.3 L1117.90 95.3 L1119.20 94.3 L1119.50 70.3 L1124.70 70.3 L1124.90 93.3 L1125.60 96.3 L1126.40 104.3 L1127.10 114.3 L1127.60 120.3 L1127.80 145.3 L1130.20 145.3 L1130.40 170.3 L1135.40 170.3 L1135.70 145.3 L1137.80 144.3 L1138.10 135.3 L1138.40 120.3ZM1132.40 120.3 L1136.40 113.8 L1138.20 120.3ZM1138.10 120.3 L1138.45 111.3 L1138.80 100.3 L1139.10 95.3 L1140.40 94.3 L1140.70 70.3 L1145.90 70.3 L1146.10 93.3 L1146.80 96.3 L1147.60 104.3 L1148.30 114.3 L1148.80 120.3 L1149.00 145.3 L1151.40 145.3 L1151.60 170.3 L1156.60 170.3 L1156.90 145.3 L1159.00 144.3 L1159.30 135.3 L1159.60 120.3ZM1153.60 120.3 L1157.60 113.8 L1159.40 120.3ZM1159.30 120.3 L1159.65 111.3 L1160.00 100.3 L1160.30 95.3 L1161.60 94.3 L1161.90 70.3 L1167.10 70.3 L1167.30 93.3 L1168.00 96.3 L1168.80 104.3 L1169.50 114.3 L1170.00 120.3 L1170.20 145.3 L1172.60 145.3 L1172.80 170.3 L1177.80 170.3 L1178.10 145.3 L1180.20 144.3 L1180.50 135.3 L1180.80 120.3ZM1174.80 120.3 L1178.80 113.8 L1180.60 120.3ZM1180.50 120.3 L1180.85 111.3 L1181.20 100.3 L1181.50 95.3 L1182.80 94.3 L1183.10 70.3 L1188.30 70.3 L1188.50 93.3 L1189.20 96.3 L1190.00 104.3 L1190.70 114.3 L1191.20 120.3 L1191.40 145.3 L1193.80 145.3 L1194.00 170.3 L1199.00 170.3 L1199.30 145.3 L1201.40 144.3 L1201.70 135.3 L1202.00 120.3ZM1196.00 120.3 L1200.00 113.8 L1201.80 120.3ZM1201.70 120.3 L1202.05 111.3 L1202.40 100.3 L1202.70 95.3 L1204.00 94.3 L1204.30 70.3 L1209.50 70.3 L1209.70 93.3 L1210.40 96.3 L1211.20 104.3 L1211.90 114.3 L1212.40 120.3 L1212.60 145.3 L1215.00 145.3 L1215.20 170.3 L1220.20 170.3 L1220.50 145.3 L1222.60 144.3 L1222.90 135.3 L1223.20 120.3ZM1217.20 120.3 L1221.20 113.8 L1223.00 120.3ZM1222.90 120.3 L1223.25 111.3 L1223.60 100.3 L1223.90 95.3 L1225.20 94.3 L1225.50 70.3 L1230.70 70.3 L1230.90 93.3 L1231.60 96.3 L1232.40 104.3 L1233.10 114.3 L1233.60 120.3 L1233.80 145.3 L1236.20 145.3 L1236.40 170.3 L1241.40 170.3 L1241.70 145.3 L1243.80 144.3 L1244.10 135.3 L1244.40 120.3ZM1238.40 120.3 L1242.40 113.8 L1244.20 120.3ZM1244.10 120.3 L1244.45 111.3 L1244.80 100.3 L1245.10 95.3 L1246.40 94.3 L1246.70 70.3 L1251.90 70.3 L1252.10 93.3 L1252.80 96.3 L1253.60 104.3 L1254.30 114.3 L1254.80 120.3 L1255.00 145.3 L1257.40 145.3 L1257.60 170.3 L1262.60 170.3 L1262.90 145.3 L1265.00 144.3 L1265.30 135.3 L1265.60 120.3ZM1259.60 120.3 L1263.60 113.8 L1265.40 120.3ZM1265.30 120.3 L1265.65 111.3 L1266.00 100.3 L1266.30 95.3 L1267.60 94.3 L1267.90 70.3 L1273.10 70.3 L1273.30 93.3 L1274.00 96.3 L1274.80 104.3 L1275.50 114.3 L1276.00 120.3 L1276.20 145.3 L1278.60 145.3 L1278.80 170.3 L1283.80 170.3 L1284.10 145.3 L1286.20 144.3 L1286.50 135.3 L1286.80 120.3ZM1280.80 120.3 L1284.80 113.8 L1286.60 120.3ZM1286.50 120.3 L1286.85 111.3 L1287.20 100.3 L1287.50 95.3 L1288.80 94.3 L1289.10 70.3 L1294.30 70.3 L1294.50 93.3 L1295.20 96.3 L1296.00 104.3 L1296.70 114.3 L1297.20 120.3 L1297.40 145.3 L1299.80 145.3 L1300.00 170.3 L1305.00 170.3 L1305.30 145.3 L1307.40 144.3 L1307.70 135.3 L1308.00 120.3ZM1302.00 120.3 L1306.00 113.8 L1307.80 120.3Z" fill="#f2ef00"/><line x1="864.0" y1="120.3" x2="1288.5" y2="120.3" stroke="#b0b0b0" stroke-width="1" stroke-dasharray="4,6" opacity="0.5"/><line x1="864.0" y1="246.6" x2="1288.5" y2="246.6" stroke="#1cb0b8" stroke-width="1.2"/><path d="M823.10 246.6V273.3M844.40 246.6V278.2M844.30 246.6V274.0M865.60 246.6V273.5M865.50 246.6V272.6M886.80 246.6V273.8M886.70 246.6V268.1M908.00 246.6V277.7M907.90 246.6V271.4M929.20 246.6V279.3M929.10 246.6V272.2M950.40 246.6V277.2M950.30 246.6V270.7M971.60 246.6V279.0M971.50 246.6V270.8M992.80 246.6V277.7M992.70 246.6V272.2M1014.00 246.6V277.6M1013.90 246.6V273.0M1035.20 246.6V274.8M1035.10 246.6V272.0M1056.40 246.6V272.8M1056.30 246.6V268.9M1077.60 246.6V273.5M1077.50 246.6V272.6M1098.80 246.6V273.6M1098.70 246.6V270.3M1120.00 246.6V279.3M1119.90 246.6V270.6M1141.20 246.6V276.8M1141.10 246.6V273.0M1162.40 246.6V279.2M1162.30 246.6V270.4M1183.60 246.6V275.4M1183.50 246.6V273.8M1204.80 246.6V273.8M1204.70 246.6V269.3M1226.00 246.6V274.4M1225.90 246.6V271.5M1247.20 246.6V274.6M1247.10 246.6V270.5M1268.40 246.6V275.4M1268.30 246.6V273.8M1289.60 246.6V277.9M1289.50 246.6V271.7M1310.80 246.6V277.8" stroke="#1cb0b8" stroke-width="1" fill="none"/><path d="M823.60 246.6V212.4L829.70 209.8L830.20 202.2L830.70 208.9H830.90V246.6ZM834.50 246.6V280.6H837.10L837.80 294.0L838.50 280.6H841.60V246.6ZM844.80 246.6V213.1L850.90 210.5L851.40 202.2L851.90 208.9H852.10V246.6ZM855.70 246.6V280.6H858.30L859.00 294.0L859.70 280.6H862.80V246.6ZM866.00 246.6V212.7L872.10 210.1L872.60 202.2L873.10 208.9H873.30V246.6ZM876.90 246.6V280.6H879.50L880.20 294.0L880.90 280.6H884.00V246.6ZM887.20 246.6V212.5L893.30 209.9L893.80 202.2L894.30 208.9H894.50V246.6ZM898.10 246.6V280.6H900.70L901.40 294.0L902.10 280.6H905.20V246.6ZM908.40 246.6V211.6L914.50 209.1L915.00 202.2L915.50 208.9H915.70V246.6ZM919.30 246.6V280.6H921.90L922.60 294.0L923.30 280.6H926.40V246.6ZM929.60 246.6V213.0L935.70 210.4L936.20 202.2L936.70 208.9H936.90V246.6ZM940.50 246.6V280.6H943.10L943.80 294.0L944.50 280.6H947.60V246.6ZM950.80 246.6V212.2L956.90 209.6L957.40 202.2L957.90 208.9H958.10V246.6ZM961.70 246.6V280.6H964.30L965.00 294.0L965.70 280.6H968.80V246.6ZM972.00 246.6V211.1L978.10 208.5L978.60 202.2L979.10 208.9H979.30V246.6ZM982.90 246.6V280.6H985.50L986.20 294.0L986.90 280.6H990.00V246.6ZM993.20 246.6V213.8L999.30 211.2L999.80 202.2L1000.30 208.9H1000.50V246.6ZM1004.10 246.6V280.6H1006.70L1007.40 294.0L1008.10 280.6H1011.20V246.6ZM1014.40 246.6V210.9L1020.50 208.4L1021.00 202.2L1021.50 208.9H1021.70V246.6ZM1025.30 246.6V280.6H1027.90L1028.60 294.0L1029.30 280.6H1032.40V246.6ZM1035.60 246.6V212.8L1041.70 210.2L1042.20 202.2L1042.70 208.9H1042.90V246.6ZM1046.50 246.6V280.6H1049.10L1049.80 294.0L1050.50 280.6H1053.60V246.6ZM1056.80 246.6V212.5L1062.90 210.0L1063.40 202.2L1063.90 208.9H1064.10V246.6ZM1067.70 246.6V280.6H1070.30L1071.00 294.0L1071.70 280.6H1074.80V246.6ZM1078.00 246.6V213.8L1084.10 211.2L1084.60 202.2L1085.10 208.9H1085.30V246.6ZM1088.90 246.6V280.6H1091.50L1092.20 294.0L1092.90 280.6H1096.00V246.6ZM1099.20 246.6V213.2L1105.30 210.7L1105.80 202.2L1106.30 208.9H1106.50V246.6ZM1110.10 246.6V280.6H1112.70L1113.40 294.0L1114.10 280.6H1117.20V246.6ZM1120.40 246.6V213.7L1126.50 211.2L1127.00 202.2L1127.50 208.9H1127.70V246.6ZM1131.30 246.6V280.6H1133.90L1134.60 294.0L1135.30 280.6H1138.40V246.6ZM1141.60 246.6V211.3L1147.70 208.7L1148.20 202.2L1148.70 208.9H1148.90V246.6ZM1152.50 246.6V280.6H1155.10L1155.80 294.0L1156.50 280.6H1159.60V246.6ZM1162.80 246.6V213.1L1168.90 210.6L1169.40 202.2L1169.90 208.9H1170.10V246.6ZM1173.70 246.6V280.6H1176.30L1177.00 294.0L1177.70 280.6H1180.80V246.6ZM1184.00 246.6V211.3L1190.10 208.7L1190.60 202.2L1191.10 208.9H1191.30V246.6ZM1194.90 246.6V280.6H1197.50L1198.20 294.0L1198.90 280.6H1202.00V246.6ZM1205.20 246.6V213.4L1211.30 210.9L1211.80 202.2L1212.30 208.9H1212.50V246.6ZM1216.10 246.6V280.6H1218.70L1219.40 294.0L1220.10 280.6H1223.20V246.6ZM1226.40 246.6V212.5L1232.50 209.9L1233.00 202.2L1233.50 208.9H1233.70V246.6ZM1237.30 246.6V280.6H1239.90L1240.60 294.0L1241.30 280.6H1244.40V246.6ZM1247.60 246.6V213.9L1253.70 211.4L1254.20 202.2L1254.70 208.9H1254.90V246.6ZM1258.50 246.6V280.6H1261.10L1261.80 294.0L1262.50 280.6H1265.60V246.6ZM1268.80 246.6V212.2L1274.90 209.7L1275.40 202.2L1275.90 208.9H1276.10V246.6ZM1279.70 246.6V280.6H1282.30L1283.00 294.0L1283.70 280.6H1286.80V246.6ZM1290.00 246.6V212.4L1296.10 209.8L1296.60 202.2L1297.10 208.9H1297.30V246.6ZM1300.90 246.6V280.6H1303.50L1304.20 294.0L1304.90 280.6H1308.00V246.6Z" fill="#1cb0b8"/><line x1="864.0" y1="246.6" x2="1288.5" y2="246.6" stroke="#b0b0b0" stroke-width="1" stroke-dasharray="4,6" opacity="0.5"/><line x1="864.0" y1="376.4" x2="1288.5" y2="376.4" stroke="#e61e40" stroke-width="1.2"/><path d="M844.80 376.4V353.8M837.70 398.6V423.8M866.00 376.4V347.7M858.90 398.6V423.6M887.20 376.4V347.5M880.10 398.6V419.3M868.20 376.4V329.6M908.40 376.4V350.9M901.30 398.6V416.8M929.60 376.4V348.9M922.50 398.6V416.4M950.80 376.4V353.7M943.70 398.6V417.7M931.80 376.4V329.6M972.00 376.4V352.9M964.90 398.6V418.9M993.20 376.4V353.8M986.10 398.6V415.8M1014.40 376.4V352.9M1007.30 398.6V416.7M995.40 376.4V329.6M1035.60 376.4V351.2M1028.50 398.6V416.1M1056.80 376.4V346.9M1049.70 398.6V421.3M1078.00 376.4V353.0M1070.90 398.6V418.1M1059.00 376.4V329.6M1099.20 376.4V351.3M1092.10 398.6V419.1M1120.40 376.4V353.2M1113.30 398.6V423.4M1141.60 376.4V345.9M1134.50 398.6V420.0M1122.60 376.4V329.6M1162.80 376.4V350.2M1155.70 398.6V416.6M1184.00 376.4V353.4M1176.90 398.6V418.9M1205.20 376.4V352.0M1198.10 398.6V423.2M1186.20 376.4V329.6M1226.40 376.4V352.9M1219.30 398.6V416.0M1247.60 376.4V346.2M1240.50 398.6V420.5M1268.80 376.4V353.0M1261.70 398.6V420.7M1249.80 376.4V329.6M1290.00 376.4V354.0M1282.90 398.6V420.5" stroke="#7a1020" stroke-width="1" fill="none"/><path d="M827.20 376.4 L827.55 367.5 L827.90 356.7 L828.20 351.8 L829.50 350.8 L829.80 327.1 L835.00 327.1 L835.20 349.8 L835.90 352.7 L836.70 360.6 L837.40 370.5 L837.90 376.4 L838.10 401.0 L840.50 401.0 L840.70 425.7 L845.70 425.7 L846.00 401.0 L848.10 400.1 L848.40 391.2 L848.70 376.4ZM842.70 376.4 L846.70 370.0 L848.50 376.4ZM848.40 376.4 L848.75 367.5 L849.10 356.7 L849.40 351.8 L850.70 350.8 L851.00 327.1 L856.20 327.1 L856.40 349.8 L857.10 352.7 L857.90 360.6 L858.60 370.5 L859.10 376.4 L859.30 401.0 L861.70 401.0 L861.90 425.7 L866.90 425.7 L867.20 401.0 L869.30 400.1 L869.60 391.2 L869.90 376.4ZM863.90 376.4 L867.90 370.0 L869.70 376.4ZM869.60 376.4 L869.95 367.5 L870.30 356.7 L870.60 351.8 L871.90 350.8 L872.20 327.1 L877.40 327.1 L877.60 349.8 L878.30 352.7 L879.10 360.6 L879.80 370.5 L880.30 376.4 L880.50 401.0 L882.90 401.0 L883.10 425.7 L888.10 425.7 L888.40 401.0 L890.50 400.1 L890.80 391.2 L891.10 376.4ZM885.10 376.4 L889.10 370.0 L890.90 376.4ZM890.80 376.4 L891.15 367.5 L891.50 356.7 L891.80 351.8 L893.10 350.8 L893.40 327.1 L898.60 327.1 L898.80 349.8 L899.50 352.7 L900.30 360.6 L901.00 370.5 L901.50 376.4 L901.70 401.0 L904.10 401.0 L904.30 425.7 L909.30 425.7 L909.60 401.0 L911.70 400.1 L912.00 391.2 L912.30 376.4ZM906.30 376.4 L910.30 370.0 L912.10 376.4ZM912.00 376.4 L912.35 367.5 L912.70 356.7 L913.00 351.8 L914.30 350.8 L914.60 327.1 L919.80 327.1 L920.00 349.8 L920.70 352.7 L921.50 360.6 L922.20 370.5 L922.70 376.4 L922.90 401.0 L925.30 401.0 L925.50 425.7 L930.50 425.7 L930.80 401.0 L932.90 400.1 L933.20 391.2 L933.50 376.4ZM927.50 376.4 L931.50 370.0 L933.30 376.4ZM933.20 376.4 L933.55 367.5 L933.90 356.7 L934.20 351.8 L935.50 350.8 L935.80 327.1 L941.00 327.1 L941.20 349.8 L941.90 352.7 L942.70 360.6 L943.40 370.5 L943.90 376.4 L944.10 401.0 L946.50 401.0 L946.70 425.7 L951.70 425.7 L952.00 401.0 L954.10 400.1 L954.40 391.2 L954.70 376.4ZM948.70 376.4 L952.70 370.0 L954.50 376.4ZM954.40 376.4 L954.75 367.5 L955.10 356.7 L955.40 351.8 L956.70 350.8 L957.00 327.1 L962.20 327.1 L962.40 349.8 L963.10 352.7 L963.90 360.6 L964.60 370.5 L965.10 376.4 L965.30 401.0 L967.70 401.0 L967.90 425.7 L972.90 425.7 L973.20 401.0 L975.30 400.1 L975.60 391.2 L975.90 376.4ZM969.90 376.4 L973.90 370.0 L975.70 376.4ZM975.60 376.4 L975.95 367.5 L976.30 356.7 L976.60 351.8 L977.90 350.8 L978.20 327.1 L983.40 327.1 L983.60 349.8 L984.30 352.7 L985.10 360.6 L985.80 370.5 L986.30 376.4 L986.50 401.0 L988.90 401.0 L989.10 425.7 L994.10 425.7 L994.40 401.0 L996.50 400.1 L996.80 391.2 L997.10 376.4ZM991.10 376.4 L995.10 370.0 L996.90 376.4ZM996.80 376.4 L997.15 367.5 L997.50 356.7 L997.80 351.8 L999.10 350.8 L999.40 327.1 L1004.60 327.1 L1004.80 349.8 L1005.50 352.7 L1006.30 360.6 L1007.00 370.5 L1007.50 376.4 L1007.70 401.0 L1010.10 401.0 L1010.30 425.7 L1015.30 425.7 L1015.60 401.0 L1017.70 400.1 L1018.00 391.2 L1018.30 376.4ZM1012.30 376.4 L1016.30 370.0 L1018.10 376.4ZM1018.00 376.4 L1018.35 367.5 L1018.70 356.7 L1019.00 351.8 L1020.30 350.8 L1020.60 327.1 L1025.80 327.1 L1026.00 349.8 L1026.70 352.7 L1027.50 360.6 L1028.20 370.5 L1028.70 376.4 L1028.90 401.0 L1031.30 401.0 L1031.50 425.7 L1036.50 425.7 L1036.80 401.0 L1038.90 400.1 L1039.20 391.2 L1039.50 376.4ZM1033.50 376.4 L1037.50 370.0 L1039.30 376.4ZM1039.20 376.4 L1039.55 367.5 L1039.90 356.7 L1040.20 351.8 L1041.50 350.8 L1041.80 327.1 L1047.00 327.1 L1047.20 349.8 L1047.90 352.7 L1048.70 360.6 L1049.40 370.5 L1049.90 376.4 L1050.10 401.0 L1052.50 401.0 L1052.70 425.7 L1057.70 425.7 L1058.00 401.0 L1060.10 400.1 L1060.40 391.2 L1060.70 376.4ZM1054.70 376.4 L1058.70 370.0 L1060.50 376.4ZM1060.40 376.4 L1060.75 367.5 L1061.10 356.7 L1061.40 351.8 L1062.70 350.8 L1063.00 327.1 L1068.20 327.1 L1068.40 349.8 L1069.10 352.7 L1069.90 360.6 L1070.60 370.5 L1071.10 376.4 L1071.30 401.0 L1073.70 401.0 L1073.90 425.7 L1078.90 425.7 L1079.20 401.0 L1081.30 400.1 L1081.60 391.2 L1081.90 376.4ZM1075.90 376.4 L1079.90 370.0 L1081.70 376.4ZM1081.60 376.4 L1081.95 367.5 L1082.30 356.7 L1082.60 351.8 L1083.90 350.8 L1084.20 327.1 L1089.40 327.1 L1089.60 349.8 L1090.30 352.7 L1091.10 360.6 L1091.80 370.5 L1092.30 376.4 L1092.50 401.0 L1094.90 401.0 L1095.10 425.7 L1100.10 425.7 L1100.40 401.0 L1102.50 400.1 L1102.80 391.2 L1103.10 376.4ZM1097.10 376.4 L1101.10 370.0 L1102.90 376.4ZM1102.80 376.4 L1103.15 367.5 L1103.50 356.7 L1103.80 351.8 L1105.10 350.8 L1105.40 327.1 L1110.60 327.1 L1110.80 349.8 L1111.50 352.7 L1112.30 360.6 L1113.00 370.5 L1113.50 376.4 L1113.70 401.0 L1116.10 401.0 L1116.30 425.7 L1121.30 425.7 L1121.60 401.0 L1123.70 400.1 L1124.00 391.2 L1124.30 376.4ZM1118.30 376.4 L1122.30 370.0 L1124.10 376.4ZM1124.00 376.4 L1124.35 367.5 L1124.70 356.7 L1125.00 351.8 L1126.30 350.8 L1126.60 327.1 L1131.80 327.1 L1132.00 349.8 L1132.70 352.7 L1133.50 360.6 L1134.20 370.5 L1134.70 376.4 L1134.90 401.0 L1137.30 401.0 L1137.50 425.7 L1142.50 425.7 L1142.80 401.0 L1144.90 400.1 L1145.20 391.2 L1145.50 376.4ZM1139.50 376.4 L1143.50 370.0 L1145.30 376.4ZM1145.20 376.4 L1145.55 367.5 L1145.90 356.7 L1146.20 351.8 L1147.50 350.8 L1147.80 327.1 L1153.00 327.1 L1153.20 349.8 L1153.90 352.7 L1154.70 360.6 L1155.40 370.5 L1155.90 376.4 L1156.10 401.0 L1158.50 401.0 L1158.70 425.7 L1163.70 425.7 L1164.00 401.0 L1166.10 400.1 L1166.40 391.2 L1166.70 376.4ZM1160.70 376.4 L1164.70 370.0 L1166.50 376.4ZM1166.40 376.4 L1166.75 367.5 L1167.10 356.7 L1167.40 351.8 L1168.70 350.8 L1169.00 327.1 L1174.20 327.1 L1174.40 349.8 L1175.10 352.7 L1175.90 360.6 L1176.60 370.5 L1177.10 376.4 L1177.30 401.0 L1179.70 401.0 L1179.90 425.7 L1184.90 425.7 L1185.20 401.0 L1187.30 400.1 L1187.60 391.2 L1187.90 376.4ZM1181.90 376.4 L1185.90 370.0 L1187.70 376.4ZM1187.60 376.4 L1187.95 367.5 L1188.30 356.7 L1188.60 351.8 L1189.90 350.8 L1190.20 327.1 L1195.40 327.1 L1195.60 349.8 L1196.30 352.7 L1197.10 360.6 L1197.80 370.5 L1198.30 376.4 L1198.50 401.0 L1200.90 401.0 L1201.10 425.7 L1206.10 425.7 L1206.40 401.0 L1208.50 400.1 L1208.80 391.2 L1209.10 376.4ZM1203.10 376.4 L1207.10 370.0 L1208.90 376.4ZM1208.80 376.4 L1209.15 367.5 L1209.50 356.7 L1209.80 351.8 L1211.10 350.8 L1211.40 327.1 L1216.60 327.1 L1216.80 349.8 L1217.50 352.7 L1218.30 360.6 L1219.00 370.5 L1219.50 376.4 L1219.70 401.0 L1222.10 401.0 L1222.30 425.7 L1227.30 425.7 L1227.60 401.0 L1229.70 400.1 L1230.00 391.2 L1230.30 376.4ZM1224.30 376.4 L1228.30 370.0 L1230.10 376.4ZM1230.00 376.4 L1230.35 367.5 L1230.70 356.7 L1231.00 351.8 L1232.30 350.8 L1232.60 327.1 L1237.80 327.1 L1238.00 349.8 L1238.70 352.7 L1239.50 360.6 L1240.20 370.5 L1240.70 376.4 L1240.90 401.0 L1243.30 401.0 L1243.50 425.7 L1248.50 425.7 L1248.80 401.0 L1250.90 400.1 L1251.20 391.2 L1251.50 376.4ZM1245.50 376.4 L1249.50 370.0 L1251.30 376.4ZM1251.20 376.4 L1251.55 367.5 L1251.90 356.7 L1252.20 351.8 L1253.50 350.8 L1253.80 327.1 L1259.00 327.1 L1259.20 349.8 L1259.90 352.7 L1260.70 360.6 L1261.40 370.5 L1261.90 376.4 L1262.10 401.0 L1264.50 401.0 L1264.70 425.7 L1269.70 425.7 L1270.00 401.0 L1272.10 400.1 L1272.40 391.2 L1272.70 376.4ZM1266.70 376.4 L1270.70 370.0 L1272.50 376.4ZM1272.40 376.4 L1272.75 367.5 L1273.10 356.7 L1273.40 351.8 L1274.70 350.8 L1275.00 327.1 L1280.20 327.1 L1280.40 349.8 L1281.10 352.7 L1281.90 360.6 L1282.60 370.5 L1283.10 376.4 L1283.30 401.0 L1285.70 401.0 L1285.90 425.7 L1290.90 425.7 L1291.20 401.0 L1293.30 400.1 L1293.60 391.2 L1293.90 376.4ZM1287.90 376.4 L1291.90 370.0 L1293.70 376.4Z" fill="#e61e40"/><line x1="864.0" y1="376.4" x2="1288.5" y2="376.4" stroke="#b0b0b0" stroke-width="1" stroke-dasharray="4,6" opacity="0.5"/><line x1="864.0" y1="506.2" x2="1288.5" y2="506.2" stroke="#7ab232" stroke-width="1.2"/><path d="M830.20 506.2V526.5M852.20 506.2V522.0M851.40 506.2V524.1M873.40 506.2V520.0M872.60 506.2V524.9M894.60 506.2V522.3M893.80 506.2V523.5M915.80 506.2V522.5M915.00 506.2V526.5M937.00 506.2V522.4M936.20 506.2V525.9M958.20 506.2V520.2M957.40 506.2V524.1M979.40 506.2V519.4M978.60 506.2V523.7M1000.60 506.2V520.3M999.80 506.2V527.0M1021.80 506.2V521.1M1021.00 506.2V527.1M1043.00 506.2V523.0M1042.20 506.2V523.4M1064.20 506.2V520.2M1063.40 506.2V523.4M1085.40 506.2V521.7M1084.60 506.2V526.4M1106.60 506.2V521.2M1105.80 506.2V526.2M1127.80 506.2V519.7M1127.00 506.2V526.7M1149.00 506.2V522.4M1148.20 506.2V524.7M1170.20 506.2V520.0M1169.40 506.2V524.0M1191.40 506.2V522.4M1190.60 506.2V524.3M1212.60 506.2V520.9M1211.80 506.2V525.8M1233.80 506.2V520.0M1233.00 506.2V523.1M1255.00 506.2V522.8M1254.20 506.2V523.1M1276.20 506.2V522.5M1275.40 506.2V525.5M1297.40 506.2V520.7" stroke="#7ab232" stroke-width="1" fill="none"/><path d="M830.60 506.2V473.8L837.40 471.2L838.00 458.8L838.50 471.7H838.60V506.2ZM842.30 506.2V539.7H844.40L845.10 552.0L845.80 539.7H850.10V506.2ZM851.80 506.2V476.0L858.60 473.5L859.20 458.8L859.70 471.7H859.80V506.2ZM863.50 506.2V539.7H865.60L866.30 552.0L867.00 539.7H871.30V506.2ZM873.00 506.2V474.5L879.80 471.9L880.40 458.8L880.90 471.7H881.00V506.2ZM884.70 506.2V539.7H886.80L887.50 552.0L888.20 539.7H892.50V506.2ZM894.20 506.2V475.8L901.00 473.3L901.60 458.8L902.10 471.7H902.20V506.2ZM905.90 506.2V539.7H908.00L908.70 552.0L909.40 539.7H913.70V506.2ZM915.40 506.2V473.8L922.20 471.2L922.80 458.8L923.30 471.7H923.40V506.2ZM927.10 506.2V539.7H929.20L929.90 552.0L930.60 539.7H934.90V506.2ZM936.60 506.2V474.3L943.40 471.7L944.00 458.8L944.50 471.7H944.60V506.2ZM948.30 506.2V539.7H950.40L951.10 552.0L951.80 539.7H956.10V506.2ZM957.80 506.2V475.2L964.60 472.7L965.20 458.8L965.70 471.7H965.80V506.2ZM969.50 506.2V539.7H971.60L972.30 552.0L973.00 539.7H977.30V506.2ZM979.00 506.2V476.8L985.80 474.2L986.40 458.8L986.90 471.7H987.00V506.2ZM990.70 506.2V539.7H992.80L993.50 552.0L994.20 539.7H998.50V506.2ZM1000.20 506.2V474.7L1007.00 472.1L1007.60 458.8L1008.10 471.7H1008.20V506.2ZM1011.90 506.2V539.7H1014.00L1014.70 552.0L1015.40 539.7H1019.70V506.2ZM1021.40 506.2V473.9L1028.20 471.4L1028.80 458.8L1029.30 471.7H1029.40V506.2ZM1033.10 506.2V539.7H1035.20L1035.90 552.0L1036.60 539.7H1040.90V506.2ZM1042.60 506.2V475.7L1049.40 473.1L1050.00 458.8L1050.50 471.7H1050.60V506.2ZM1054.30 506.2V539.7H1056.40L1057.10 552.0L1057.80 539.7H1062.10V506.2ZM1063.80 506.2V476.2L1070.60 473.7L1071.20 458.8L1071.70 471.7H1071.80V506.2ZM1075.50 506.2V539.7H1077.60L1078.30 552.0L1079.00 539.7H1083.30V506.2ZM1085.00 506.2V474.1L1091.80 471.5L1092.40 458.8L1092.90 471.7H1093.00V506.2ZM1096.70 506.2V539.7H1098.80L1099.50 552.0L1100.20 539.7H1104.50V506.2ZM1106.20 506.2V474.8L1113.00 472.3L1113.60 458.8L1114.10 471.7H1114.20V506.2ZM1117.90 506.2V539.7H1120.00L1120.70 552.0L1121.40 539.7H1125.70V506.2ZM1127.40 506.2V474.8L1134.20 472.2L1134.80 458.8L1135.30 471.7H1135.40V506.2ZM1139.10 506.2V539.7H1141.20L1141.90 552.0L1142.60 539.7H1146.90V506.2ZM1148.60 506.2V474.5L1155.40 472.0L1156.00 458.8L1156.50 471.7H1156.60V506.2ZM1160.30 506.2V539.7H1162.40L1163.10 552.0L1163.80 539.7H1168.10V506.2ZM1169.80 506.2V474.4L1176.60 471.8L1177.20 458.8L1177.70 471.7H1177.80V506.2ZM1181.50 506.2V539.7H1183.60L1184.30 552.0L1185.00 539.7H1189.30V506.2ZM1191.00 506.2V473.8L1197.80 471.3L1198.40 458.8L1198.90 471.7H1199.00V506.2ZM1202.70 506.2V539.7H1204.80L1205.50 552.0L1206.20 539.7H1210.50V506.2ZM1212.20 506.2V473.9L1219.00 471.3L1219.60 458.8L1220.10 471.7H1220.20V506.2ZM1223.90 506.2V539.7H1226.00L1226.70 552.0L1227.40 539.7H1231.70V506.2ZM1233.40 506.2V476.5L1240.20 473.9L1240.80 458.8L1241.30 471.7H1241.40V506.2ZM1245.10 506.2V539.7H1247.20L1247.90 552.0L1248.60 539.7H1252.90V506.2ZM1254.60 506.2V474.4L1261.40 471.8L1262.00 458.8L1262.50 471.7H1262.60V506.2ZM1266.30 506.2V539.7H1268.40L1269.10 552.0L1269.80 539.7H1274.10V506.2ZM1275.80 506.2V473.8L1282.60 471.2L1283.20 458.8L1283.70 471.7H1283.80V506.2ZM1287.50 506.2V539.7H1289.60L1290.30 552.0L1291.00 539.7H1295.30V506.2Z" fill="#7ab232"/><line x1="864.0" y1="506.2" x2="1288.5" y2="506.2" stroke="#b0b0b0" stroke-width="1" stroke-dasharray="4,6" opacity="0.5"/><line x1="864.0" y1="632.4" x2="1288.5" y2="632.4" stroke="#ff8c12" stroke-width="1.2"/><path d="M851.80 632.4V605.5M844.70 654.7V673.2M873.00 632.4V610.0M865.90 654.7V680.7M894.20 632.4V604.6M887.10 654.7V676.8M875.20 632.4V585.3M915.40 632.4V602.2M908.30 654.7V676.0M936.60 632.4V602.7M929.50 654.7V679.5M957.80 632.4V608.3M950.70 654.7V674.3M938.80 632.4V585.3M979.00 632.4V607.6M971.90 654.7V674.2M1000.20 632.4V605.1M993.10 654.7V674.4M1021.40 632.4V606.5M1014.30 654.7V673.3M1002.40 632.4V585.3M1042.60 632.4V602.4M1035.50 654.7V675.2M1063.80 632.4V606.2M1056.70 654.7V677.3M1085.00 632.4V602.5M1077.90 654.7V675.8M1066.00 632.4V585.3M1106.20 632.4V602.3M1099.10 654.7V676.6M1127.40 632.4V605.6M1120.30 654.7V676.8M1148.60 632.4V609.9M1141.50 654.7V676.0M1129.60 632.4V585.3M1169.80 632.4V608.5M1162.70 654.7V672.1M1191.00 632.4V603.3M1183.90 654.7V673.6M1212.20 632.4V606.1M1205.10 654.7V678.6M1193.20 632.4V585.3M1233.40 632.4V605.4M1226.30 654.7V675.0M1254.60 632.4V605.7M1247.50 654.7V677.0M1275.80 632.4V603.5M1268.70 654.7V673.0M1256.80 632.4V585.3M1297.00 632.4V605.4M1289.90 654.7V674.3" stroke="#8a4a08" stroke-width="1" fill="none"/><path d="M834.20 632.4 L834.55 623.5 L834.90 612.6 L835.20 607.6 L836.50 606.6 L836.80 582.8 L842.00 582.8 L842.20 605.6 L842.90 608.6 L843.70 616.5 L844.40 626.4 L844.90 632.4 L845.10 657.2 L847.50 657.2 L847.70 682.0 L852.70 682.0 L853.00 657.2 L855.10 656.2 L855.40 647.3 L855.70 632.4ZM849.70 632.4 L853.70 626.0 L855.50 632.4ZM855.40 632.4 L855.75 623.5 L856.10 612.6 L856.40 607.6 L857.70 606.6 L858.00 582.8 L863.20 582.8 L863.40 605.6 L864.10 608.6 L864.90 616.5 L865.60 626.4 L866.10 632.4 L866.30 657.2 L868.70 657.2 L868.90 682.0 L873.90 682.0 L874.20 657.2 L876.30 656.2 L876.60 647.3 L876.90 632.4ZM870.90 632.4 L874.90 626.0 L876.70 632.4ZM876.60 632.4 L876.95 623.5 L877.30 612.6 L877.60 607.6 L878.90 606.6 L879.20 582.8 L884.40 582.8 L884.60 605.6 L885.30 608.6 L886.10 616.5 L886.80 626.4 L887.30 632.4 L887.50 657.2 L889.90 657.2 L890.10 682.0 L895.10 682.0 L895.40 657.2 L897.50 656.2 L897.80 647.3 L898.10 632.4ZM892.10 632.4 L896.10 626.0 L897.90 632.4ZM897.80 632.4 L898.15 623.5 L898.50 612.6 L898.80 607.6 L900.10 606.6 L900.40 582.8 L905.60 582.8 L905.80 605.6 L906.50 608.6 L907.30 616.5 L908.00 626.4 L908.50 632.4 L908.70 657.2 L911.10 657.2 L911.30 682.0 L916.30 682.0 L916.60 657.2 L918.70 656.2 L919.00 647.3 L919.30 632.4ZM913.30 632.4 L917.30 626.0 L919.10 632.4ZM919.00 632.4 L919.35 623.5 L919.70 612.6 L920.00 607.6 L921.30 606.6 L921.60 582.8 L926.80 582.8 L927.00 605.6 L927.70 608.6 L928.50 616.5 L929.20 626.4 L929.70 632.4 L929.90 657.2 L932.30 657.2 L932.50 682.0 L937.50 682.0 L937.80 657.2 L939.90 656.2 L940.20 647.3 L940.50 632.4ZM934.50 632.4 L938.50 626.0 L940.30 632.4ZM940.20 632.4 L940.55 623.5 L940.90 612.6 L941.20 607.6 L942.50 606.6 L942.80 582.8 L948.00 582.8 L948.20 605.6 L948.90 608.6 L949.70 616.5 L950.40 626.4 L950.90 632.4 L951.10 657.2 L953.50 657.2 L953.70 682.0 L958.70 682.0 L959.00 657.2 L961.10 656.2 L961.40 647.3 L961.70 632.4ZM955.70 632.4 L959.70 626.0 L961.50 632.4ZM961.40 632.4 L961.75 623.5 L962.10 612.6 L962.40 607.6 L963.70 606.6 L964.00 582.8 L969.20 582.8 L969.40 605.6 L970.10 608.6 L970.90 616.5 L971.60 626.4 L972.10 632.4 L972.30 657.2 L974.70 657.2 L974.90 682.0 L979.90 682.0 L980.20 657.2 L982.30 656.2 L982.60 647.3 L982.90 632.4ZM976.90 632.4 L980.90 626.0 L982.70 632.4ZM982.60 632.4 L982.95 623.5 L983.30 612.6 L983.60 607.6 L984.90 606.6 L985.20 582.8 L990.40 582.8 L990.60 605.6 L991.30 608.6 L992.10 616.5 L992.80 626.4 L993.30 632.4 L993.50 657.2 L995.90 657.2 L996.10 682.0 L1001.10 682.0 L1001.40 657.2 L1003.50 656.2 L1003.80 647.3 L1004.10 632.4ZM998.10 632.4 L1002.10 626.0 L1003.90 632.4ZM1003.80 632.4 L1004.15 623.5 L1004.50 612.6 L1004.80 607.6 L1006.10 606.6 L1006.40 582.8 L1011.60 582.8 L1011.80 605.6 L1012.50 608.6 L1013.30 616.5 L1014.00 626.4 L1014.50 632.4 L1014.70 657.2 L1017.10 657.2 L1017.30 682.0 L1022.30 682.0 L1022.60 657.2 L1024.70 656.2 L1025.00 647.3 L1025.30 632.4ZM1019.30 632.4 L1023.30 626.0 L1025.10 632.4ZM1025.00 632.4 L1025.35 623.5 L1025.70 612.6 L1026.00 607.6 L1027.30 606.6 L1027.60 582.8 L1032.80 582.8 L1033.00 605.6 L1033.70 608.6 L1034.50 616.5 L1035.20 626.4 L1035.70 632.4 L1035.90 657.2 L1038.30 657.2 L1038.50 682.0 L1043.50 682.0 L1043.80 657.2 L1045.90 656.2 L1046.20 647.3 L1046.50 632.4ZM1040.50 632.4 L1044.50 626.0 L1046.30 632.4ZM1046.20 632.4 L1046.55 623.5 L1046.90 612.6 L1047.20 607.6 L1048.50 606.6 L1048.80 582.8 L1054.00 582.8 L1054.20 605.6 L1054.90 608.6 L1055.70 616.5 L1056.40 626.4 L1056.90 632.4 L1057.10 657.2 L1059.50 657.2 L1059.70 682.0 L1064.70 682.0 L1065.00 657.2 L1067.10 656.2 L1067.40 647.3 L1067.70 632.4ZM1061.70 632.4 L1065.70 626.0 L1067.50 632.4ZM1067.40 632.4 L1067.75 623.5 L1068.10 612.6 L1068.40 607.6 L1069.70 606.6 L1070.00 582.8 L1075.20 582.8 L1075.40 605.6 L1076.10 608.6 L1076.90 616.5 L1077.60 626.4 L1078.10 632.4 L1078.30 657.2 L1080.70 657.2 L1080.90 682.0 L1085.90 682.0 L1086.20 657.2 L1088.30 656.2 L1088.60 647.3 L1088.90 632.4ZM1082.90 632.4 L1086.90 626.0 L1088.70 632.4ZM1088.60 632.4 L1088.95 623.5 L1089.30 612.6 L1089.60 607.6 L1090.90 606.6 L1091.20 582.8 L1096.40 582.8 L1096.60 605.6 L1097.30 608.6 L1098.10 616.5 L1098.80 626.4 L1099.30 632.4 L1099.50 657.2 L1101.90 657.2 L1102.10 682.0 L1107.10 682.0 L1107.40 657.2 L1109.50 656.2 L1109.80 647.3 L1110.10 632.4ZM1104.10 632.4 L1108.10 626.0 L1109.90 632.4ZM1109.80 632.4 L1110.15 623.5 L1110.50 612.6 L1110.80 607.6 L1112.10 606.6 L1112.40 582.8 L1117.60 582.8 L1117.80 605.6 L1118.50 608.6 L1119.30 616.5 L1120.00 626.4 L1120.50 632.4 L1120.70 657.2 L1123.10 657.2 L1123.30 682.0 L1128.30 682.0 L1128.60 657.2 L1130.70 656.2 L1131.00 647.3 L1131.30 632.4ZM1125.30 632.4 L1129.30 626.0 L1131.10 632.4ZM1131.00 632.4 L1131.35 623.5 L1131.70 612.6 L1132.00 607.6 L1133.30 606.6 L1133.60 582.8 L1138.80 582.8 L1139.00 605.6 L1139.70 608.6 L1140.50 616.5 L1141.20 626.4 L1141.70 632.4 L1141.90 657.2 L1144.30 657.2 L1144.50 682.0 L1149.50 682.0 L1149.80 657.2 L1151.90 656.2 L1152.20 647.3 L1152.50 632.4ZM1146.50 632.4 L1150.50 626.0 L1152.30 632.4ZM1152.20 632.4 L1152.55 623.5 L1152.90 612.6 L1153.20 607.6 L1154.50 606.6 L1154.80 582.8 L1160.00 582.8 L1160.20 605.6 L1160.90 608.6 L1161.70 616.5 L1162.40 626.4 L1162.90 632.4 L1163.10 657.2 L1165.50 657.2 L1165.70 682.0 L1170.70 682.0 L1171.00 657.2 L1173.10 656.2 L1173.40 647.3 L1173.70 632.4ZM1167.70 632.4 L1171.70 626.0 L1173.50 632.4ZM1173.40 632.4 L1173.75 623.5 L1174.10 612.6 L1174.40 607.6 L1175.70 606.6 L1176.00 582.8 L1181.20 582.8 L1181.40 605.6 L1182.10 608.6 L1182.90 616.5 L1183.60 626.4 L1184.10 632.4 L1184.30 657.2 L1186.70 657.2 L1186.90 682.0 L1191.90 682.0 L1192.20 657.2 L1194.30 656.2 L1194.60 647.3 L1194.90 632.4ZM1188.90 632.4 L1192.90 626.0 L1194.70 632.4ZM1194.60 632.4 L1194.95 623.5 L1195.30 612.6 L1195.60 607.6 L1196.90 606.6 L1197.20 582.8 L1202.40 582.8 L1202.60 605.6 L1203.30 608.6 L1204.10 616.5 L1204.80 626.4 L1205.30 632.4 L1205.50 657.2 L1207.90 657.2 L1208.10 682.0 L1213.10 682.0 L1213.40 657.2 L1215.50 656.2 L1215.80 647.3 L1216.10 632.4ZM1210.10 632.4 L1214.10 626.0 L1215.90 632.4ZM1215.80 632.4 L1216.15 623.5 L1216.50 612.6 L1216.80 607.6 L1218.10 606.6 L1218.40 582.8 L1223.60 582.8 L1223.80 605.6 L1224.50 608.6 L1225.30 616.5 L1226.00 626.4 L1226.50 632.4 L1226.70 657.2 L1229.10 657.2 L1229.30 682.0 L1234.30 682.0 L1234.60 657.2 L1236.70 656.2 L1237.00 647.3 L1237.30 632.4ZM1231.30 632.4 L1235.30 626.0 L1237.10 632.4ZM1237.00 632.4 L1237.35 623.5 L1237.70 612.6 L1238.00 607.6 L1239.30 606.6 L1239.60 582.8 L1244.80 582.8 L1245.00 605.6 L1245.70 608.6 L1246.50 616.5 L1247.20 626.4 L1247.70 632.4 L1247.90 657.2 L1250.30 657.2 L1250.50 682.0 L1255.50 682.0 L1255.80 657.2 L1257.90 656.2 L1258.20 647.3 L1258.50 632.4ZM1252.50 632.4 L1256.50 626.0 L1258.30 632.4ZM1258.20 632.4 L1258.55 623.5 L1258.90 612.6 L1259.20 607.6 L1260.50 606.6 L1260.80 582.8 L1266.00 582.8 L1266.20 605.6 L1266.90 608.6 L1267.70 616.5 L1268.40 626.4 L1268.90 632.4 L1269.10 657.2 L1271.50 657.2 L1271.70 682.0 L1276.70 682.0 L1277.00 657.2 L1279.10 656.2 L1279.40 647.3 L1279.70 632.4ZM1273.70 632.4 L1277.70 626.0 L1279.50 632.4ZM1279.40 632.4 L1279.75 623.5 L1280.10 612.6 L1280.40 607.6 L1281.70 606.6 L1282.00 582.8 L1287.20 582.8 L1287.40 605.6 L1288.10 608.6 L1288.90 616.5 L1289.60 626.4 L1290.10 632.4 L1290.30 657.2 L1292.70 657.2 L1292.90 682.0 L1297.90 682.0 L1298.20 657.2 L1300.30 656.2 L1300.60 647.3 L1300.90 632.4ZM1294.90 632.4 L1298.90 626.0 L1300.70 632.4Z" fill="#ff8c12"/><line x1="864.0" y1="632.4" x2="1288.5" y2="632.4" stroke="#b0b0b0" stroke-width="1" stroke-dasharray="4,6" opacity="0.5"/><line x1="864.0" y1="767.0" x2="1288.5" y2="767.0" stroke="#2828b8" stroke-width="1.2"/><path d="M837.70 767.0V794.0M858.70 767.0V796.4M858.90 767.0V793.9M879.90 767.0V799.4M880.10 767.0V793.0M901.10 767.0V796.3M901.30 767.0V793.5M922.30 767.0V795.9M922.50 767.0V792.1M943.50 767.0V799.6M943.70 767.0V794.7M964.70 767.0V799.6M964.90 767.0V792.6M985.90 767.0V799.6M986.10 767.0V789.9M1007.10 767.0V793.5M1007.30 767.0V789.5M1028.30 767.0V794.3M1028.50 767.0V793.3M1049.50 767.0V798.4M1049.70 767.0V790.0M1070.70 767.0V797.9M1070.90 767.0V789.9M1091.90 767.0V799.2M1092.10 767.0V790.4M1113.10 767.0V799.7M1113.30 767.0V792.2M1134.30 767.0V800.0M1134.50 767.0V790.1M1155.50 767.0V795.8M1155.70 767.0V791.2M1176.70 767.0V794.0M1176.90 767.0V793.7M1197.90 767.0V792.7M1198.10 767.0V791.9M1219.10 767.0V792.7M1219.30 767.0V793.1M1240.30 767.0V796.4M1240.50 767.0V795.4M1261.50 767.0V798.5M1261.70 767.0V789.7M1282.70 767.0V794.5M1282.90 767.0V794.1M1303.90 767.0V794.6" stroke="#2828b8" stroke-width="1" fill="none"/><path d="M838.20 767.0V737.1L844.40 734.5L844.80 715.2L845.30 732.8H845.60V767.0ZM848.85 767.0V800.2H851.00L851.70 809.5L852.40 800.2H856.85V767.0ZM859.40 767.0V736.2L865.60 733.7L866.00 715.2L866.50 732.8H866.80V767.0ZM870.05 767.0V800.2H872.20L872.90 809.5L873.60 800.2H878.05V767.0ZM880.60 767.0V736.6L886.80 734.0L887.20 715.2L887.70 732.8H888.00V767.0ZM891.25 767.0V800.2H893.40L894.10 809.5L894.80 800.2H899.25V767.0ZM901.80 767.0V736.4L908.00 733.8L908.40 715.2L908.90 732.8H909.20V767.0ZM912.45 767.0V800.2H914.60L915.30 809.5L916.00 800.2H920.45V767.0ZM923.00 767.0V736.3L929.20 733.7L929.60 715.2L930.10 732.8H930.40V767.0ZM933.65 767.0V800.2H935.80L936.50 809.5L937.20 800.2H941.65V767.0ZM944.20 767.0V735.8L950.40 733.2L950.80 715.2L951.30 732.8H951.60V767.0ZM954.85 767.0V800.2H957.00L957.70 809.5L958.40 800.2H962.85V767.0ZM965.40 767.0V737.2L971.60 734.6L972.00 715.2L972.50 732.8H972.80V767.0ZM976.05 767.0V800.2H978.20L978.90 809.5L979.60 800.2H984.05V767.0ZM986.60 767.0V735.4L992.80 732.8L993.20 715.2L993.70 732.8H994.00V767.0ZM997.25 767.0V800.2H999.40L1000.10 809.5L1000.80 800.2H1005.25V767.0ZM1007.80 767.0V736.6L1014.00 734.0L1014.40 715.2L1014.90 732.8H1015.20V767.0ZM1018.45 767.0V800.2H1020.60L1021.30 809.5L1022.00 800.2H1026.45V767.0ZM1029.00 767.0V737.8L1035.20 735.2L1035.60 715.2L1036.10 732.8H1036.40V767.0ZM1039.65 767.0V800.2H1041.80L1042.50 809.5L1043.20 800.2H1047.65V767.0ZM1050.20 767.0V735.2L1056.40 732.6L1056.80 715.2L1057.30 732.8H1057.60V767.0ZM1060.85 767.0V800.2H1063.00L1063.70 809.5L1064.40 800.2H1068.85V767.0ZM1071.40 767.0V735.9L1077.60 733.3L1078.00 715.2L1078.50 732.8H1078.80V767.0ZM1082.05 767.0V800.2H1084.20L1084.90 809.5L1085.60 800.2H1090.05V767.0ZM1092.60 767.0V735.0L1098.80 732.4L1099.20 715.2L1099.70 732.8H1100.00V767.0ZM1103.25 767.0V800.2H1105.40L1106.10 809.5L1106.80 800.2H1111.25V767.0ZM1113.80 767.0V736.8L1120.00 734.2L1120.40 715.2L1120.90 732.8H1121.20V767.0ZM1124.45 767.0V800.2H1126.60L1127.30 809.5L1128.00 800.2H1132.45V767.0ZM1135.00 767.0V735.4L1141.20 732.8L1141.60 715.2L1142.10 732.8H1142.40V767.0ZM1145.65 767.0V800.2H1147.80L1148.50 809.5L1149.20 800.2H1153.65V767.0ZM1156.20 767.0V736.4L1162.40 733.8L1162.80 715.2L1163.30 732.8H1163.60V767.0ZM1166.85 767.0V800.2H1169.00L1169.70 809.5L1170.40 800.2H1174.85V767.0ZM1177.40 767.0V737.0L1183.60 734.4L1184.00 715.2L1184.50 732.8H1184.80V767.0ZM1188.05 767.0V800.2H1190.20L1190.90 809.5L1191.60 800.2H1196.05V767.0ZM1198.60 767.0V736.3L1204.80 733.7L1205.20 715.2L1205.70 732.8H1206.00V767.0ZM1209.25 767.0V800.2H1211.40L1212.10 809.5L1212.80 800.2H1217.25V767.0ZM1219.80 767.0V737.0L1226.00 734.4L1226.40 715.2L1226.90 732.8H1227.20V767.0ZM1230.45 767.0V800.2H1232.60L1233.30 809.5L1234.00 800.2H1238.45V767.0ZM1241.00 767.0V737.8L1247.20 735.2L1247.60 715.2L1248.10 732.8H1248.40V767.0ZM1251.65 767.0V800.2H1253.80L1254.50 809.5L1255.20 800.2H1259.65V767.0ZM1262.20 767.0V735.0L1268.40 732.4L1268.80 715.2L1269.30 732.8H1269.60V767.0ZM1272.85 767.0V800.2H1275.00L1275.70 809.5L1276.40 800.2H1280.85V767.0ZM1283.40 767.0V737.9L1289.60 735.3L1290.00 715.2L1290.50 732.8H1290.80V767.0ZM1294.05 767.0V800.2H1296.20L1296.90 809.5L1297.60 800.2H1302.05V767.0Z" fill="#2828b8"/><line x1="864.0" y1="767.0" x2="1288.5" y2="767.0" stroke="#b0b0b0" stroke-width="1" stroke-dasharray="4,6" opacity="0.5"/><line x1="1076.2" y1="57" x2="1076.2" y2="827" stroke="#e0e0e0" stroke-width="1" stroke-dasharray="4,3"/><text x="1285" y="86.1" font-size="10.5" fill="#f2ef00" text-anchor="end" font-family="Liberation Sans" stroke="#000" stroke-width="1.6" paint-order="stroke">33 V</text><text x="1285" y="98.7" font-size="10.5" fill="#f2ef00" text-anchor="end" font-family="Liberation Sans" stroke="#000" stroke-width="1.6" paint-order="stroke">22 V</text><text x="1285" y="111.3" font-size="10.5" fill="#f2ef00" text-anchor="end" font-family="Liberation Sans" stroke="#000" stroke-width="1.6" paint-order="stroke">11 V</text><text x="1285" y="136.5" font-size="10.5" fill="#f2ef00" text-anchor="end" font-family="Liberation Sans" stroke="#000" stroke-width="1.6" paint-order="stroke">-11 V</text><text x="1285" y="149.1" font-size="10.5" fill="#f2ef00" text-anchor="end" font-family="Liberation Sans" stroke="#000" stroke-width="1.6" paint-order="stroke">-22 V</text><text x="1285" y="161.7" font-size="10.5" fill="#f2ef00" text-anchor="end" font-family="Liberation Sans" stroke="#000" stroke-width="1.6" paint-order="stroke">-33 V</text><text x="1285" y="174.3" font-size="10.5" fill="#f2ef00" text-anchor="end" font-family="Liberation Sans" stroke="#000" stroke-width="1.6" paint-order="stroke">-44 V</text><text x="1285" y="198.6" font-size="10.5" fill="#1cb0b8" text-anchor="end" font-family="Liberation Sans" stroke="#000" stroke-width="1.6" paint-order="stroke">2.52 A</text><text x="1285" y="211.4" font-size="10.5" fill="#1cb0b8" text-anchor="end" font-family="Liberation Sans" stroke="#000" stroke-width="1.6" paint-order="stroke">1.89 A</text><text x="1285" y="224.2" font-size="10.5" fill="#1cb0b8" text-anchor="end" font-family="Liberation Sans" stroke="#000" stroke-width="1.6" paint-order="stroke">1.26 A</text><text x="1285" y="237.0" font-size="10.5" fill="#1cb0b8" text-anchor="end" font-family="Liberation Sans" stroke="#000" stroke-width="1.6" paint-order="stroke">630 mA</text><text x="1285" y="249.8" font-size="10.5" fill="#1cb0b8" text-anchor="end" font-family="Liberation Sans" stroke="#000" stroke-width="1.6" paint-order="stroke">0 A</text><text x="1285" y="262.6" font-size="10.5" fill="#1cb0b8" text-anchor="end" font-family="Liberation Sans" stroke="#000" stroke-width="1.6" paint-order="stroke">-630 mA</text><text x="1285" y="275.4" font-size="10.5" fill="#1cb0b8" text-anchor="end" font-family="Liberation Sans" stroke="#000" stroke-width="1.6" paint-order="stroke">-1.26 A</text><text x="1285" y="288.2" font-size="10.5" fill="#1cb0b8" text-anchor="end" font-family="Liberation Sans" stroke="#000" stroke-width="1.6" paint-order="stroke">-1.89 A</text><text x="1285" y="301.0" font-size="10.5" fill="#1cb0b8" text-anchor="end" font-family="Liberation Sans" stroke="#000" stroke-width="1.6" paint-order="stroke">-2.52 A</text><text x="1285" y="328.3" font-size="10.5" fill="#e61e40" text-anchor="end" font-family="Liberation Sans" stroke="#000" stroke-width="1.6" paint-order="stroke">44 V</text><text x="1285" y="341.0" font-size="10.5" fill="#e61e40" text-anchor="end" font-family="Liberation Sans" stroke="#000" stroke-width="1.6" paint-order="stroke">33 V</text><text x="1285" y="353.6" font-size="10.5" fill="#e61e40" text-anchor="end" font-family="Liberation Sans" stroke="#000" stroke-width="1.6" paint-order="stroke">22 V</text><text x="1285" y="366.3" font-size="10.5" fill="#e61e40" text-anchor="end" font-family="Liberation Sans" stroke="#000" stroke-width="1.6" paint-order="stroke">11 V</text><text x="1285" y="378.9" font-size="10.5" fill="#e61e40" text-anchor="end" font-family="Liberation Sans" stroke="#000" stroke-width="1.6" paint-order="stroke">0 V</text><text x="1285" y="391.6" font-size="10.5" fill="#e61e40" text-anchor="end" font-family="Liberation Sans" stroke="#000" stroke-width="1.6" paint-order="stroke">-11 V</text><text x="1285" y="404.2" font-size="10.5" fill="#e61e40" text-anchor="end" font-family="Liberation Sans" stroke="#000" stroke-width="1.6" paint-order="stroke">-22 V</text><text x="1285" y="416.9" font-size="10.5" fill="#e61e40" text-anchor="end" font-family="Liberation Sans" stroke="#000" stroke-width="1.6" paint-order="stroke">-33 V</text><text x="1285" y="429.5" font-size="10.5" fill="#e61e40" text-anchor="end" font-family="Liberation Sans" stroke="#000" stroke-width="1.6" paint-order="stroke">-44 V</text><text x="1285" y="458.7" font-size="10.5" fill="#7ab232" text-anchor="end" font-family="Liberation Sans" stroke="#000" stroke-width="1.6" paint-order="stroke">2.72 A</text><text x="1285" y="471.4" font-size="10.5" fill="#7ab232" text-anchor="end" font-family="Liberation Sans" stroke="#000" stroke-width="1.6" paint-order="stroke">2.04 A</text><text x="1285" y="484.0" font-size="10.5" fill="#7ab232" text-anchor="end" font-family="Liberation Sans" stroke="#000" stroke-width="1.6" paint-order="stroke">1.36 A</text><text x="1285" y="496.7" font-size="10.5" fill="#7ab232" text-anchor="end" font-family="Liberation Sans" stroke="#000" stroke-width="1.6" paint-order="stroke">680 mA</text><text x="1285" y="509.4" font-size="10.5" fill="#7ab232" text-anchor="end" font-family="Liberation Sans" stroke="#000" stroke-width="1.6" paint-order="stroke">0 A</text><text x="1285" y="522.1" font-size="10.5" fill="#7ab232" text-anchor="end" font-family="Liberation Sans" stroke="#000" stroke-width="1.6" paint-order="stroke">-680 mA</text><text x="1285" y="534.8" font-size="10.5" fill="#7ab232" text-anchor="end" font-family="Liberation Sans" stroke="#000" stroke-width="1.6" paint-order="stroke">-1.36 A</text><text x="1285" y="547.4" font-size="10.5" fill="#7ab232" text-anchor="end" font-family="Liberation Sans" stroke="#000" stroke-width="1.6" paint-order="stroke">-2.04 A</text><text x="1285" y="560.1" font-size="10.5" fill="#7ab232" text-anchor="end" font-family="Liberation Sans" stroke="#000" stroke-width="1.6" paint-order="stroke">-2.72 A</text><text x="1285" y="583.8" font-size="10.5" fill="#ff8c12" text-anchor="end" font-family="Liberation Sans" stroke="#000" stroke-width="1.6" paint-order="stroke">44 V</text><text x="1285" y="596.5" font-size="10.5" fill="#ff8c12" text-anchor="end" font-family="Liberation Sans" stroke="#000" stroke-width="1.6" paint-order="stroke">33 V</text><text x="1285" y="609.1" font-size="10.5" fill="#ff8c12" text-anchor="end" font-family="Liberation Sans" stroke="#000" stroke-width="1.6" paint-order="stroke">22 V</text><text x="1285" y="621.8" font-size="10.5" fill="#ff8c12" text-anchor="end" font-family="Liberation Sans" stroke="#000" stroke-width="1.6" paint-order="stroke">11 V</text><text x="1285" y="634.5" font-size="10.5" fill="#ff8c12" text-anchor="end" font-family="Liberation Sans" stroke="#000" stroke-width="1.6" paint-order="stroke">0 V</text><text x="1285" y="647.2" font-size="10.5" fill="#ff8c12" text-anchor="end" font-family="Liberation Sans" stroke="#000" stroke-width="1.6" paint-order="stroke">-11 V</text><text x="1285" y="659.9" font-size="10.5" fill="#ff8c12" text-anchor="end" font-family="Liberation Sans" stroke="#000" stroke-width="1.6" paint-order="stroke">-22 V</text><text x="1285" y="672.5" font-size="10.5" fill="#ff8c12" text-anchor="end" font-family="Liberation Sans" stroke="#000" stroke-width="1.6" paint-order="stroke">-33 V</text><text x="1285" y="685.2" font-size="10.5" fill="#ff8c12" text-anchor="end" font-family="Liberation Sans" stroke="#000" stroke-width="1.6" paint-order="stroke">-44 V</text><text x="1285" y="705.8" font-size="10.5" fill="#2828b8" text-anchor="end" font-family="Liberation Sans" stroke="#000" stroke-width="1.6" paint-order="stroke">3.40 A</text><text x="1285" y="718.7" font-size="10.5" fill="#2828b8" text-anchor="end" font-family="Liberation Sans" stroke="#000" stroke-width="1.6" paint-order="stroke">2.72 A</text><text x="1285" y="731.7" font-size="10.5" fill="#2828b8" text-anchor="end" font-family="Liberation Sans" stroke="#000" stroke-width="1.6" paint-order="stroke">2.04 A</text><text x="1285" y="744.6" font-size="10.5" fill="#2828b8" text-anchor="end" font-family="Liberation Sans" stroke="#000" stroke-width="1.6" paint-order="stroke">1.36 A</text><text x="1285" y="757.6" font-size="10.5" fill="#2828b8" text-anchor="end" font-family="Liberation Sans" stroke="#000" stroke-width="1.6" paint-order="stroke">680 mA</text><text x="1285" y="770.5" font-size="10.5" fill="#2828b8" text-anchor="end" font-family="Liberation Sans" stroke="#000" stroke-width="1.6" paint-order="stroke">0 A</text><text x="1285" y="783.4" font-size="10.5" fill="#2828b8" text-anchor="end" font-family="Liberation Sans" stroke="#000" stroke-width="1.6" paint-order="stroke">-680 mA</text><text x="1285" y="796.4" font-size="10.5" fill="#2828b8" text-anchor="end" font-family="Liberation Sans" stroke="#000" stroke-width="1.6" paint-order="stroke">-1.36 A</text><text x="1285" y="809.3" font-size="10.5" fill="#2828b8" text-anchor="end" font-family="Liberation Sans" stroke="#000" stroke-width="1.6" paint-order="stroke">-2.04 A</text></g><path d="M869.5 110.4H888.5L895.5 120.4L888.5 130.4H869.5Q866.5 130.4 866.5 127.4V113.4Q866.5 110.4 869.5 110.4Z" fill="#2a2812" stroke="#f2ef00" stroke-width="1.3"/><text x="871.5" y="124.4" font-size="11" fill="#e8e4b0" font-family="Liberation Sans">C 1</text><path d="M869.5 237.8H888.5L895.5 247.8L888.5 257.8H869.5Q866.5 257.8 866.5 254.8V240.8Q866.5 237.8 869.5 237.8Z" fill="#0c2426" stroke="#1cb0b8" stroke-width="1.3"/><text x="871.5" y="251.8" font-size="11" fill="#a8dce0" font-family="Liberation Sans">C 2</text><path d="M869.5 365.8H888.5L895.5 375.8L888.5 385.8H869.5Q866.5 385.8 866.5 382.8V368.8Q866.5 365.8 869.5 365.8Z" fill="#2a1014" stroke="#e61e40" stroke-width="1.3"/><text x="871.5" y="379.8" font-size="11" fill="#e8d8d8" font-family="Liberation Sans">C 3</text><path d="M869.5 494.0H888.5L895.5 504.0L888.5 514.0H869.5Q866.5 514.0 866.5 511.0V497.0Q866.5 494.0 869.5 494.0Z" fill="#182410" stroke="#7ab232" stroke-width="1.3"/><text x="871.5" y="508.0" font-size="11" fill="#c0dca0" font-family="Liberation Sans">C 4</text><path d="M869.5 622.4H888.5L895.5 632.4L888.5 642.4H869.5Q866.5 642.4 866.5 639.4V625.4Q866.5 622.4 869.5 622.4Z" fill="#2a1a0a" stroke="#ff8c12" stroke-width="1.3"/><text x="871.5" y="636.4" font-size="11" fill="#f0c890" font-family="Liberation Sans">C 5</text><path d="M869.5 752.0H888.5L895.5 762.0L888.5 772.0H869.5Q866.5 772.0 866.5 769.0V755.0Q866.5 752.0 869.5 752.0Z" fill="#2828c4" stroke="#2828b8" stroke-width="1.3"/><text x="871.5" y="766.0" font-size="11" fill="#ffffff" font-family="Liberation Sans">C 6</text><path d="M1270.3 119.7 L1280 111.6 V117.8 H1288.5 V121.5 H1280 V127.9 Z" fill="#f6ea3c" stroke="#3a3400" stroke-width="0.6"/><path d="M1069 31.8 H1082 L1075.5 36.5 Z" fill="#f08a20"/><path d="M1067.8 57 H1084 L1075.9 64.5 Z" fill="#f08a20"/><path d="M1069.5 66 H1083.5 V82 H1079 L1075.9 87.5 L1072.8 82 H1069.5 Z" fill="#1a1008" stroke="#f08a20" stroke-width="1.8"/><text x="1076.2" y="79.5" font-size="12" font-weight="bold" fill="#f08a20" text-anchor="middle" font-family="Liberation Sans">T</text><path d="M997 38 H992.5 V51 H997 M992.5 44.6 H1159.5 M1155 38 H1159.5 V51 H1155" fill="none" stroke="#b8b8b8" stroke-width="1.3"/><path d="M1071 42.5 H1081 V51.5 H1077.8 L1076 54.5 L1074.2 51.5 H1071 Z" fill="#2a1a0a" stroke="#e88a28" stroke-width="1.3"/><text x="1076" y="50.3" font-size="9" font-weight="bold" fill="#e88a28" text-anchor="middle" font-family="Liberation Sans">T</text></svg><svg style="left:1254px;top:63px" width="30" height="30"><path d="M0 0 L26 0 Q29 0 29 3 L29 29 Z" fill="#4e4e4e"/><circle cx="23" cy="5.6" r="3.8" fill="none" stroke="#9a9a9a" stroke-width="1.6"/><line x1="20.2" y1="8.4" x2="15.2" y2="13.2" stroke="#9a9a9a" stroke-width="2" stroke-linecap="round"/></svg><div class="b" style="left:1303px;top:29px;width:303px;height:801px;border-left:2px solid #414343;border-top:1.8px solid #4a4540;border-bottom:1.5px solid #4a4540;border-top-left-radius:3px;"></div><div class="b" style="left:1604px;top:29px;width:2px;height:875px;background:#1c1c1c;"></div><div class="t" style="left:1214.8px;width:400px;text-align:center;top:30.4px;font-size:12.5px;color:#f0f0f0;font-weight:bold;">Add New...</div><div class="b" style="left:1309.3px;top:50.5px;width:65.0px;height:38.2px;border:1.3px solid #5e5650;border-radius:6px;background:linear-gradient(#3a3a3a,#2e2e2e 70%,#262626);box-shadow:inset 0 -2px 2px rgba(0,0,0,0.35);"></div><div class="t" style="left:1141.8px;width:400px;text-align:center;top:62.7px;font-size:12.5px;color:#ececec;font-weight:normal;">Cursors</div><div class="b" style="left:1382.3px;top:50.5px;width:64.4px;height:38.2px;border:1.3px solid #5e5650;border-radius:6px;background:linear-gradient(#3a3a3a,#2e2e2e 70%,#262626);box-shadow:inset 0 -2px 2px rgba(0,0,0,0.35);"></div><div class="t" style="left:1214.5px;width:400px;text-align:center;top:62.7px;font-size:12.5px;color:#ececec;font-weight:normal;">Callout</div><div class="b" style="left:1454.3px;top:50.5px;width:64.8px;height:38.0px;border:1.3px solid #5e5650;border-radius:6px;background:linear-gradient(#3a3a3a,#2e2e2e 70%,#262626);box-shadow:inset 0 -2px 2px rgba(0,0,0,0.35);"></div><div class="t" style="left:1286.7px;width:400px;text-align:center;top:55.4px;font-size:12.5px;color:#ececec;font-weight:normal;">Results</div><div class="t" style="left:1286.7px;width:400px;text-align:center;top:68.7px;font-size:12.5px;color:#ececec;font-weight:normal;">Table</div><div class="b" style="left:1534.3px;top:49.9px;width:64.8px;height:37.9px;border:1.3px solid #5e5650;border-radius:6px;background:linear-gradient(#3a3a3a,#2e2e2e 70%,#262626);box-shadow:inset 0 -2px 2px rgba(0,0,0,0.35);"></div><div class="b" style="left:1309.3px;top:97.1px;width:65.0px;height:37.9px;border:1.3px solid #5e5650;border-radius:6px;background:linear-gradient(#3a3a3a,#2e2e2e 70%,#262626);box-shadow:inset 0 -2px 2px rgba(0,0,0,0.35);"></div><div class="t" style="left:1141.8px;width:400px;text-align:center;top:109.1px;font-size:12.5px;color:#ececec;font-weight:normal;">Measure</div><div class="b" style="left:1382.3px;top:97.1px;width:64.4px;height:37.9px;border:1.3px solid #5e5650;border-radius:6px;background:linear-gradient(#3a3a3a,#2e2e2e 70%,#262626);box-shadow:inset 0 -2px 2px rgba(0,0,0,0.35);"></div><div class="t" style="left:1214.5px;width:400px;text-align:center;top:109.1px;font-size:12.5px;color:#ececec;font-weight:normal;">Search</div><div class="b" style="left:1454.3px;top:97.1px;width:64.8px;height:37.7px;border:1.3px solid #5e5650;border-radius:6px;background:linear-gradient(#3a3a3a,#2e2e2e 70%,#262626);box-shadow:inset 0 -2px 2px rgba(0,0,0,0.35);"></div><div class="t" style="left:1286.7px;width:400px;text-align:center;top:109.0px;font-size:12.5px;color:#ececec;font-weight:normal;">Plot</div><div class="b" style="left:1534.3px;top:96.5px;width:64.8px;height:37.8px;border:1.3px solid #5e5650;border-radius:6px;background:linear-gradient(#3a3a3a,#2e2e2e 70%,#262626);box-shadow:inset 0 -2px 2px rgba(0,0,0,0.35);"></div><div class="t" style="left:1366.7px;width:400px;text-align:center;top:108.5px;font-size:12.5px;color:#ececec;font-weight:normal;">More...</div><div class="b" style="left:1527px;top:32px;width:1px;height:106px;background:#4e4843;"></div><div class="b" style="left:1307px;top:142px;width:295px;height:1.3px;background:#4e4843;"></div><svg style="left:1552px;top:55px" width="30" height="28"><rect x="4.7" y="3" width="19.8" height="17.4" fill="none" stroke="#b8b8b8" stroke-width="1.8" stroke-dasharray="2.4,2"/><circle cx="15.8" cy="10" r="4.3" fill="none" stroke="#b8b8b8" stroke-width="1.8"/><line x1="12.6" y1="13.2" x2="9.2" y2="16.5" stroke="#b8b8b8" stroke-width="2.2" stroke-linecap="round"/><path d="M19.5 15.6 L26.5 20.5 L23 21 L25 24.5 L23.5 25.3 L21.5 21.8 L19.5 23.8 Z" fill="#b8b8b8"/></svg><div class="b" style="left:1307.3px;top:151.6px;width:294px;height:15.599999999999994px;background:linear-gradient(#5a5a5a,#4c4c4c);border-radius:4px 4px 0 0;"></div><div class="b" style="left:1307.3px;top:167.2px;width:294px;height:299.8px;background:#c9c9c9;border-radius:0 0 4px 4px;"></div><div class="t" style="left:1311.6px;top:151.8px;font-size:12.7px;color:#e4e4e4;font-weight:normal;">3-Phase Meas 1: Cyc Power Quality'</div><div class="t" style="left:1389.8px;top:172.0px;font-size:12.5px;color:#1c1c1c;font-weight:normal;">Vab:Ia</div><div class="t" style="left:1389.8px;top:188.0px;font-size:12.5px;color:#1c1c1c;font-weight:normal;">LL-LN</div><div class="t" style="left:1444.6px;top:172.0px;font-size:12.5px;color:#1c1c1c;font-weight:normal;">Vbc:Ib</div><div class="t" style="left:1444.6px;top:188.0px;font-size:12.5px;color:#1c1c1c;font-weight:normal;">LL-LN</div><div class="t" style="left:1499.2px;top:172.0px;font-size:12.5px;color:#1c1c1c;font-weight:normal;">Vca:Ic</div><div class="t" style="left:1499.2px;top:188.0px;font-size:12.5px;color:#1c1c1c;font-weight:normal;">LL-LN</div><svg style="left:1391.6px;top:205.3px" width="45" height="11.6"><defs><clipPath id="pc1391205"><rect x="0.5" y="0.5" width="44" height="10.6" rx="5.3"/></clipPath></defs><g clip-path="url(#pc1391205)"><rect x="0" y="0" width="45" height="11.6" fill="#20ccd4"/><path d="M0 0 H25.5 L19.5 11.6 H0 Z" fill="#f8f020"/></g><rect x="0.5" y="0.5" width="44" height="10.6" rx="5.3" fill="none" stroke="#5a5a5a" stroke-width="1"/><text x="12.15" y="9.3" font-size="9.5" fill="#222" text-anchor="middle" font-family="Liberation Sans">1</text><text x="33.75" y="9.3" font-size="9.5" fill="#222" text-anchor="middle" font-family="Liberation Sans">2</text></svg><svg style="left:1446.3999999999999px;top:205.3px" width="45" height="11.6"><defs><clipPath id="pc1446205"><rect x="0.5" y="0.5" width="44" height="10.6" rx="5.3"/></clipPath></defs><g clip-path="url(#pc1446205)"><rect x="0" y="0" width="45" height="11.6" fill="#88cc3a"/><path d="M0 0 H25.5 L19.5 11.6 H0 Z" fill="#e8405e"/></g><rect x="0.5" y="0.5" width="44" height="10.6" rx="5.3" fill="none" stroke="#5a5a5a" stroke-width="1"/><text x="12.15" y="9.3" font-size="9.5" fill="#fff" text-anchor="middle" font-family="Liberation Sans">3</text><text x="33.75" y="9.3" font-size="9.5" fill="#222" text-anchor="middle" font-family="Liberation Sans">4</text></svg><svg style="left:1501.0px;top:205.3px" width="45" height="11.6"><defs><clipPath id="pc1501205"><rect x="0.5" y="0.5" width="44" height="10.6" rx="5.3"/></clipPath></defs><g clip-path="url(#pc1501205)"><rect x="0" y="0" width="45" height="11.6" fill="#2a2ad0"/><path d="M0 0 H25.5 L19.5 11.6 H0 Z" fill="#ff8c1a"/></g><rect x="0.5" y="0.5" width="44" height="10.6" rx="5.3" fill="none" stroke="#5a5a5a" stroke-width="1"/><text x="12.15" y="9.3" font-size="9.5" fill="#222" text-anchor="middle" font-family="Liberation Sans">5</text><text x="33.75" y="9.3" font-size="9.5" fill="#fff" text-anchor="middle" font-family="Liberation Sans">6</text></svg><div class="t" style="left:1313.3px;top:218.9px;font-size:12.5px;color:#1c1c1c;font-weight:normal;">V<span style="font-size:8.5px;position:relative;top:2px;">RMS</span>(V):</div><div class="t" style="left:1389.8px;top:218.9px;font-size:12.5px;color:#1c1c1c;font-weight:normal;">6.146</div><div class="t" style="left:1444.6px;top:218.9px;font-size:12.5px;color:#1c1c1c;font-weight:normal;">6.225</div><div class="t" style="left:1499.2px;top:218.9px;font-size:12.5px;color:#1c1c1c;font-weight:normal;">5.916</div><div class="t" style="left:1313.3px;top:234.9px;font-size:12.5px;color:#1c1c1c;font-weight:normal;">V<span style="font-size:8.5px;position:relative;top:2px;">MAG</span>(V):</div><div class="t" style="left:1389.8px;top:234.9px;font-size:12.5px;color:#1c1c1c;font-weight:normal;">4.144</div><div class="t" style="left:1444.6px;top:234.9px;font-size:12.5px;color:#1c1c1c;font-weight:normal;">4.168</div><div class="t" style="left:1499.2px;top:234.9px;font-size:12.5px;color:#1c1c1c;font-weight:normal;">4.140</div><div class="t" style="left:1313.3px;top:250.9px;font-size:12.5px;color:#1c1c1c;font-weight:normal;">I<span style="font-size:8.5px;position:relative;top:2px;">RMS</span>(A):</div><div class="t" style="left:1389.8px;top:250.9px;font-size:12.5px;color:#1c1c1c;font-weight:normal;">655.8 m</div><div class="t" style="left:1444.6px;top:250.9px;font-size:12.5px;color:#1c1c1c;font-weight:normal;">736.5 m</div><div class="t" style="left:1499.2px;top:250.9px;font-size:12.5px;color:#1c1c1c;font-weight:normal;">715.0 m</div><div class="t" style="left:1313.3px;top:266.9px;font-size:12.5px;color:#1c1c1c;font-weight:normal;">I<span style="font-size:8.5px;position:relative;top:2px;">MAG</span>(A):</div><div class="t" style="left:1389.8px;top:266.9px;font-size:12.5px;color:#1c1c1c;font-weight:normal;">554.2 m</div><div class="t" style="left:1444.6px;top:266.9px;font-size:12.5px;color:#1c1c1c;font-weight:normal;">696.9 m</div><div class="t" style="left:1499.2px;top:266.9px;font-size:12.5px;color:#1c1c1c;font-weight:normal;">650.3 m</div><div class="t" style="left:1313.3px;top:282.9px;font-size:12.5px;color:#1c1c1c;font-weight:normal;">V CF:</div><div class="t" style="left:1389.8px;top:282.9px;font-size:12.5px;color:#1c1c1c;font-weight:normal;">7.110</div><div class="t" style="left:1444.6px;top:282.9px;font-size:12.5px;color:#1c1c1c;font-weight:normal;">6.873</div><div class="t" style="left:1499.2px;top:282.9px;font-size:12.5px;color:#1c1c1c;font-weight:normal;">7.296</div><div class="t" style="left:1313.3px;top:298.9px;font-size:12.5px;color:#1c1c1c;font-weight:normal;">I CF:</div><div class="t" style="left:1389.8px;top:298.9px;font-size:12.5px;color:#1c1c1c;font-weight:normal;">3.295</div><div class="t" style="left:1444.6px;top:298.9px;font-size:12.5px;color:#1c1c1c;font-weight:normal;">3.335</div><div class="t" style="left:1499.2px;top:298.9px;font-size:12.5px;color:#1c1c1c;font-weight:normal;">3.542</div><div class="t" style="left:1313.3px;top:314.9px;font-size:12.5px;color:#1c1c1c;font-weight:normal;">TrPwr(W):</div><div class="t" style="left:1389.8px;top:314.9px;font-size:12.5px;color:#1c1c1c;font-weight:normal;">1.359</div><div class="t" style="left:1444.6px;top:314.9px;font-size:12.5px;color:#1c1c1c;font-weight:normal;">1.632</div><div class="t" style="left:1499.2px;top:314.9px;font-size:12.5px;color:#1c1c1c;font-weight:normal;">1.266</div><div class="t" style="left:1313.3px;top:330.9px;font-size:12.5px;color:#1c1c1c;font-weight:normal;">RePwr(VAR):</div><div class="t" style="left:1389.8px;top:330.9px;font-size:12.5px;color:#1c1c1c;font-weight:normal;">-3.794</div><div class="t" style="left:1444.6px;top:330.9px;font-size:12.5px;color:#1c1c1c;font-weight:normal;">-4.284</div><div class="t" style="left:1499.2px;top:330.9px;font-size:12.5px;color:#1c1c1c;font-weight:normal;">-4.036</div><div class="t" style="left:1313.3px;top:346.9px;font-size:12.5px;color:#1c1c1c;font-weight:normal;">ApPwr(VA):</div><div class="t" style="left:1389.8px;top:346.9px;font-size:12.5px;color:#1c1c1c;font-weight:normal;">4.030</div><div class="t" style="left:1444.6px;top:346.9px;font-size:12.5px;color:#1c1c1c;font-weight:normal;">4.585</div><div class="t" style="left:1499.2px;top:346.9px;font-size:12.5px;color:#1c1c1c;font-weight:normal;">4.230</div><div class="t" style="left:1313.3px;top:362.9px;font-size:12.5px;color:#1c1c1c;font-weight:normal;">PF:</div><div class="t" style="left:1389.8px;top:362.9px;font-size:12.5px;color:#1c1c1c;font-weight:normal;">942.5 m</div><div class="t" style="left:1444.6px;top:362.9px;font-size:12.5px;color:#1c1c1c;font-weight:normal;">949.8 m</div><div class="t" style="left:1499.2px;top:362.9px;font-size:12.5px;color:#1c1c1c;font-weight:normal;">870.4 m</div><div class="t" style="left:1313.3px;top:378.9px;font-size:12.5px;color:#1c1c1c;font-weight:normal;">Phase:</div><div class="t" style="left:1389.8px;top:378.9px;font-size:12.5px;color:#1c1c1c;font-weight:normal;">-19.53 °</div><div class="t" style="left:1444.6px;top:378.9px;font-size:12.5px;color:#1c1c1c;font-weight:normal;">-18.23 °</div><div class="t" style="left:1499.2px;top:378.9px;font-size:12.5px;color:#1c1c1c;font-weight:normal;">-29.50 °</div><div class="b" style="left:1307.3px;top:397px;width:294px;height:1.2px;background:#2a2a2a;"></div><div class="t" style="left:1313.3px;top:398.8px;font-size:12.5px;color:#1c1c1c;font-weight:normal;">Freq:</div><div class="t" style="left:1433.8px;top:398.8px;font-size:12.5px;color:#1c1c1c;font-weight:normal;">157.3 Hz</div><div class="t" style="left:1313.3px;top:414.8px;font-size:12.5px;color:#1c1c1c;font-weight:normal;">Σ TrPwr:</div><div class="t" style="left:1433.8px;top:414.8px;font-size:12.5px;color:#1c1c1c;font-weight:normal;">4.257 W</div><div class="t" style="left:1313.3px;top:430.8px;font-size:12.5px;color:#1c1c1c;font-weight:normal;">Σ RePwr:</div><div class="t" style="left:1433.8px;top:430.8px;font-size:12.5px;color:#1c1c1c;font-weight:normal;">-12.11 VAR</div><div class="t" style="left:1313.3px;top:446.8px;font-size:12.5px;color:#1c1c1c;font-weight:normal;">Σ ApPwr:</div><div class="t" style="left:1433.8px;top:446.8px;font-size:12.5px;color:#1c1c1c;font-weight:normal;">12.85 VA</div><div class="b" style="left:1307.3px;top:471.9px;width:294px;height:16.100000000000023px;background:linear-gradient(#5a5a5a,#4c4c4c);border-radius:4px 4px 0 0;"></div><div class="b" style="left:1307.3px;top:488px;width:294px;height:217.20000000000005px;background:#c9c9c9;border-radius:0 0 4px 4px;"></div><div class="t" style="left:1311.6px;top:472.6px;font-size:12.7px;color:#e4e4e4;font-weight:normal;">3-Phase Meas 2: Harmonics'</div><div class="t" style="left:1389.8px;top:491.4px;font-size:12.5px;color:#1c1c1c;font-weight:normal;">Vab:Ia</div><div class="t" style="left:1389.8px;top:507.5px;font-size:12.5px;color:#1c1c1c;font-weight:normal;">LL-LN</div><div class="t" style="left:1444.6px;top:491.4px;font-size:12.5px;color:#1c1c1c;font-weight:normal;">Vbc:Ib</div><div class="t" style="left:1444.6px;top:507.5px;font-size:12.5px;color:#1c1c1c;font-weight:normal;">LL-LN</div><div class="t" style="left:1499.2px;top:491.4px;font-size:12.5px;color:#1c1c1c;font-weight:normal;">Vca:Ic</div><div class="t" style="left:1499.2px;top:507.5px;font-size:12.5px;color:#1c1c1c;font-weight:normal;">LL-LN</div><svg style="left:1391.6px;top:525.6px" width="45" height="11.6"><defs><clipPath id="pc1391525"><rect x="0.5" y="0.5" width="44" height="10.6" rx="5.3"/></clipPath></defs><g clip-path="url(#pc1391525)"><rect x="0" y="0" width="45" height="11.6" fill="#20ccd4"/><path d="M0 0 H25.5 L19.5 11.6 H0 Z" fill="#f8f020"/></g><rect x="0.5" y="0.5" width="44" height="10.6" rx="5.3" fill="none" stroke="#5a5a5a" stroke-width="1"/><text x="12.15" y="9.3" font-size="9.5" fill="#222" text-anchor="middle" font-family="Liberation Sans">1</text><text x="33.75" y="9.3" font-size="9.5" fill="#222" text-anchor="middle" font-family="Liberation Sans">2</text></svg><svg style="left:1446.3999999999999px;top:525.6px" width="45" height="11.6"><defs><clipPath id="pc1446525"><rect x="0.5" y="0.5" width="44" height="10.6" rx="5.3"/></clipPath></defs><g clip-path="url(#pc1446525)"><rect x="0" y="0" width="45" height="11.6" fill="#88cc3a"/><path d="M0 0 H25.5 L19.5 11.6 H0 Z" fill="#e8405e"/></g><rect x="0.5" y="0.5" width="44" height="10.6" rx="5.3" fill="none" stroke="#5a5a5a" stroke-width="1"/><text x="12.15" y="9.3" font-size="9.5" fill="#fff" text-anchor="middle" font-family="Liberation Sans">3</text><text x="33.75" y="9.3" font-size="9.5" fill="#222" text-anchor="middle" font-family="Liberation Sans">4</text></svg><svg style="left:1501.0px;top:525.6px" width="45" height="11.6"><defs><clipPath id="pc1501525"><rect x="0.5" y="0.5" width="44" height="10.6" rx="5.3"/></clipPath></defs><g clip-path="url(#pc1501525)"><rect x="0" y="0" width="45" height="11.6" fill="#2a2ad0"/><path d="M0 0 H25.5 L19.5 11.6 H0 Z" fill="#ff8c1a"/></g><rect x="0.5" y="0.5" width="44" height="10.6" rx="5.3" fill="none" stroke="#5a5a5a" stroke-width="1"/><text x="12.15" y="9.3" font-size="9.5" fill="#222" text-anchor="middle" font-family="Liberation Sans">5</text><text x="33.75" y="9.3" font-size="9.5" fill="#fff" text-anchor="middle" font-family="Liberation Sans">6</text></svg><div class="t" style="left:1313.3px;top:538.5px;font-size:12.5px;color:#1c1c1c;font-weight:normal;">F<span style="font-size:8.5px;position:relative;top:2px;">1</span> Mag(A):</div><div class="t" style="left:1389.8px;top:538.5px;font-size:12.5px;color:#1c1c1c;font-weight:normal;">394.6 m</div><div class="t" style="left:1444.6px;top:538.5px;font-size:12.5px;color:#1c1c1c;font-weight:normal;">494.2 m</div><div class="t" style="left:1499.2px;top:538.5px;font-size:12.5px;color:#1c1c1c;font-weight:normal;">461.1 m</div><div class="t" style="left:1313.3px;top:554.5px;font-size:12.5px;color:#1c1c1c;font-weight:normal;">F<span style="font-size:8.5px;position:relative;top:2px;">3</span> Mag(A):</div><div class="t" style="left:1389.8px;top:554.5px;font-size:12.5px;color:#1c1c1c;font-weight:normal;">102.0 m</div><div class="t" style="left:1444.6px;top:554.5px;font-size:12.5px;color:#1c1c1c;font-weight:normal;">79.52 m</div><div class="t" style="left:1499.2px;top:554.5px;font-size:12.5px;color:#1c1c1c;font-weight:normal;">21.72 m</div><div class="t" style="left:1313.3px;top:570.5px;font-size:12.5px;color:#1c1c1c;font-weight:normal;">THD-F(%):</div><div class="t" style="left:1389.8px;top:570.5px;font-size:12.5px;color:#1c1c1c;font-weight:normal;">65.46</div><div class="t" style="left:1444.6px;top:570.5px;font-size:12.5px;color:#1c1c1c;font-weight:normal;">51.89</div><div class="t" style="left:1499.2px;top:570.5px;font-size:12.5px;color:#1c1c1c;font-weight:normal;">61.19</div><div class="t" style="left:1313.3px;top:586.6px;font-size:12.5px;color:#1c1c1c;font-weight:normal;">THD-R(%):</div><div class="t" style="left:1389.8px;top:586.6px;font-size:12.5px;color:#1c1c1c;font-weight:normal;">54.77</div><div class="t" style="left:1444.6px;top:586.6px;font-size:12.5px;color:#1c1c1c;font-weight:normal;">46.06</div><div class="t" style="left:1499.2px;top:586.6px;font-size:12.5px;color:#1c1c1c;font-weight:normal;">52.19</div><div class="t" style="left:1313.3px;top:602.6px;font-size:12.5px;color:#1c1c1c;font-weight:normal;">V<span style="font-size:8.5px;position:relative;top:2px;">RMS</span>(V):</div><div class="t" style="left:1389.8px;top:602.6px;font-size:12.5px;color:#1c1c1c;font-weight:normal;">6.140</div><div class="t" style="left:1444.6px;top:602.6px;font-size:12.5px;color:#1c1c1c;font-weight:normal;">6.236</div><div class="t" style="left:1499.2px;top:602.6px;font-size:12.5px;color:#1c1c1c;font-weight:normal;">5.916</div><div class="t" style="left:1313.3px;top:618.6px;font-size:12.5px;color:#1c1c1c;font-weight:normal;">I<span style="font-size:8.5px;position:relative;top:2px;">RMS</span>(A):</div><div class="t" style="left:1389.8px;top:618.6px;font-size:12.5px;color:#1c1c1c;font-weight:normal;">655.1 m</div><div class="t" style="left:1444.6px;top:618.6px;font-size:12.5px;color:#1c1c1c;font-weight:normal;">737.4 m</div><div class="t" style="left:1499.2px;top:618.6px;font-size:12.5px;color:#1c1c1c;font-weight:normal;">716.2 m</div><div class="t" style="left:1313.3px;top:634.7px;font-size:12.5px;color:#1c1c1c;font-weight:normal;">TrPwr(W):</div><div class="t" style="left:1389.8px;top:634.7px;font-size:12.5px;color:#1c1c1c;font-weight:normal;">1.359</div><div class="t" style="left:1444.6px;top:634.7px;font-size:12.5px;color:#1c1c1c;font-weight:normal;">1.632</div><div class="t" style="left:1499.2px;top:634.7px;font-size:12.5px;color:#1c1c1c;font-weight:normal;">1.266</div><div class="t" style="left:1313.3px;top:650.7px;font-size:12.5px;color:#1c1c1c;font-weight:normal;">Status:</div><div class="t" style="left:1389.8px;top:650.7px;font-size:12.5px;color:#178f17;font-weight:bold;">Pass</div><div class="t" style="left:1444.6px;top:650.7px;font-size:12.5px;color:#178f17;font-weight:bold;">Pass</div><div class="t" style="left:1499.2px;top:650.7px;font-size:12.5px;color:#178f17;font-weight:bold;">Pass</div><div class="b" style="left:1307.3px;top:669.2px;width:294px;height:1.2px;background:#2a2a2a;"></div><div class="t" style="left:1313.3px;top:671.0px;font-size:12.5px;color:#1c1c1c;font-weight:normal;">Freq:</div><div class="t" style="left:1433.8px;top:671.0px;font-size:12.5px;color:#1c1c1c;font-weight:normal;">157.3 Hz</div><div class="t" style="left:1313.3px;top:686.4px;font-size:12.5px;color:#1c1c1c;font-weight:normal;">H<span style="font-size:8.5px;position:relative;top:2px;">COUNT</span>:</div><div class="t" style="left:1433.8px;top:686.4px;font-size:12.5px;color:#1c1c1c;font-weight:normal;">20.00</div><div class="b" style="left:1307.3px;top:710.8px;width:294px;height:15.200000000000045px;background:#0c0c0c;border-radius:4px 4px 0 0;"></div><div class="b" style="left:1307.3px;top:726px;width:294px;height:67px;background:#c9c9c9;border-radius:0 0 4px 4px;"></div><div class="t" style="left:1311.6px;top:710.6px;font-size:12.7px;color:#f0f0f0;font-weight:normal;">3-Phase Meas 3: Switching Ripple'</div><div class="t" style="left:1368.6px;top:731.2px;font-size:12.5px;color:#1c1c1c;font-weight:normal;">xy</div><svg style="left:1370.1999999999998px;top:748.6px" width="20" height="10.8"><rect x="0.5" y="0.5" width="19" height="9.8" rx="4.9" fill="#f8f020" stroke="#5a5a5a" stroke-width="1"/><text x="10.0" y="8.5" font-size="9.5" fill="#222" text-anchor="middle" font-family="Liberation Sans">1</text></svg><div class="t" style="left:1430.7px;top:731.2px;font-size:12.5px;color:#1c1c1c;font-weight:normal;">yz</div><svg style="left:1432.3px;top:748.6px" width="20" height="10.8"><rect x="0.5" y="0.5" width="19" height="9.8" rx="4.9" fill="#e8405e" stroke="#5a5a5a" stroke-width="1"/><text x="10.0" y="8.5" font-size="9.5" fill="#fff" text-anchor="middle" font-family="Liberation Sans">3</text></svg><div class="t" style="left:1493.9px;top:731.2px;font-size:12.5px;color:#1c1c1c;font-weight:normal;">zx</div><svg style="left:1495.5px;top:748.6px" width="20" height="10.8"><rect x="0.5" y="0.5" width="19" height="9.8" rx="4.9" fill="#ff8c1a" stroke="#5a5a5a" stroke-width="1"/><text x="10.0" y="8.5" font-size="9.5" fill="#222" text-anchor="middle" font-family="Liberation Sans">5</text></svg><div class="t" style="left:1313.3px;top:762.2px;font-size:12.5px;color:#1c1c1c;font-weight:normal;">RMS:</div><div class="t" style="left:1368.6px;top:762.2px;font-size:12.5px;color:#1c1c1c;font-weight:normal;">9.713 mV</div><div class="t" style="left:1430.7px;top:762.2px;font-size:12.5px;color:#1c1c1c;font-weight:normal;">3.686 mV</div><div class="t" style="left:1493.9px;top:762.2px;font-size:12.5px;color:#1c1c1c;font-weight:normal;">10.59 mV</div><div class="t" style="left:1313.3px;top:778.2px;font-size:12.5px;color:#1c1c1c;font-weight:normal;">Pk-Pk:</div><div class="t" style="left:1368.6px;top:778.2px;font-size:12.5px;color:#1c1c1c;font-weight:normal;">87.53 V</div><div class="t" style="left:1430.7px;top:778.2px;font-size:12.5px;color:#1c1c1c;font-weight:normal;">87.33 V</div><div class="t" style="left:1493.9px;top:778.2px;font-size:12.5px;color:#1c1c1c;font-weight:normal;">87.22 V</div><svg style="left:1294px;top:420px" width="6" height="20"><circle cx="3" cy="3" r="1.6" fill="#cfcfcf"/><circle cx="3" cy="9.5" r="1.6" fill="#cfcfcf"/><circle cx="3" cy="16" r="1.6" fill="#cfcfcf"/></svg><div class="b" style="left:7px;top:835.4px;width:24.5px;height:60.6px;border:1.3px solid #5a524c;border-radius:6px;background:linear-gradient(#363636,#2c2c2c 60%,#242424);box-shadow:inset 0 -2px 3px rgba(0,0,0,0.4);"></div><svg style="left:12px;top:856px" width="14" height="20"><path d="M10 2 L3.5 9.5 L10 17" fill="none" stroke="#a8a8a8" stroke-width="3"/></svg><div class="b" style="left:709.6px;top:835.2px;width:24px;height:61px;border:1.3px solid #4e4844;border-radius:6px;background:#2e2e2e;"></div><svg style="left:714px;top:856px" width="14" height="20"><path d="M4 2 L10.5 9.5 L4 17" fill="none" stroke="#a8a8a8" stroke-width="3"/></svg><div class="b" style="left:38.9px;top:832.9px;width:90.6px;height:15.9px;background:#2424c8;border-radius:4px 4px 0 0;"></div><div class="b" style="left:38.9px;top:848.8px;width:90.6px;height:51px;background:#d2d2d2;border-radius:0 0 4px 4px;"></div><div class="t" style="left:43.5px;top:833.9px;font-size:13px;color:#f0f0f0;font-weight:normal;">Ch 6</div><div class="t" style="left:44.4px;top:853.5px;font-size:13px;color:#1a1a1a;font-weight:normal;">680 mA/div</div><div class="t" style="left:44.4px;top:869.5px;font-size:13px;color:#1a1a1a;font-weight:normal;">1 MΩ</div><div class="t" style="left:44.4px;top:885.5px;font-size:13px;color:#1a1a1a;font-weight:normal;">200 kHz</div><svg style="left:82.5px;top:868.5px" width="12" height="12"><path d="M1 4.5 C1.3 0.5, 3.5 0.3, 4.5 4 L5.8 8 C6.8 11.5, 9.5 11.5, 9.8 7" fill="none" stroke="#1a1a1a" stroke-width="1.4"/></svg><div class="t" style="left:100.5px;top:883.1px;font-size:8.5px;color:#1a1a1a;font-weight:bold;">B<span style="font-size:7.5px;position:relative;top:1.5px">w</span></div><div class="b" style="left:134.2px;top:832.9px;width:90.6px;height:15.9px;background:#8c5a26;border-radius:4px 4px 0 0;"></div><div class="b" style="left:134.2px;top:848.8px;width:90.6px;height:51px;background:#8a8a8a;border-radius:0 0 4px 4px;"></div><div class="t" style="left:138.8px;top:833.9px;font-size:13px;color:#2a2a2a;font-weight:normal;">Math 1</div><div class="t" style="left:139.7px;top:853.5px;font-size:13px;color:#262626;font-weight:normal;">1.8378 V/div</div><div class="t" style="left:139.7px;top:869.5px;font-size:13px;color:#262626;font-weight:normal;">Static[lowp...</div><div class="t" style="left:139.7px;top:885.5px;font-size:13px;color:#262626;font-weight:normal;">Meas 1</div><div class="b" style="left:229.3px;top:832.9px;width:90.6px;height:15.9px;background:#522a62;border-radius:4px 4px 0 0;"></div><div class="b" style="left:229.3px;top:848.8px;width:90.6px;height:51px;background:#8a8a8a;border-radius:0 0 4px 4px;"></div><div class="t" style="left:233.9px;top:833.9px;font-size:13px;color:#cfcfcf;font-weight:normal;">Math 2</div><div class="t" style="left:234.8px;top:853.5px;font-size:13px;color:#262626;font-weight:normal;">37.4497 ms...</div><div class="t" style="left:234.8px;top:869.5px;font-size:13px;color:#262626;font-weight:normal;">Intg(ch1*ch2)</div><div class="t" style="left:234.8px;top:885.5px;font-size:13px;color:#262626;font-weight:normal;">Meas 1</div><div class="b" style="left:324.2px;top:832.9px;width:90.6px;height:15.9px;background:#7e2828;border-radius:4px 4px 0 0;"></div><div class="b" style="left:324.2px;top:848.8px;width:90.6px;height:51px;background:#8a8a8a;border-radius:0 0 4px 4px;"></div><div class="t" style="left:328.8px;top:833.9px;font-size:13px;color:#d8d8d8;font-weight:normal;">Math 3</div><div class="t" style="left:329.7px;top:853.5px;font-size:13px;color:#262626;font-weight:normal;">18.8689 W/div</div><div class="t" style="left:329.7px;top:869.5px;font-size:13px;color:#262626;font-weight:normal;">Ch1*ch2</div><div class="t" style="left:329.7px;top:885.5px;font-size:13px;color:#262626;font-weight:normal;">Meas 1</div><div class="b" style="left:419.6px;top:832.9px;width:90.6px;height:15.9px;background:#5e7a30;border-radius:4px 4px 0 0;"></div><div class="b" style="left:419.6px;top:848.8px;width:90.6px;height:51px;background:#8a8a8a;border-radius:0 0 4px 4px;"></div><div class="t" style="left:424.2px;top:833.9px;font-size:13px;color:#1a1a1a;font-weight:normal;">Math 4</div><div class="t" style="left:425.1px;top:853.5px;font-size:13px;color:#262626;font-weight:normal;">1 V/div</div><div class="t" style="left:425.1px;top:869.5px;font-size:13px;color:#262626;font-weight:normal;">Intg(ch3*ch4)</div><div class="t" style="left:425.1px;top:885.5px;font-size:13px;color:#262626;font-weight:normal;">Meas 1</div><div class="b" style="left:514.7px;top:832.9px;width:90.6px;height:15.9px;background:#8c5a26;border-radius:4px 4px 0 0;"></div><div class="b" style="left:514.7px;top:848.8px;width:90.6px;height:51px;background:#8a8a8a;border-radius:0 0 4px 4px;"></div><div class="t" style="left:519.3px;top:833.9px;font-size:13px;color:#1a1a1a;font-weight:normal;">Math 5</div><div class="t" style="left:520.2px;top:853.5px;font-size:13px;color:#262626;font-weight:normal;">1 V/div</div><div class="t" style="left:520.2px;top:869.5px;font-size:13px;color:#262626;font-weight:normal;">Ch3*ch4</div><div class="t" style="left:520.2px;top:885.5px;font-size:13px;color:#262626;font-weight:normal;">Meas 1</div><div class="b" style="left:609.8px;top:832.9px;width:90.6px;height:15.9px;background:#522a62;border-radius:4px 4px 0 0;"></div><div class="b" style="left:609.8px;top:848.8px;width:90.6px;height:51px;background:#8a8a8a;border-radius:0 0 4px 4px;"></div><div class="t" style="left:614.4px;top:833.9px;font-size:13px;color:#cfcfcf;font-weight:normal;">Math 6</div><div class="t" style="left:615.3px;top:853.5px;font-size:13px;color:#262626;font-weight:normal;">1.8378 V/div</div><div class="t" style="left:615.3px;top:869.5px;font-size:13px;color:#262626;font-weight:normal;">Static[lowp...</div><div class="t" style="left:615.3px;top:885.5px;font-size:13px;color:#262626;font-weight:normal;">Meas 2</div><div class="b" style="left:833.7px;top:833px;width:1.2px;height:65.4px;background:#4a4541;"></div><div class="b" style="left:960.9px;top:833px;width:1.2px;height:65.4px;background:#4a4541;"></div><div class="b" style="left:1054.3px;top:833px;width:1.2px;height:65.4px;background:#4a4541;"></div><div class="b" style="left:1512.2px;top:833px;width:1.2px;height:65.4px;background:#4a4541;"></div><div class="b" style="left:843px;top:832.5px;width:32.700000000000045px;height:65.9px;border:1.3px solid #5a524c;border-radius:6px;background:linear-gradient(#363636,#2c2c2c 60%,#242424);box-shadow:inset 0 -2px 3px rgba(0,0,0,0.4);"></div><div class="b" style="left:846.2px;top:839.2px;width:26.300000000000047px;height:1.8px;background:#f0e020;"></div><div class="t" style="left:659.4px;width:400px;text-align:center;top:849.0px;font-size:13px;color:#ececec;font-weight:normal;">Add</div><div class="t" style="left:659.4px;width:400px;text-align:center;top:862.5px;font-size:13px;color:#ececec;font-weight:normal;">New</div><div class="t" style="left:659.4px;width:400px;text-align:center;top:876.0px;font-size:13px;color:#ececec;font-weight:normal;">Math</div><div class="b" style="left:881px;top:832.5px;width:32.700000000000045px;height:65.9px;border:1.3px solid #5a524c;border-radius:6px;background:linear-gradient(#363636,#2c2c2c 60%,#242424);box-shadow:inset 0 -2px 3px rgba(0,0,0,0.4);"></div><div class="b" style="left:884.2px;top:839.2px;width:26.300000000000047px;height:1.8px;background:#b0b4c4;"></div><div class="t" style="left:697.4px;width:400px;text-align:center;top:849.0px;font-size:13px;color:#ececec;font-weight:normal;">Add</div><div class="t" style="left:697.4px;width:400px;text-align:center;top:862.5px;font-size:13px;color:#ececec;font-weight:normal;">New</div><div class="t" style="left:697.4px;width:400px;text-align:center;top:876.0px;font-size:13px;color:#ececec;font-weight:normal;">Ref</div><div class="b" style="left:918.8px;top:832.5px;width:32.700000000000045px;height:65.9px;border:1.3px solid #5a524c;border-radius:6px;background:linear-gradient(#363636,#2c2c2c 60%,#242424);box-shadow:inset 0 -2px 3px rgba(0,0,0,0.4);"></div><div class="b" style="left:922.0px;top:839.2px;width:26.300000000000047px;height:1.8px;background:#c050f0;"></div><div class="t" style="left:735.1px;width:400px;text-align:center;top:849.0px;font-size:13px;color:#ececec;font-weight:normal;">Add</div><div class="t" style="left:735.1px;width:400px;text-align:center;top:862.5px;font-size:13px;color:#ececec;font-weight:normal;">New</div><div class="t" style="left:735.1px;width:400px;text-align:center;top:876.0px;font-size:13px;color:#ececec;font-weight:normal;">Bus</div><div class="b" style="left:970.2px;top:832.5px;width:33.19999999999993px;height:65.9px;border:1.3px solid #5a524c;border-radius:6px;background:linear-gradient(#363636,#2c2c2c 60%,#242424);box-shadow:inset 0 -2px 3px rgba(0,0,0,0.4);"></div><div class="b" style="left:973.4000000000001px;top:839.2px;width:26.799999999999933px;height:1.8px;background:#454545;"></div><div class="t" style="left:786.8px;width:400px;text-align:center;top:862.9px;font-size:13px;color:#ececec;font-weight:normal;">DVM</div><div class="b" style="left:1012.2px;top:832.5px;width:33.5px;height:65.9px;border:1.3px solid #5a524c;border-radius:6px;background:linear-gradient(#363636,#2c2c2c 60%,#242424);box-shadow:inset 0 -2px 3px rgba(0,0,0,0.4);"></div><div class="b" style="left:1015.4000000000001px;top:839.2px;width:27.1px;height:1.8px;background:#454545;"></div><div class="t" style="left:829.0px;width:400px;text-align:center;top:862.9px;font-size:13px;color:#ececec;font-weight:normal;">AFG</div><div class="b" style="left:1064px;top:834.2px;width:167px;height:15.3px;background:linear-gradient(#5a5a5a,#4e4e4e);border-radius:4px 4px 0 0;"></div><div class="b" style="left:1064px;top:849.5px;width:167px;height:49.3px;background:#c9c9c9;border-radius:0 0 4px 4px;"></div><div class="t" style="left:1069.2px;top:833.9px;font-size:13px;color:#e4e4e4;font-weight:normal;">Horizontal</div><div class="t" style="left:1069.5px;top:853.7px;font-size:12.6px;color:#1a1a1a;font-weight:normal;">12.7592 ms/div 127.592 ms</div><div class="t" style="left:1069.5px;top:869.6px;font-size:12.6px;color:#1a1a1a;font-weight:normal;">SR: 1 MS/s</div><div class="t" style="left:1158.0px;top:869.6px;font-size:12.6px;color:#1a1a1a;font-weight:normal;">1 µs/pt</div><div class="t" style="left:1069.5px;top:885.2px;font-size:12.6px;color:#1a1a1a;font-weight:normal;">RL: 127.592 ...</div><div class="t" style="left:1171.0px;top:885.2px;font-size:12.6px;color:#1a1a1a;font-weight:normal;">50%</div><svg style="left:1158px;top:884px" width="9" height="11"><path d="M0.8 0.8 H8.2 V7.5 H5.8 L4.5 10 L3.2 7.5 H0.8 Z" fill="#f08a20" stroke="#6a3a08" stroke-width="0.8"/><path d="M2.5 2.6 H6.5 M4.5 2.6 V6.5" stroke="#222" stroke-width="1.2"/></svg><div class="b" style="left:1236.8px;top:834.2px;width:133.29999999999995px;height:15.3px;background:linear-gradient(#5a5a5a,#4e4e4e);border-radius:4px 4px 0 0;"></div><div class="b" style="left:1236.8px;top:849.5px;width:133.29999999999995px;height:49.3px;background:#c9c9c9;border-radius:0 0 4px 4px;"></div><div class="t" style="left:1242.0px;top:833.9px;font-size:13px;color:#e4e4e4;font-weight:normal;">Trigger</div><div class="b" style="left:1242.6px;top:854.6px;width:24.1px;height:12.9px;background:#f4f020;border:1px solid #3a3a00;border-radius:5px;font-size:11px;line-height:11px;text-align:center;color:#1a1a1a;">1</div><svg style="left:1275px;top:855px" width="16" height="13"><path d="M1 11.5 H4.5 L11 1.5 H15" fill="none" stroke="#4848a8" stroke-width="1.4"/></svg><div class="t" style="left:1298.0px;top:853.7px;font-size:12.6px;color:#1a1a1a;font-weight:normal;">440 mV</div><div class="b" style="left:1375.5px;top:834.2px;width:125.5px;height:15.3px;background:linear-gradient(#5a5a5a,#4e4e4e);border-radius:4px 4px 0 0;"></div><div class="b" style="left:1375.5px;top:849.5px;width:125.5px;height:49.3px;background:#c9c9c9;border-radius:0 0 4px 4px;"></div><div class="t" style="left:1380.7px;top:833.9px;font-size:13px;color:#e4e4e4;font-weight:normal;">Acquisition</div><div class="t" style="left:1381.5px;top:853.7px;font-size:12.6px;color:#1a1a1a;font-weight:normal;">Manual,</div><div class="t" style="right:110.0px;top:853.7px;font-size:12.6px;color:#1a1a1a;font-weight:normal;">Analyze</div><div class="t" style="left:1381.5px;top:869.6px;font-size:12.6px;color:#1a1a1a;font-weight:normal;">High Res: 16 bits</div><div class="t" style="left:1381.5px;top:885.2px;font-size:12.6px;color:#1a1a1a;font-weight:normal;">6 Acqs</div><div class="b" style="left:1521.4px;top:832.7px;width:75.2px;height:29.5px;background:#f21c26;border:1px solid #8a1010;border-radius:5px;box-shadow:inset 0 -2px 2px rgba(0,0,0,0.2);"></div><div class="t" style="left:1359.0px;width:400px;text-align:center;top:840.3px;font-size:11px;color:#ffffff;font-weight:bold;">Stopped</div></div></body></html>
